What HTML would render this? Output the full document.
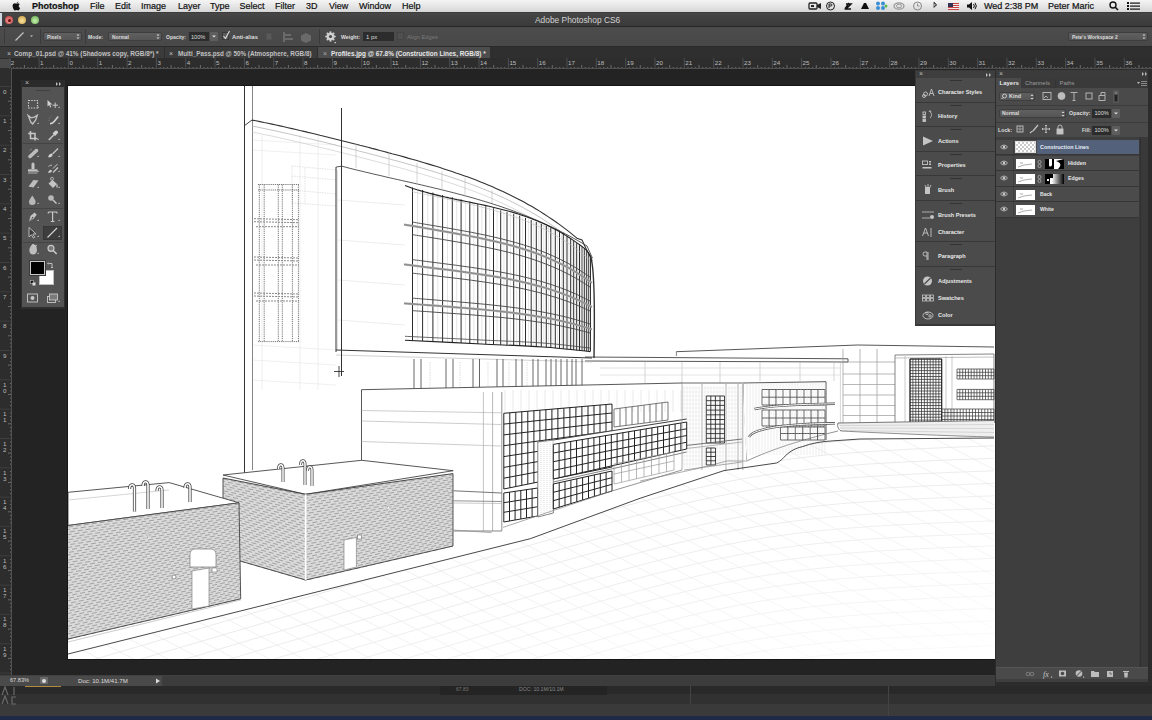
<!DOCTYPE html>
<html><head><meta charset="utf-8">
<style>
*{margin:0;padding:0;box-sizing:border-box}
html,body{width:1152px;height:720px;overflow:hidden;background:#232323;font-family:"Liberation Sans",sans-serif;position:relative}
.a{position:absolute}
.mt{top:1px;font-size:9px;line-height:11px;color:#111;white-space:nowrap;-webkit-text-stroke:0.2px #111}
.ot{color:#dedede;white-space:nowrap}
.dd{background:linear-gradient(#606060,#555);border-radius:2px;border:1px solid #3e3e3e}
.tt{font-size:7px;line-height:13px;color:#c0c0c0;white-space:nowrap}
.pt{font-weight:bold;color:#e8e8e8;white-space:nowrap;line-height:9px}
</style></head><body>
<svg class="a" style="left:0;top:0" width="1152" height="720" viewBox="0 0 1152 720">
<defs><clipPath id="cc"><rect x="68" y="86" width="927" height="573"/></clipPath><clipPath id="road"><path d="M68 654L530.3 538.7L640 498.3L724 470.6L776.6 463C781 461 783 458 785 456.3C790 451 796 448 802.3 446.7C812 443 822 441.5 831 441L860 439L994 438L994 659L68 659Z"/></clipPath></defs>
<rect x="68" y="86" width="927" height="573" fill="#fff"/>
<g clip-path="url(#cc)" fill="none">
<defs><linearGradient id="gfade" x1="0" y1="0" x2="1" y2="1"><stop offset="0" stop-color="#fff" stop-opacity="1"/><stop offset="0.55" stop-color="#fff" stop-opacity="0.85"/><stop offset="1" stop-color="#fff" stop-opacity="0.15"/></linearGradient><mask id="gm"><rect x="68" y="430" width="927" height="230" fill="url(#gfade)"/></mask></defs>
<g clip-path="url(#road)" mask="url(#gm)">
<path d="M60 537.2L72 533.8L84 530.4L96 527.0L108 523.7L120 520.3L132 516.9L144 513.5L156 510.1L168 506.8L180 503.4L192 500.0L204 496.6L216 493.2L228 489.9L240 486.5L252 483.1L264 479.7L276 476.3L288 473.0L300 469.6L312 466.2L324 462.8L336 459.4L348 456.1L360 452.7L372 449.3L384 445.9L396 442.6L408 439.2L420 435.8L432 432.5L444 429.1L456 425.7L468 422.4L480 419.0L492 415.7L504 412.3L516 409.0L528 405.7L540 402.4L552 399.1L564 395.8L576 392.5L588 389.3L600 386.1L612 382.9L624 379.8L636 376.7L648 373.7L660 370.8L672 367.9L684 365.2L696 362.5L708 359.9L720 357.5L732 355.2L744 353.1L756 351.1L768 349.3L780 347.6L792 346.0L804 344.6L816 343.3L828 342.2L840 341.1L852 340.2L864 339.3L876 338.6L888 337.9L900 337.2L912 336.6L924 336.0L936 335.5L948 335.0L960 334.5L972 334.1L984 333.6L996 333.2M60 550.4L72 547.0L84 543.6L96 540.2L108 536.8L120 533.4L132 530.0L144 526.7L156 523.3L168 519.9L180 516.5L192 513.1L204 509.7L216 506.3L228 502.9L240 499.5L252 496.1L264 492.7L276 489.3L288 485.9L300 482.6L312 479.2L324 475.8L336 472.4L348 469.0L360 465.6L372 462.2L384 458.8L396 455.4L408 452.1L420 448.7L432 445.3L444 441.9L456 438.5L468 435.2L480 431.8L492 428.4L504 425.1L516 421.7L528 418.4L540 415.1L552 411.8L564 408.5L576 405.2L588 402.0L600 398.8L612 395.6L624 392.4L636 389.4L648 386.3L660 383.4L672 380.5L684 377.8L696 375.1L708 372.5L720 370.1L732 367.8L744 365.6L756 363.6L768 361.8L780 360.1L792 358.5L804 357.1L816 355.8L828 354.7L840 353.6L852 352.7L864 351.8L876 351.1L888 350.4L900 349.7L912 349.1L924 348.5L936 348.0L948 347.5L960 347.0L972 346.6L984 346.1L996 345.7M60 563.6L72 560.2L84 556.8L96 553.4L108 550.0L120 546.6L132 543.2L144 539.8L156 536.4L168 533.0L180 529.6L192 526.2L204 522.8L216 519.4L228 516.0L240 512.6L252 509.2L264 505.7L276 502.3L288 498.9L300 495.5L312 492.1L324 488.7L336 485.3L348 481.9L360 478.5L372 475.1L384 471.7L396 468.3L408 464.9L420 461.5L432 458.1L444 454.7L456 451.4L468 448.0L480 444.6L492 441.2L504 437.9L516 434.5L528 431.1L540 427.8L552 424.5L564 421.2L576 417.9L588 414.6L600 411.4L612 408.2L624 405.1L636 402.0L648 399.0L660 396.0L672 393.1L684 390.3L696 387.7L708 385.1L720 382.7L732 380.4L744 378.2L756 376.2L768 374.3L780 372.6L792 371.1L804 369.7L816 368.4L828 367.2L840 366.2L852 365.2L864 364.4L876 363.6L888 362.9L900 362.2L912 361.6L924 361.0L936 360.5L948 360.0L960 359.5L972 359.1L984 358.6L996 358.2M60 576.9L72 573.4L84 570.0L96 566.6L108 563.2L120 559.8L132 556.4L144 552.9L156 549.5L168 546.1L180 542.7L192 539.3L204 535.9L216 532.4L228 529.0L240 525.6L252 522.2L264 518.8L276 515.3L288 511.9L300 508.5L312 505.1L324 501.7L336 498.3L348 494.9L360 491.4L372 488.0L384 484.6L396 481.2L408 477.8L420 474.4L432 471.0L444 467.6L456 464.2L468 460.8L480 457.4L492 454.0L504 450.6L516 447.3L528 443.9L540 440.5L552 437.2L564 433.9L576 430.6L588 427.3L600 424.1L612 420.9L624 417.7L636 414.6L648 411.6L660 408.6L672 405.7L684 402.9L696 400.2L708 397.7L720 395.2L732 392.9L744 390.8L756 388.7L768 386.9L780 385.2L792 383.6L804 382.2L816 380.9L828 379.7L840 378.7L852 377.7L864 376.9L876 376.1L888 375.4L900 374.7L912 374.1L924 373.5L936 373.0L948 372.5L960 372.0L972 371.6L984 371.1L996 370.7M60 590.1L72 586.7L84 583.2L96 579.8L108 576.4L120 572.9L132 569.5L144 566.1L156 562.6L168 559.2L180 555.8L192 552.4L204 548.9L216 545.5L228 542.1L240 538.6L252 535.2L264 531.8L276 528.4L288 524.9L300 521.5L312 518.1L324 514.6L336 511.2L348 507.8L360 504.4L372 500.9L384 497.5L396 494.1L408 490.7L420 487.2L432 483.8L444 480.4L456 477.0L468 473.6L480 470.2L492 466.8L504 463.4L516 460.0L528 456.6L540 453.3L552 449.9L564 446.6L576 443.3L588 440.0L600 436.8L612 433.6L624 430.4L636 427.3L648 424.2L660 421.2L672 418.3L684 415.5L696 412.8L708 410.3L720 407.8L732 405.5L744 403.3L756 401.3L768 399.4L780 397.7L792 396.1L804 394.7L816 393.4L828 392.2L840 391.2L852 390.2L864 389.4L876 388.6L888 387.9L900 387.2L912 386.6L924 386.0L936 385.5L948 385.0L960 384.5L972 384.1L984 383.6L996 383.2M60 603.3L72 599.9L84 596.4L96 593.0L108 589.5L120 586.1L132 582.7L144 579.2L156 575.8L168 572.3L180 568.9L192 565.4L204 562.0L216 558.6L228 555.1L240 551.7L252 548.2L264 544.8L276 541.4L288 537.9L300 534.5L312 531.0L324 527.6L336 524.2L348 520.7L360 517.3L372 513.8L384 510.4L396 507.0L408 503.5L420 500.1L432 496.7L444 493.2L456 489.8L468 486.4L480 483.0L492 479.6L504 476.2L516 472.8L528 469.4L540 466.0L552 462.6L564 459.3L576 456.0L588 452.7L600 449.4L612 446.2L624 443.0L636 439.9L648 436.8L660 433.9L672 430.9L684 428.1L696 425.4L708 422.8L720 420.4L732 418.0L744 415.9L756 413.8L768 412.0L780 410.2L792 408.7L804 407.2L816 405.9L828 404.8L840 403.7L852 402.8L864 401.9L876 401.1L888 400.4L900 399.7L912 399.1L924 398.6L936 398.0L948 397.5L960 397.0L972 396.6L984 396.1L996 395.7M60 616.5L72 613.1L84 609.6L96 606.2L108 602.7L120 599.3L132 595.8L144 592.4L156 588.9L168 585.4L180 582.0L192 578.5L204 575.1L216 571.6L228 568.2L240 564.7L252 561.3L264 557.8L276 554.4L288 550.9L300 547.5L312 544.0L324 540.5L336 537.1L348 533.6L360 530.2L372 526.7L384 523.3L396 519.8L408 516.4L420 512.9L432 509.5L444 506.1L456 502.6L468 499.2L480 495.8L492 492.3L504 488.9L516 485.5L528 482.1L540 478.7L552 475.4L564 472.0L576 468.7L588 465.4L600 462.1L612 458.9L624 455.7L636 452.5L648 449.5L660 446.5L672 443.5L684 440.7L696 438.0L708 435.4L720 432.9L732 430.6L744 428.4L756 426.4L768 424.5L780 422.8L792 421.2L804 419.8L816 418.5L828 417.3L840 416.2L852 415.3L864 414.4L876 413.6L888 412.9L900 412.2L912 411.6L924 411.1L936 410.5L948 410.0L960 409.5L972 409.1L984 408.6L996 408.2M60 629.8L72 626.3L84 622.8L96 619.4L108 615.9L120 612.4L132 609.0L144 605.5L156 602.0L168 598.6L180 595.1L192 591.6L204 588.2L216 584.7L228 581.2L240 577.8L252 574.3L264 570.8L276 567.4L288 563.9L300 560.4L312 557.0L324 553.5L336 550.0L348 546.6L360 543.1L372 539.6L384 536.2L396 532.7L408 529.3L420 525.8L432 522.3L444 518.9L456 515.4L468 512.0L480 508.6L492 505.1L504 501.7L516 498.3L528 494.9L540 491.5L552 488.1L564 484.7L576 481.4L588 478.1L600 474.8L612 471.5L624 468.3L636 465.2L648 462.1L660 459.1L672 456.2L684 453.3L696 450.6L708 448.0L720 445.5L732 443.2L744 441.0L756 438.9L768 437.0L780 435.3L792 433.7L804 432.3L816 431.0L828 429.8L840 428.7L852 427.8L864 426.9L876 426.1L888 425.4L900 424.7L912 424.1L924 423.6L936 423.0L948 422.5L960 422.0L972 421.6L984 421.1L996 420.7M60 643.0L72 639.5L84 636.0L96 632.6L108 629.1L120 625.6L132 622.1L144 618.6L156 615.2L168 611.7L180 608.2L192 604.7L204 601.2L216 597.8L228 594.3L240 590.8L252 587.3L264 583.8L276 580.4L288 576.9L300 573.4L312 569.9L324 566.5L336 563.0L348 559.5L360 556.0L372 552.5L384 549.1L396 545.6L408 542.1L420 538.7L432 535.2L444 531.7L456 528.3L468 524.8L480 521.3L492 517.9L504 514.5L516 511.0L528 507.6L540 504.2L552 500.8L564 497.4L576 494.1L588 490.7L600 487.4L612 484.2L624 481.0L636 477.8L648 474.7L660 471.7L672 468.8L684 465.9L696 463.2L708 460.6L720 458.1L732 455.7L744 453.5L756 451.5L768 449.6L780 447.8L792 446.2L804 444.8L816 443.5L828 442.3L840 441.2L852 440.3L864 439.4L876 438.6L888 437.9L900 437.2L912 436.6L924 436.1L936 435.5L948 435.0L960 434.5L972 434.1L984 433.6L996 433.2M60 656.2L72 652.7L84 649.2L96 645.8L108 642.3L120 638.8L132 635.3L144 631.8L156 628.3L168 624.8L180 621.3L192 617.8L204 614.3L216 610.8L228 607.3L240 603.8L252 600.4L264 596.9L276 593.4L288 589.9L300 586.4L312 582.9L324 579.4L336 575.9L348 572.4L360 568.9L372 565.4L384 562.0L396 558.5L408 555.0L420 551.5L432 548.0L444 544.5L456 541.1L468 537.6L480 534.1L492 530.7L504 527.2L516 523.8L528 520.3L540 516.9L552 513.5L564 510.1L576 506.8L588 503.4L600 500.1L612 496.8L624 493.6L636 490.5L648 487.3L660 484.3L672 481.4L684 478.5L696 475.8L708 473.1L720 470.6L732 468.3L744 466.1L756 464.0L768 462.1L780 460.4L792 458.8L804 457.3L816 456.0L828 454.8L840 453.8L852 452.8L864 451.9L876 451.1L888 450.4L900 449.7L912 449.1L924 448.6L936 448.0L948 447.5L960 447.0L972 446.6L984 446.2L996 445.7M60 669.5L72 666.0L84 662.4L96 658.9L108 655.4L120 651.9L132 648.4L144 644.9L156 641.4L168 637.9L180 634.4L192 630.9L204 627.4L216 623.9L228 620.4L240 616.9L252 613.4L264 609.9L276 606.4L288 602.9L300 599.4L312 595.9L324 592.4L336 588.9L348 585.4L360 581.9L372 578.4L384 574.9L396 571.4L408 567.9L420 564.4L432 560.9L444 557.4L456 553.9L468 550.4L480 546.9L492 543.5L504 540.0L516 536.5L528 533.1L540 529.7L552 526.2L564 522.8L576 519.5L588 516.1L600 512.8L612 509.5L624 506.3L636 503.1L648 500.0L660 496.9L672 494.0L684 491.1L696 488.3L708 485.7L720 483.2L732 480.8L744 478.6L756 476.6L768 474.6L780 472.9L792 471.3L804 469.8L816 468.5L828 467.3L840 466.3L852 465.3L864 464.4L876 463.6L888 462.9L900 462.3L912 461.6L924 461.1L936 460.5L948 460.0L960 459.6L972 459.1L984 458.7L996 458.2M60 682.7L72 679.2L84 675.6L96 672.1L108 668.6L120 665.1L132 661.6L144 658.1L156 654.5L168 651.0L180 647.5L192 644.0L204 640.5L216 637.0L228 633.4L240 629.9L252 626.4L264 622.9L276 619.4L288 615.9L300 612.3L312 608.8L324 605.3L336 601.8L348 598.3L360 594.8L372 591.3L384 587.7L396 584.2L408 580.7L420 577.2L432 573.7L444 570.2L456 566.7L468 563.2L480 559.7L492 556.2L504 552.8L516 549.3L528 545.8L540 542.4L552 539.0L564 535.5L576 532.2L588 528.8L600 525.5L612 522.2L624 518.9L636 515.7L648 512.6L660 509.5L672 506.6L684 503.7L696 500.9L708 498.3L720 495.8L732 493.4L744 491.2L756 489.1L768 487.2L780 485.4L792 483.8L804 482.4L816 481.1L828 479.9L840 478.8L852 477.8L864 476.9L876 476.2L888 475.4L900 474.8L912 474.1L924 473.6L936 473.0L948 472.5L960 472.1L972 471.6L984 471.2L996 470.7M60 695.9L72 692.4L84 688.9L96 685.3L108 681.8L120 678.3L132 674.7L144 671.2L156 667.7L168 664.1L180 660.6L192 657.1L204 653.6L216 650.0L228 646.5L240 643.0L252 639.4L264 635.9L276 632.4L288 628.8L300 625.3L312 621.8L324 618.3L336 614.7L348 611.2L360 607.7L372 604.2L384 600.6L396 597.1L408 593.6L420 590.1L432 586.6L444 583.0L456 579.5L468 576.0L480 572.5L492 569.0L504 565.5L516 562.0L528 558.6L540 555.1L552 551.7L564 548.2L576 544.8L588 541.5L600 538.1L612 534.8L624 531.6L636 528.4L648 525.2L660 522.2L672 519.2L684 516.3L696 513.5L708 510.9L720 508.3L732 506.0L744 503.7L756 501.6L768 499.7L780 498.0L792 496.4L804 494.9L816 493.6L828 492.4L840 491.3L852 490.3L864 489.5L876 488.7L888 487.9L900 487.3L912 486.7L924 486.1L936 485.5L948 485.0L960 484.6L972 484.1L984 483.7L996 483.2M60 709.1L72 705.6L84 702.1L96 698.5L108 695.0L120 691.4L132 687.9L144 684.3L156 680.8L168 677.3L180 673.7L192 670.2L204 666.6L216 663.1L228 659.5L240 656.0L252 652.5L264 648.9L276 645.4L288 641.8L300 638.3L312 634.8L324 631.2L336 627.7L348 624.1L360 620.6L372 617.1L384 613.5L396 610.0L408 606.5L420 602.9L432 599.4L444 595.9L456 592.3L468 588.8L480 585.3L492 581.8L504 578.3L516 574.8L528 571.3L540 567.8L552 564.4L564 561.0L576 557.5L588 554.2L600 550.8L612 547.5L624 544.2L636 541.0L648 537.9L660 534.8L672 531.8L684 528.9L696 526.1L708 523.4L720 520.9L732 518.5L744 516.3L756 514.2L768 512.3L780 510.5L792 508.9L804 507.4L816 506.1L828 504.9L840 503.8L852 502.8L864 502.0L876 501.2L888 500.4L900 499.8L912 499.2L924 498.6L936 498.0L948 497.5L960 497.1L972 496.6L984 496.2L996 495.7M60 722.4L72 718.8L84 715.3L96 711.7L108 708.1L120 704.6L132 701.0L144 697.5L156 693.9L168 690.4L180 686.8L192 683.3L204 679.7L216 676.2L228 672.6L240 669.0L252 665.5L264 661.9L276 658.4L288 654.8L300 651.3L312 647.7L324 644.2L336 640.6L348 637.1L360 633.5L372 630.0L384 626.4L396 622.9L408 619.3L420 615.8L432 612.2L444 608.7L456 605.2L468 601.6L480 598.1L492 594.6L504 591.1L516 587.6L528 584.1L540 580.6L552 577.1L564 573.7L576 570.2L588 566.8L600 563.5L612 560.1L624 556.9L636 553.6L648 550.5L660 547.4L672 544.4L684 541.5L696 538.7L708 536.0L720 533.5L732 531.1L744 528.8L756 526.7L768 524.8L780 523.0L792 521.4L804 519.9L816 518.6L828 517.4L840 516.3L852 515.4L864 514.5L876 513.7L888 512.9L900 512.3L912 511.7L924 511.1L936 510.5L948 510.0L960 509.6L972 509.1L984 508.7L996 508.2M60 735.6L72 732.0L84 728.5L96 724.9L108 721.3L120 717.8L132 714.2L144 710.6L156 707.1L168 703.5L180 699.9L192 696.4L204 692.8L216 689.2L228 685.7L240 682.1L252 678.5L264 675.0L276 671.4L288 667.8L300 664.3L312 660.7L324 657.1L336 653.6L348 650.0L360 646.4L372 642.9L384 639.3L396 635.7L408 632.2L420 628.6L432 625.1L444 621.5L456 618.0L468 614.4L480 610.9L492 607.4L504 603.8L516 600.3L528 596.8L540 593.3L552 589.8L564 586.4L576 582.9L588 579.5L600 576.1L612 572.8L624 569.5L636 566.3L648 563.1L660 560.0L672 557.0L684 554.1L696 551.3L708 548.6L720 546.0L732 543.6L744 541.4L756 539.3L768 537.3L780 535.6L792 533.9L804 532.5L816 531.1L828 529.9L840 528.9L852 527.9L864 527.0L876 526.2L888 525.5L900 524.8L912 524.2L924 523.6L936 523.1L948 522.5L960 522.1L972 521.6L984 521.2L996 520.7M60 748.8L72 745.2L84 741.7L96 738.1L108 734.5L120 730.9L132 727.3L144 723.8L156 720.2L168 716.6L180 713.0L192 709.4L204 705.9L216 702.3L228 698.7L240 695.1L252 691.5L264 688.0L276 684.4L288 680.8L300 677.2L312 673.7L324 670.1L336 666.5L348 662.9L360 659.3L372 655.8L384 652.2L396 648.6L408 645.1L420 641.5L432 637.9L444 634.4L456 630.8L468 627.2L480 623.7L492 620.1L504 616.6L516 613.1L528 609.5L540 606.0L552 602.5L564 599.1L576 595.6L588 592.2L600 588.8L612 585.5L624 582.2L636 578.9L648 575.7L660 572.6L672 569.6L684 566.7L696 563.9L708 561.2L720 558.6L732 556.2L744 553.9L756 551.8L768 549.9L780 548.1L792 546.5L804 545.0L816 543.7L828 542.5L840 541.4L852 540.4L864 539.5L876 538.7L888 538.0L900 537.3L912 536.7L924 536.1L936 535.6L948 535.0L960 534.6L972 534.1L984 533.7L996 533.2M60 762.1L72 758.5L84 754.9L96 751.3L108 747.7L120 744.1L132 740.5L144 736.9L156 733.3L168 729.7L180 726.1L192 722.5L204 718.9L216 715.4L228 711.8L240 708.2L252 704.6L264 701.0L276 697.4L288 693.8L300 690.2L312 686.6L324 683.0L336 679.4L348 675.9L360 672.3L372 668.7L384 665.1L396 661.5L408 657.9L420 654.3L432 650.8L444 647.2L456 643.6L468 640.0L480 636.5L492 632.9L504 629.4L516 625.8L528 622.3L540 618.8L552 615.3L564 611.8L576 608.3L588 604.9L600 601.5L612 598.1L624 594.8L636 591.5L648 588.4L660 585.2L672 582.2L684 579.3L696 576.4L708 573.7L720 571.2L732 568.7L744 566.5L756 564.4L768 562.4L780 560.6L792 559.0L804 557.5L816 556.2L828 555.0L840 553.9L852 552.9L864 552.0L876 551.2L888 550.5L900 549.8L912 549.2L924 548.6L936 548.1L948 547.5L960 547.1L972 546.6L984 546.2L996 545.7M60 775.3L72 771.7L84 768.1L96 764.5L108 760.9L120 757.3L132 753.7L144 750.0L156 746.4L168 742.8L180 739.2L192 735.6L204 732.0L216 728.4L228 724.8L240 721.2L252 717.6L264 714.0L276 710.4L288 706.8L300 703.2L312 699.6L324 696.0L336 692.4L348 688.8L360 685.2L372 681.6L384 678.0L396 674.4L408 670.8L420 667.2L432 663.6L444 660.0L456 656.4L468 652.8L480 649.3L492 645.7L504 642.1L516 638.6L528 635.0L540 631.5L552 628.0L564 624.5L576 621.0L588 617.6L600 614.2L612 610.8L624 607.5L636 604.2L648 601.0L660 597.8L672 594.8L684 591.9L696 589.0L708 586.3L720 583.7L732 581.3L744 579.0L756 576.9L768 575.0L780 573.2L792 571.5L804 570.0L816 568.7L828 567.5L840 566.4L852 565.4L864 564.5L876 563.7L888 563.0L900 562.3L912 561.7L924 561.1L936 560.6L948 560.1L960 559.6L972 559.1L984 558.7L996 558.2M60 788.5L72 784.9L84 781.3L96 777.7L108 774.0L120 770.4L132 766.8L144 763.2L156 759.6L168 756.0L180 752.3L192 748.7L204 745.1L216 741.5L228 737.9L240 734.3L252 730.6L264 727.0L276 723.4L288 719.8L300 716.2L312 712.6L324 708.9L336 705.3L348 701.7L360 698.1L372 694.5L384 690.9L396 687.3L408 683.7L420 680.0L432 676.4L444 672.8L456 669.2L468 665.6L480 662.1L492 658.5L504 654.9L516 651.3L528 647.8L540 644.2L552 640.7L564 637.2L576 633.7L588 630.2L600 626.8L612 623.4L624 620.1L636 616.8L648 613.6L660 610.5L672 607.4L684 604.5L696 601.6L708 598.9L720 596.3L732 593.9L744 591.6L756 589.5L768 587.5L780 585.7L792 584.1L804 582.6L816 581.2L828 580.0L840 578.9L852 577.9L864 577.0L876 576.2L888 575.5L900 574.8L912 574.2L924 573.6L936 573.1L948 572.6L960 572.1L972 571.6L984 571.2L996 570.7M60 801.7L72 798.1L84 794.5L96 790.8L108 787.2L120 783.6L132 780.0L144 776.3L156 772.7L168 769.1L180 765.4L192 761.8L204 758.2L216 754.6L228 750.9L240 747.3L252 743.7L264 740.0L276 736.4L288 732.8L300 729.1L312 725.5L324 721.9L336 718.3L348 714.6L360 711.0L372 707.4L384 703.8L396 700.1L408 696.5L420 692.9L432 689.3L444 685.7L456 682.1L468 678.4L480 674.8L492 671.3L504 667.7L516 664.1L528 660.5L540 657.0L552 653.4L564 649.9L576 646.4L588 642.9L600 639.5L612 636.1L624 632.7L636 629.5L648 626.2L660 623.1L672 620.0L684 617.0L696 614.2L708 611.5L720 608.9L732 606.4L744 604.1L756 602.0L768 600.0L780 598.2L792 596.6L804 595.1L816 593.7L828 592.5L840 591.4L852 590.4L864 589.5L876 588.7L888 588.0L900 587.3L912 586.7L924 586.1L936 585.6L948 585.1L960 584.6L972 584.1L984 583.7L996 583.2M60 815.0L72 811.3L84 807.7L96 804.0L108 800.4L120 796.8L132 793.1L144 789.5L156 785.8L168 782.2L180 778.5L192 774.9L204 771.3L216 767.6L228 764.0L240 760.3L252 756.7L264 753.1L276 749.4L288 745.8L300 742.1L312 738.5L324 734.8L336 731.2L348 727.6L360 723.9L372 720.3L384 716.7L396 713.0L408 709.4L420 705.8L432 702.1L444 698.5L456 694.9L468 691.3L480 687.6L492 684.0L504 680.4L516 676.8L528 673.3L540 669.7L552 666.1L564 662.6L576 659.1L588 655.6L600 652.2L612 648.8L624 645.4L636 642.1L648 638.9L660 635.7L672 632.6L684 629.6L696 626.8L708 624.0L720 621.4L732 619.0L744 616.7L756 614.6L768 612.6L780 610.8L792 609.1L804 607.6L816 606.3L828 605.0L840 603.9L852 602.9L864 602.1L876 601.2L888 600.5L900 599.8L912 599.2L924 598.6L936 598.1L948 597.6L960 597.1L972 596.6L984 596.2L996 595.7M60 828.2L72 824.5L84 820.9L96 817.2L108 813.6L120 809.9L132 806.3L144 802.6L156 799.0L168 795.3L180 791.6L192 788.0L204 784.3L216 780.7L228 777.0L240 773.4L252 769.7L264 766.1L276 762.4L288 758.8L300 755.1L312 751.5L324 747.8L336 744.1L348 740.5L360 736.8L372 733.2L384 729.5L396 725.9L408 722.3L420 718.6L432 715.0L444 711.3L456 707.7L468 704.1L480 700.4L492 696.8L504 693.2L516 689.6L528 686.0L540 682.4L552 678.9L564 675.3L576 671.8L588 668.3L600 664.8L612 661.4L624 658.0L636 654.7L648 651.5L660 648.3L672 645.2L684 642.2L696 639.4L708 636.6L720 634.0L732 631.5L744 629.2L756 627.1L768 625.1L780 623.3L792 621.6L804 620.1L816 618.8L828 617.6L840 616.5L852 615.5L864 614.6L876 613.7L888 613.0L900 612.3L912 611.7L924 611.1L936 610.6L948 610.1L960 609.6L972 609.1L984 608.7L996 608.2M60 841.4L72 837.8L84 834.1L96 830.4L108 826.8L120 823.1L132 819.4L144 815.8L156 812.1L168 808.4L180 804.7L192 801.1L204 797.4L216 793.7L228 790.1L240 786.4L252 782.7L264 779.1L276 775.4L288 771.7L300 768.1L312 764.4L324 760.8L336 757.1L348 753.4L360 749.8L372 746.1L384 742.4L396 738.8L408 735.1L420 731.5L432 727.8L444 724.2L456 720.5L468 716.9L480 713.2L492 709.6L504 706.0L516 702.3L528 698.7L540 695.1L552 691.6L564 688.0L576 684.5L588 681.0L600 677.5L612 674.1L624 670.7L636 667.4L648 664.1L660 660.9L672 657.8L684 654.8L696 651.9L708 649.2L720 646.6L732 644.1L744 641.8L756 639.6L768 637.7L780 635.8L792 634.2L804 632.7L816 631.3L828 630.1L840 629.0L852 628.0L864 627.1L876 626.3L888 625.5L900 624.8L912 624.2L924 623.6L936 623.1L948 622.6L960 622.1L972 621.6L984 621.2L996 620.7M60 854.6L72 851.0L84 847.3L96 843.6L108 839.9L120 836.2L132 832.6L144 828.9L156 825.2L168 821.5L180 817.9L192 814.2L204 810.5L216 806.8L228 803.1L240 799.5L252 795.8L264 792.1L276 788.4L288 784.7L300 781.1L312 777.4L324 773.7L336 770.0L348 766.4L360 762.7L372 759.0L384 755.3L396 751.7L408 748.0L420 744.3L432 740.6L444 737.0L456 733.3L468 729.7L480 726.0L492 722.4L504 718.7L516 715.1L528 711.5L540 707.9L552 704.3L564 700.7L576 697.2L588 693.7L600 690.2L612 686.7L624 683.3L636 680.0L648 676.7L660 673.5L672 670.4L684 667.4L696 664.5L708 661.8L720 659.1L732 656.7L744 654.3L756 652.2L768 650.2L780 648.4L792 646.7L804 645.2L816 643.8L828 642.6L840 641.5L852 640.5L864 639.6L876 638.8L888 638.0L900 637.3L912 636.7L924 636.1L936 635.6L948 635.1L960 634.6L972 634.1L984 633.7L996 633.2M60 867.9L72 864.2L84 860.5L96 856.8L108 853.1L120 849.4L132 845.7L144 842.0L156 838.3L168 834.6L180 831.0L192 827.3L204 823.6L216 819.9L228 816.2L240 812.5L252 808.8L264 805.1L276 801.4L288 797.7L300 794.0L312 790.4L324 786.7L336 783.0L348 779.3L360 775.6L372 771.9L384 768.2L396 764.5L408 760.9L420 757.2L432 753.5L444 749.8L456 746.1L468 742.5L480 738.8L492 735.1L504 731.5L516 727.9L528 724.2L540 720.6L552 717.0L564 713.4L576 709.9L588 706.3L600 702.8L612 699.4L624 696.0L636 692.6L648 689.4L660 686.2L672 683.0L684 680.0L696 677.1L708 674.3L720 671.7L732 669.2L744 666.9L756 664.7L768 662.7L780 660.9L792 659.2L804 657.7L816 656.3L828 655.1L840 654.0L852 653.0L864 652.1L876 651.3L888 650.5L900 649.8L912 649.2L924 648.6L936 648.1L948 647.6L960 647.1L972 646.6L984 646.2L996 645.7M60 881.1L72 877.4L84 873.7L96 870.0L108 866.3L120 862.6L132 858.9L144 855.2L156 851.5L168 847.8L180 844.1L192 840.4L204 836.6L216 832.9L228 829.2L240 825.5L252 821.8L264 818.1L276 814.4L288 810.7L300 807.0L312 803.3L324 799.6L336 795.9L348 792.2L360 788.5L372 784.8L384 781.1L396 777.4L408 773.7L420 770.0L432 766.3L444 762.6L456 759.0L468 755.3L480 751.6L492 747.9L504 744.3L516 740.6L528 737.0L540 733.3L552 729.7L564 726.1L576 722.6L588 719.0L600 715.5L612 712.1L624 708.6L636 705.3L648 702.0L660 698.8L672 695.6L684 692.6L696 689.7L708 686.9L720 684.3L732 681.8L744 679.4L756 677.3L768 675.3L780 673.4L792 671.8L804 670.2L816 668.9L828 667.6L840 666.5L852 665.5L864 664.6L876 663.8L888 663.0L900 662.3L912 661.7L924 661.1L936 660.6L948 660.1L960 659.6L972 659.1L984 658.7L996 658.2M60 894.3L72 890.6L84 886.9L96 883.2L108 879.5L120 875.7L132 872.0L144 868.3L156 864.6L168 860.9L180 857.2L192 853.4L204 849.7L216 846.0L228 842.3L240 838.6L252 834.9L264 831.1L276 827.4L288 823.7L300 820.0L312 816.3L324 812.6L336 808.9L348 805.1L360 801.4L372 797.7L384 794.0L396 790.3L408 786.6L420 782.9L432 779.2L444 775.5L456 771.8L468 768.1L480 764.4L492 760.7L504 757.0L516 753.4L528 749.7L540 746.1L552 742.4L564 738.8L576 735.3L588 731.7L600 728.2L612 724.7L624 721.3L636 717.9L648 714.6L660 711.4L672 708.2L684 705.2L696 702.3L708 699.5L720 696.8L732 694.3L744 692.0L756 689.8L768 687.8L780 686.0L792 684.3L804 682.8L816 681.4L828 680.1L840 679.0L852 678.0L864 677.1L876 676.3L888 675.5L900 674.9L912 674.2L924 673.6L936 673.1L948 672.6L960 672.1L972 671.6L984 671.2L996 670.7M60 907.6L72 903.8L84 900.1L96 896.4L108 892.6L120 888.9L132 885.2L144 881.5L156 877.7L168 874.0L180 870.3L192 866.5L204 862.8L216 859.1L228 855.3L240 851.6L252 847.9L264 844.2L276 840.4L288 836.7L300 833.0L312 829.2L324 825.5L336 821.8L348 818.1L360 814.3L372 810.6L384 806.9L396 803.2L408 799.4L420 795.7L432 792.0L444 788.3L456 784.6L468 780.9L480 777.2L492 773.5L504 769.8L516 766.1L528 762.5L540 758.8L552 755.2L564 751.5L576 748.0L588 744.4L600 740.9L612 737.4L624 733.9L636 730.5L648 727.2L660 724.0L672 720.8L684 717.8L696 714.9L708 712.1L720 709.4L732 706.9L744 704.6L756 702.4L768 700.4L780 698.5L792 696.8L804 695.3L816 693.9L828 692.7L840 691.5L852 690.5L864 689.6L876 688.8L888 688.0L900 687.4L912 686.7L924 686.1L936 685.6L948 685.1L960 684.6L972 684.1L984 683.7L996 683.2M60 920.8L72 917.0L84 913.3L96 909.6L108 905.8L120 902.1L132 898.3L144 894.6L156 890.9L168 887.1L180 883.4L192 879.6L204 875.9L216 872.1L228 868.4L240 864.7L252 860.9L264 857.2L276 853.4L288 849.7L300 846.0L312 842.2L324 838.5L336 834.7L348 831.0L360 827.3L372 823.5L384 819.8L396 816.0L408 812.3L420 808.6L432 804.9L444 801.1L456 797.4L468 793.7L480 790.0L492 786.3L504 782.6L516 778.9L528 775.2L540 771.5L552 767.9L564 764.3L576 760.6L588 757.1L600 753.5L612 750.0L624 746.6L636 743.2L648 739.9L660 736.6L672 733.5L684 730.4L696 727.5L708 724.6L720 722.0L732 719.5L744 717.1L756 714.9L768 712.9L780 711.0L792 709.3L804 707.8L816 706.4L828 705.2L840 704.1L852 703.0L864 702.1L876 701.3L888 700.6L900 699.9L912 699.2L924 698.6L936 698.1L948 697.6L960 697.1L972 696.6L984 696.2L996 695.7M60 934.0L72 930.3L84 926.5L96 922.8L108 919.0L120 915.2L132 911.5L144 907.7L156 904.0L168 900.2L180 896.5L192 892.7L204 889.0L216 885.2L228 881.5L240 877.7L252 873.9L264 870.2L276 866.4L288 862.7L300 858.9L312 855.2L324 851.4L336 847.7L348 843.9L360 840.2L372 836.4L384 832.7L396 828.9L408 825.2L420 821.4L432 817.7L444 814.0L456 810.2L468 806.5L480 802.8L492 799.0L504 795.3L516 791.6L528 787.9L540 784.3L552 780.6L564 777.0L576 773.3L588 769.8L600 766.2L612 762.7L624 759.2L636 755.8L648 752.5L660 749.2L672 746.1L684 743.0L696 740.0L708 737.2L720 734.5L732 732.0L744 729.7L756 727.5L768 725.4L780 723.6L792 721.9L804 720.3L816 718.9L828 717.7L840 716.6L852 715.6L864 714.6L876 713.8L888 713.1L900 712.4L912 711.7L924 711.1L936 710.6L948 710.1L960 709.6L972 709.1L984 708.7L996 708.2M60 947.2L72 943.5L84 939.7L96 935.9L108 932.2L120 928.4L132 924.6L144 920.9L156 917.1L168 913.3L180 909.6L192 905.8L204 902.0L216 898.3L228 894.5L240 890.7L252 887.0L264 883.2L276 879.4L288 875.7L300 871.9L312 868.1L324 864.4L336 860.6L348 856.9L360 853.1L372 849.3L384 845.6L396 841.8L408 838.0L420 834.3L432 830.5L444 826.8L456 823.0L468 819.3L480 815.6L492 811.8L504 808.1L516 804.4L528 800.7L540 797.0L552 793.3L564 789.7L576 786.0L588 782.4L600 778.9L612 775.3L624 771.9L636 768.5L648 765.1L660 761.8L672 758.7L684 755.6L696 752.6L708 749.8L720 747.1L732 744.6L744 742.2L756 740.0L768 738.0L780 736.1L792 734.4L804 732.9L816 731.5L828 730.2L840 729.1L852 728.1L864 727.2L876 726.3L888 725.6L900 724.9L912 724.2L924 723.7L936 723.1L948 722.6L960 722.1L972 721.6L984 721.2L996 720.8M60 960.5L72 956.7L84 952.9L96 949.1L108 945.4L120 941.6L132 937.8L144 934.0L156 930.2L168 926.5L180 922.7L192 918.9L204 915.1L216 911.3L228 907.6L240 903.8L252 900.0L264 896.2L276 892.4L288 888.7L300 884.9L312 881.1L324 877.3L336 873.6L348 869.8L360 866.0L372 862.2L384 858.5L396 854.7L408 850.9L420 847.1L432 843.4L444 839.6L456 835.9L468 832.1L480 828.3L492 824.6L504 820.9L516 817.1L528 813.4L540 809.7L552 806.0L564 802.4L576 798.7L588 795.1L600 791.5L612 788.0L624 784.5L636 781.1L648 777.7L660 774.5L672 771.3L684 768.2L696 765.2L708 762.4L720 759.7L732 757.1L744 754.8L756 752.6L768 750.5L780 748.6L792 746.9L804 745.4L816 744.0L828 742.7L840 741.6L852 740.6L864 739.7L876 738.8L888 738.1L900 737.4L912 736.7L924 736.2L936 735.6L948 735.1L960 734.6L972 734.1L984 733.7L996 733.3M60 973.7L72 969.9L84 966.1L96 962.3L108 958.5L120 954.7L132 950.9L144 947.2L156 943.4L168 939.6L180 935.8L192 932.0L204 928.2L216 924.4L228 920.6L240 916.8L252 913.0L264 909.2L276 905.4L288 901.7L300 897.9L312 894.1L324 890.3L336 886.5L348 882.7L360 878.9L372 875.1L384 871.3L396 867.6L408 863.8L420 860.0L432 856.2L444 852.4L456 848.7L468 844.9L480 841.1L492 837.4L504 833.6L516 829.9L528 826.2L540 822.5L552 818.8L564 815.1L576 811.4L588 807.8L600 804.2L612 800.7L624 797.2L636 793.7L648 790.4L660 787.1L672 783.9L684 780.8L696 777.8L708 775.0L720 772.3L732 769.7L744 767.3L756 765.1L768 763.0L780 761.2L792 759.5L804 757.9L816 756.5L828 755.2L840 754.1L852 753.1L864 752.2L876 751.3L888 750.6L900 749.9L912 749.3L924 748.7L936 748.1L948 747.6L960 747.1L972 746.6L984 746.2L996 745.8M60 986.9L72 983.1L84 979.3L96 975.5L108 971.7L120 967.9L132 964.1L144 960.3L156 956.5L168 952.7L180 948.9L192 945.1L204 941.3L216 937.5L228 933.7L240 929.9L252 926.1L264 922.3L276 918.5L288 914.6L300 910.8L312 907.0L324 903.2L336 899.4L348 895.6L360 891.8L372 888.0L384 884.2L396 880.4L408 876.6L420 872.9L432 869.1L444 865.3L456 861.5L468 857.7L480 853.9L492 850.2L504 846.4L516 842.7L528 838.9L540 835.2L552 831.5L564 827.8L576 824.1L588 820.5L600 816.9L612 813.3L624 809.8L636 806.4L648 803.0L660 799.7L672 796.5L684 793.4L696 790.4L708 787.5L720 784.8L732 782.3L744 779.9L756 777.6L768 775.6L780 773.7L792 772.0L804 770.4L816 769.0L828 767.8L840 766.6L852 765.6L864 764.7L876 763.8L888 763.1L900 762.4L912 761.8L924 761.2L936 760.6L948 760.1L960 759.6L972 759.1L984 758.7L996 758.3M60 1000.2L72 996.3L84 992.5L96 988.7L108 984.9L120 981.1L132 977.3L144 973.4L156 969.6L168 965.8L180 962.0L192 958.2L204 954.4L216 950.5L228 946.7L240 942.9L252 939.1L264 935.3L276 931.5L288 927.6L300 923.8L312 920.0L324 916.2L336 912.4L348 908.6L360 904.8L372 900.9L384 897.1L396 893.3L408 889.5L420 885.7L432 881.9L444 878.1L456 874.3L468 870.5L480 866.7L492 862.9L504 859.2L516 855.4L528 851.7L540 847.9L552 844.2L564 840.5L576 836.8L588 833.2L600 829.6L612 826.0L624 822.5L636 819.0L648 815.6L660 812.3L672 809.1L684 806.0L696 803.0L708 800.1L720 797.4L732 794.8L744 792.4L756 790.2L768 788.1L780 786.2L792 784.5L804 783.0L816 781.6L828 780.3L840 779.1L852 778.1L864 777.2L876 776.4L888 775.6L900 774.9L912 774.3L924 773.7L936 773.1L948 772.6L960 772.1L972 771.6L984 771.2L996 770.8M60 1013.4L72 1009.6L84 1005.7L96 1001.9L108 998.1L120 994.2L132 990.4L144 986.6L156 982.7L168 978.9L180 975.1L192 971.3L204 967.4L216 963.6L228 959.8L240 955.9L252 952.1L264 948.3L276 944.5L288 940.6L300 936.8L312 933.0L324 929.1L336 925.3L348 921.5L360 917.7L372 913.8L384 910.0L396 906.2L408 902.4L420 898.6L432 894.7L444 890.9L456 887.1L468 883.3L480 879.5L492 875.7L504 871.9L516 868.2L528 864.4L540 860.6L552 856.9L564 853.2L576 849.5L588 845.8L600 842.2L612 838.6L624 835.1L636 831.6L648 828.2L660 824.9L672 821.7L684 818.6L696 815.6L708 812.7L720 810.0L732 807.4L744 805.0L756 802.7L768 800.7L780 798.8L792 797.0L804 795.5L816 794.1L828 792.8L840 791.7L852 790.6L864 789.7L876 788.9L888 788.1L900 787.4L912 786.8L924 786.2L936 785.6L948 785.1L960 784.6L972 784.1L984 783.7L996 783.3M60 1026.6L72 1022.8L84 1018.9L96 1015.1L108 1011.2L120 1007.4L132 1003.6L144 999.7L156 995.9L168 992.0L180 988.2L192 984.4L204 980.5L216 976.7L228 972.8L240 969.0L252 965.1L264 961.3L276 957.5L288 953.6L300 949.8L312 945.9L324 942.1L336 938.3L348 934.4L360 930.6L372 926.7L384 922.9L396 919.1L408 915.2L420 911.4L432 907.6L444 903.8L456 899.9L468 896.1L480 892.3L492 888.5L504 884.7L516 880.9L528 877.1L540 873.4L552 869.6L564 865.9L576 862.2L588 858.5L600 854.9L612 851.3L624 847.8L636 844.3L648 840.9L660 837.5L672 834.3L684 831.2L696 828.1L708 825.3L720 822.5L732 819.9L744 817.5L756 815.3L768 813.2L780 811.3L792 809.6L804 808.0L816 806.6L828 805.3L840 804.2L852 803.1L864 802.2L876 801.4L888 800.6L900 799.9L912 799.3L924 798.7L936 798.1L948 797.6L960 797.1L972 796.6L984 796.2L996 795.8M60 1039.8L72 1036.0L84 1032.1L96 1028.3L108 1024.4L120 1020.6L132 1016.7L144 1012.9L156 1009.0L168 1005.2L180 1001.3L192 997.4L204 993.6L216 989.7L228 985.9L240 982.0L252 978.2L264 974.3L276 970.5L288 966.6L300 962.8L312 958.9L324 955.1L336 951.2L348 947.4L360 943.5L372 939.7L384 935.8L396 932.0L408 928.1L420 924.3L432 920.4L444 916.6L456 912.8L468 908.9L480 905.1L492 901.3L504 897.5L516 893.7L528 889.9L540 886.1L552 882.3L564 878.6L576 874.9L588 871.2L600 867.6L612 864.0L624 860.4L636 856.9L648 853.5L660 850.1L672 846.9L684 843.7L696 840.7L708 837.8L720 835.1L732 832.5L744 830.1L756 827.8L768 825.7L780 823.8L792 822.1L804 820.5L816 819.1L828 817.8L840 816.7L852 815.7L864 814.7L876 813.9L888 813.1L900 812.4L912 811.8L924 811.2L936 810.6L948 810.1L960 809.6L972 809.1L984 808.7L996 808.3M60 1053.1L72 1049.2L84 1045.3L96 1041.5L108 1037.6L120 1033.7L132 1029.9L144 1026.0L156 1022.1L168 1018.3L180 1014.4L192 1010.5L204 1006.7L216 1002.8L228 998.9L240 995.1L252 991.2L264 987.3L276 983.5L288 979.6L300 975.7L312 971.9L324 968.0L336 964.1L348 960.3L360 956.4L372 952.6L384 948.7L396 944.8L408 941.0L420 937.1L432 933.3L444 929.4L456 925.6L468 921.7L480 917.9L492 914.1L504 910.2L516 906.4L528 902.6L540 898.8L552 895.1L564 891.3L576 887.6L588 883.9L600 880.2L612 876.6L624 873.1L636 869.5L648 866.1L660 862.8L672 859.5L684 856.3L696 853.3L708 850.4L720 847.7L732 845.1L744 842.6L756 840.4L768 838.3L780 836.4L792 834.6L804 833.1L816 831.6L828 830.4L840 829.2L852 828.2L864 827.2L876 826.4L888 825.6L900 824.9L912 824.3L924 823.7L936 823.1L948 822.6L960 822.1L972 821.6L984 821.2L996 820.8M60 1066.3L72 1062.4L84 1058.5L96 1054.7L108 1050.8L120 1046.9L132 1043.0L144 1039.1L156 1035.3L168 1031.4L180 1027.5L192 1023.6L204 1019.7L216 1015.9L228 1012.0L240 1008.1L252 1004.2L264 1000.4L276 996.5L288 992.6L300 988.7L312 984.8L324 981.0L336 977.1L348 973.2L360 969.3L372 965.5L384 961.6L396 957.7L408 953.8L420 950.0L432 946.1L444 942.2L456 938.4L468 934.5L480 930.7L492 926.8L504 923.0L516 919.2L528 915.4L540 911.6L552 907.8L564 904.0L576 900.3L588 896.6L600 892.9L612 889.3L624 885.7L636 882.2L648 878.7L660 875.4L672 872.1L684 868.9L696 865.9L708 863.0L720 860.2L732 857.6L744 855.2L756 852.9L768 850.8L780 848.9L792 847.2L804 845.6L816 844.2L828 842.9L840 841.7L852 840.7L864 839.7L876 838.9L888 838.1L900 837.4L912 836.8L924 836.2L936 835.6L948 835.1L960 834.6L972 834.1L984 833.7L996 833.3M60 1079.5L72 1075.6L84 1071.7L96 1067.8L108 1064.0L120 1060.1L132 1056.2L144 1052.3L156 1048.4L168 1044.5L180 1040.6L192 1036.7L204 1032.8L216 1028.9L228 1025.0L240 1021.1L252 1017.3L264 1013.4L276 1009.5L288 1005.6L300 1001.7L312 997.8L324 993.9L336 990.0L348 986.1L360 982.3L372 978.4L384 974.5L396 970.6L408 966.7L420 962.8L432 959.0L444 955.1L456 951.2L468 947.3L480 943.5L492 939.6L504 935.8L516 931.9L528 928.1L540 924.3L552 920.5L564 916.7L576 913.0L588 909.3L600 905.6L612 901.9L624 898.3L636 894.8L648 891.4L660 888.0L672 884.7L684 881.5L696 878.5L708 875.6L720 872.8L732 870.2L744 867.7L756 865.5L768 863.4L780 861.4L792 859.7L804 858.1L816 856.7L828 855.4L840 854.2L852 853.2L864 852.3L876 851.4L888 850.6L900 849.9L912 849.3L924 848.7L936 848.1L948 847.6L960 847.1L972 846.6L984 846.2L996 845.8M60 1092.8L72 1088.8L84 1084.9L96 1081.0L108 1077.1L120 1073.2L132 1069.3L144 1065.4L156 1061.5L168 1057.6L180 1053.7L192 1049.8L204 1045.9L216 1042.0L228 1038.1L240 1034.2L252 1030.3L264 1026.4L276 1022.5L288 1018.6L300 1014.7L312 1010.8L324 1006.9L336 1003.0L348 999.1L360 995.2L372 991.3L384 987.4L396 983.5L408 979.6L420 975.7L432 971.8L444 967.9L456 964.0L468 960.1L480 956.3L492 952.4L504 948.5L516 944.7L528 940.9L540 937.0L552 933.2L564 929.4L576 925.7L588 921.9L600 918.2L612 914.6L624 911.0L636 907.5L648 904.0L660 900.6L672 897.3L684 894.1L696 891.1L708 888.1L720 885.4L732 882.7L744 880.3L756 878.0L768 875.9L780 874.0L792 872.2L804 870.6L816 869.2L828 867.9L840 866.7L852 865.7L864 864.8L876 863.9L888 863.1L900 862.4L912 861.8L924 861.2L936 860.6L948 860.1L960 859.6L972 859.2L984 858.7L996 858.3M60 1106.0L72 1102.1L84 1098.1L96 1094.2L108 1090.3L120 1086.4L132 1082.5L144 1078.6L156 1074.6L168 1070.7L180 1066.8L192 1062.9L204 1059.0L216 1055.1L228 1051.1L240 1047.2L252 1043.3L264 1039.4L276 1035.5L288 1031.6L300 1027.7L312 1023.7L324 1019.8L336 1015.9L348 1012.0L360 1008.1L372 1004.2L384 1000.3L396 996.4L408 992.4L420 988.5L432 984.6L444 980.7L456 976.8L468 972.9L480 969.1L492 965.2L504 961.3L516 957.4L528 953.6L540 949.8L552 945.9L564 942.1L576 938.4L588 934.6L600 930.9L612 927.3L624 923.6L636 920.1L648 916.6L660 913.2L672 909.9L684 906.7L696 903.6L708 900.7L720 897.9L732 895.3L744 892.8L756 890.5L768 888.4L780 886.5L792 884.7L804 883.2L816 881.7L828 880.4L840 879.3L852 878.2L864 877.3L876 876.4L888 875.7L900 874.9L912 874.3L924 873.7L936 873.1L948 872.6L960 872.1L972 871.7L984 871.2L996 870.8M60 1119.2L72 1115.3L84 1111.3L96 1107.4L108 1103.5L120 1099.6L132 1095.6L144 1091.7L156 1087.8L168 1083.8L180 1079.9L192 1076.0L204 1072.1L216 1068.1L228 1064.2L240 1060.3L252 1056.3L264 1052.4L276 1048.5L288 1044.6L300 1040.6L312 1036.7L324 1032.8L336 1028.8L348 1024.9L360 1021.0L372 1017.1L384 1013.2L396 1009.2L408 1005.3L420 1001.4L432 997.5L444 993.6L456 989.7L468 985.7L480 981.9L492 978.0L504 974.1L516 970.2L528 966.3L540 962.5L552 958.7L564 954.8L576 951.1L588 947.3L600 943.6L612 939.9L624 936.3L636 932.7L648 929.2L660 925.8L672 922.5L684 919.3L696 916.2L708 913.3L720 910.5L732 907.9L744 905.4L756 903.1L768 901.0L780 899.0L792 897.3L804 895.7L816 894.2L828 892.9L840 891.8L852 890.7L864 889.8L876 888.9L888 888.2L900 887.5L912 886.8L924 886.2L936 885.6L948 885.1L960 884.6L972 884.2L984 883.7L996 883.3M60 1132.4L72 1128.5L84 1124.6L96 1120.6L108 1116.7L120 1112.7L132 1108.8L144 1104.8L156 1100.9L168 1097.0L180 1093.0L192 1089.1L204 1085.1L216 1081.2L228 1077.3L240 1073.3L252 1069.4L264 1065.4L276 1061.5L288 1057.5L300 1053.6L312 1049.7L324 1045.7L336 1041.8L348 1037.9L360 1033.9L372 1030.0L384 1026.0L396 1022.1L408 1018.2L420 1014.2L432 1010.3L444 1006.4L456 1002.5L468 998.6L480 994.6L492 990.7L504 986.8L516 983.0L528 979.1L540 975.2L552 971.4L564 967.6L576 963.8L588 960.0L600 956.3L612 952.6L624 948.9L636 945.4L648 941.9L660 938.4L672 935.1L684 931.9L696 928.8L708 925.9L720 923.1L732 920.4L744 917.9L756 915.6L768 913.5L780 911.6L792 909.8L804 908.2L816 906.8L828 905.5L840 904.3L852 903.2L864 902.3L876 901.4L888 900.7L900 900.0L912 899.3L924 898.7L936 898.1L948 897.6L960 897.1L972 896.7L984 896.2L996 895.8M60 1145.7L72 1141.7L84 1137.8L96 1133.8L108 1129.8L120 1125.9L132 1121.9L144 1118.0L156 1114.0L168 1110.1L180 1106.1L192 1102.2L204 1098.2L216 1094.3L228 1090.3L240 1086.4L252 1082.4L264 1078.4L276 1074.5L288 1070.5L300 1066.6L312 1062.6L324 1058.7L336 1054.7L348 1050.8L360 1046.8L372 1042.9L384 1038.9L396 1035.0L408 1031.0L420 1027.1L432 1023.2L444 1019.2L456 1015.3L468 1011.4L480 1007.4L492 1003.5L504 999.6L516 995.7L528 991.8L540 987.9L552 984.1L564 980.3L576 976.4L588 972.7L600 968.9L612 965.2L624 961.6L636 958.0L648 954.5L660 951.1L672 947.7L684 944.5L696 941.4L708 938.4L720 935.6L732 933.0L744 930.5L756 928.2L768 926.1L780 924.1L792 922.3L804 920.7L816 919.3L828 918.0L840 916.8L852 915.8L864 914.8L876 913.9L888 913.2L900 912.5L912 911.8L924 911.2L936 910.7L948 910.1L960 909.6L972 909.2L984 908.7L996 908.3M60 1158.9L72 1154.9L84 1151.0L96 1147.0L108 1143.0L120 1139.1L132 1135.1L144 1131.1L156 1127.2L168 1123.2L180 1119.2L192 1115.3L204 1111.3L216 1107.3L228 1103.4L240 1099.4L252 1095.4L264 1091.5L276 1087.5L288 1083.5L300 1079.6L312 1075.6L324 1071.6L336 1067.7L348 1063.7L360 1059.7L372 1055.8L384 1051.8L396 1047.9L408 1043.9L420 1040.0L432 1036.0L444 1032.0L456 1028.1L468 1024.2L480 1020.2L492 1016.3L504 1012.4L516 1008.5L528 1004.6L540 1000.7L552 996.8L564 993.0L576 989.1L588 985.4L600 981.6L612 977.9L624 974.2L636 970.6L648 967.1L660 963.7L672 960.3L684 957.1L696 954.0L708 951.0L720 948.2L732 945.5L744 943.0L756 940.7L768 938.6L780 936.6L792 934.9L804 933.3L816 931.8L828 930.5L840 929.3L852 928.3L864 927.3L876 926.5L888 925.7L900 925.0L912 924.3L924 923.7L936 923.2L948 922.6L960 922.1L972 921.7L984 921.2L996 920.8" stroke="#d8d8d8" stroke-width="0.6" fill="none"/>
<path d="M-782.0 430L-302.0 680M-748.0 430L-268.0 680M-714.0 430L-234.0 680M-680.0 430L-200.0 680M-646.0 430L-166.0 680M-612.0 430L-132.0 680M-578.0 430L-98.0 680M-544.0 430L-64.0 680M-510.0 430L-30.0 680M-476.0 430L4.0 680M-442.0 430L38.0 680M-408.0 430L72.0 680M-374.0 430L106.0 680M-340.0 430L140.0 680M-306.0 430L174.0 680M-272.0 430L208.0 680M-238.0 430L242.0 680M-204.0 430L276.0 680M-170.0 430L310.0 680M-136.0 430L344.0 680M-102.0 430L378.0 680M-68.0 430L412.0 680M-34.0 430L446.0 680M0.0 430L480.0 680M34.0 430L514.0 680M68.0 430L548.0 680M102.0 430L582.0 680M136.0 430L616.0 680M170.0 430L650.0 680M204.0 430L684.0 680M238.0 430L718.0 680M272.0 430L752.0 680M306.0 430L786.0 680M340.0 430L820.0 680M374.0 430L854.0 680M408.0 430L888.0 680M442.0 430L922.0 680M476.0 430L956.0 680M510.0 430L990.0 680M544.0 430L1024.0 680M578.0 430L1058.0 680M612.0 430L1092.0 680M646.0 430L1126.0 680M680.0 430L1160.0 680M714.0 430L1194.0 680M748.0 430L1228.0 680M782.0 430L1262.0 680M816.0 430L1296.0 680M850.0 430L1330.0 680M884.0 430L1364.0 680M918.0 430L1398.0 680M952.0 430L1432.0 680M986.0 430L1466.0 680M1020.0 430L1500.0 680M1054.0 430L1534.0 680M1088.0 430L1568.0 680M1122.0 430L1602.0 680M1156.0 430L1636.0 680M1190.0 430L1670.0 680M1224.0 430L1704.0 680M1258.0 430L1738.0 680M1292.0 430L1772.0 680M1326.0 430L1806.0 680M1360.0 430L1840.0 680M1394.0 430L1874.0 680" stroke="#e2e2e2" stroke-width="0.6"/>
</g>
<path d="M676.4 351.7L857.8 345.0L994.0 347.0" fill="none" stroke="#444" stroke-width="0.9" />
<path d="M676.4 351.7L676.4 356.0" fill="none" stroke="#666" stroke-width="0.8" />
<path d="M585.0 357.0L848.0 358.8L848.0 362.0L585.0 361.0" fill="none" stroke="#444" stroke-width="0.9" />
<path d="M645 362L645 383M682 362L682 383M720 362L720 383M760 362L760 381M800 362L800 381M834 362L834 381M840.4 363L840.4 425" stroke="#bbb" stroke-width="0.6"/>
<path d="M600.0 368.0L840.0 368.0" fill="none" stroke="#ccc" stroke-width="0.6" />
<path d="M600.0 375.0L840.0 375.0" fill="none" stroke="#d4d4d4" stroke-width="0.6" />
<path d="M843 362L895 362M843 374L895 374M843 384.5L895 384.5M843 395L895 395M843 405.5L895 405.5M843 415.5L895 415.5M843 349L843 425M860 349L860 425M877 349L877 425" stroke="#999" stroke-width="0.7"/>
<path d="M895.0 355.0L994.0 354.0L994.0 423.0L895.0 423.0Z" fill="#fff" stroke="#666" stroke-width="0.8" />
<path d="M895.0 358.0L994.0 357.0" fill="none" stroke="#999" stroke-width="0.6" />
<path d="M905 356L905 423M946 356L946 423M952 356L952 423" stroke="#aaa" stroke-width="0.6"/>
<path d="M910.0 359.0L910.0 423.0M912.9 359.0L912.9 423.0M915.8 359.0L915.8 423.0M918.6 359.0L918.6 423.0M921.5 359.0L921.5 423.0M924.4 359.0L924.4 423.0M927.3 359.0L927.3 423.0M930.2 359.0L930.2 423.0M933.1 359.0L933.1 423.0M935.9 359.0L935.9 423.0M938.8 359.0L938.8 423.0M941.7 359.0L941.7 423.0M910.0 359.0L941.7 359.0M910.0 361.9L941.7 361.9M910.0 364.8L941.7 364.8M910.0 367.7L941.7 367.7M910.0 370.6L941.7 370.6M910.0 373.5L941.7 373.5M910.0 376.5L941.7 376.5M910.0 379.4L941.7 379.4M910.0 382.3L941.7 382.3M910.0 385.2L941.7 385.2M910.0 388.1L941.7 388.1M910.0 391.0L941.7 391.0M910.0 393.9L941.7 393.9M910.0 396.8L941.7 396.8M910.0 399.7L941.7 399.7M910.0 402.6L941.7 402.6M910.0 405.5L941.7 405.5M910.0 408.5L941.7 408.5M910.0 411.4L941.7 411.4M910.0 414.3L941.7 414.3M910.0 417.2L941.7 417.2M910.0 420.1L941.7 420.1M910.0 423.0L941.7 423.0" stroke="#333" stroke-width="0.75" fill="none"/>
<path d="M910.0 359.0L941.7 359.0L941.7 423.0L910.0 423.0Z" fill="none" stroke="#222" stroke-width="1" />
<path d="M941.7 409.0L941.7 423.0M944.8 409.0L944.8 423.0M947.9 409.0L947.9 423.0M950.9 409.0L950.9 423.0M954.0 409.0L954.0 423.0M957.1 409.0L957.1 423.0M960.2 409.0L960.2 423.0M963.2 409.0L963.2 423.0M966.3 409.0L966.3 423.0M969.4 409.0L969.4 423.0M972.5 409.0L972.5 423.0M975.5 409.0L975.5 423.0M978.6 409.0L978.6 423.0M981.7 409.0L981.7 423.0M984.8 409.0L984.8 423.0M987.8 409.0L987.8 423.0M990.9 409.0L990.9 423.0M994.0 409.0L994.0 423.0M941.7 409.0L994.0 409.0M941.7 412.5L994.0 412.5M941.7 416.0L994.0 416.0M941.7 419.5L994.0 419.5M941.7 423.0L994.0 423.0" stroke="#333" stroke-width="0.7" fill="none"/>
<path d="M957.0 369.0L957.0 379.0M959.8 369.0L959.8 379.0M962.7 369.0L962.7 379.0M965.5 369.0L965.5 379.0M968.4 369.0L968.4 379.0M971.2 369.0L971.2 379.0M974.1 369.0L974.1 379.0M976.9 369.0L976.9 379.0M979.8 369.0L979.8 379.0M982.6 369.0L982.6 379.0M985.5 369.0L985.5 379.0M988.3 369.0L988.3 379.0M991.2 369.0L991.2 379.0M994.0 369.0L994.0 379.0M957.0 369.0L994.0 369.0M957.0 372.3L994.0 372.3M957.0 375.7L994.0 375.7M957.0 379.0L994.0 379.0" stroke="#333" stroke-width="0.7" fill="none"/>
<path d="M957.0 389.4L957.0 399.7M959.8 389.4L959.8 399.7M962.7 389.4L962.7 399.7M965.5 389.4L965.5 399.7M968.4 389.4L968.4 399.7M971.2 389.4L971.2 399.7M974.1 389.4L974.1 399.7M976.9 389.4L976.9 399.7M979.8 389.4L979.8 399.7M982.6 389.4L982.6 399.7M985.5 389.4L985.5 399.7M988.3 389.4L988.3 399.7M991.2 389.4L991.2 399.7M994.0 389.4L994.0 399.7M957.0 389.4L994.0 389.4M957.0 392.8L994.0 392.8M957.0 396.3L994.0 396.3M957.0 399.7L994.0 399.7" stroke="#333" stroke-width="0.7" fill="none"/>
<path d="M838 423L994 420.5L994 437C950 436 880 433 841 431Z" fill="#efefef" stroke="none"/>
<path d="M840 425.5L994 424.5M840 428.0L994 428.5M840 430.5L994 432.5" stroke="#bbb" stroke-width="0.5"/>
<path d="M838.0 423.0L994.0 420.5" fill="none" stroke="#555" stroke-width="0.8" />
<path d="M841 431C880 433 950 436 994 437" stroke="#777" stroke-width="0.8"/>
<path d="M838 423C837 426 838 429 841 431" stroke="#555" stroke-width="0.8"/>
<path d="M742.8 381.7L826 381.7L826 440L835 423L838 431C800 440 770 450 746.7 461C744 440 743 400 742.8 381.7Z" fill="#fff"/>
<path d="M742.8 383.0L826.0 381.7L826.0 440.0" fill="none" stroke="#444" stroke-width="0.9" />
<path d="M742.8 384C743 400 744 440 746.7 460" stroke="#444" stroke-width="0.9"/>
<path d="M746.7 461C770 450 800 440 838 431" stroke="#777" stroke-width="0.8"/>
<path d="M762.0 389.5L762.0 405.0M769.0 389.5L769.0 405.0M776.0 389.5L776.0 405.0M783.0 389.5L783.0 405.0M790.0 389.5L790.0 405.0M797.0 389.5L797.0 405.0M804.0 389.5L804.0 405.0M811.0 389.5L811.0 405.0M818.0 389.5L818.0 405.0M825.0 389.5L825.0 405.0M762.0 389.5L825.0 389.5M762.0 397.2L825.0 397.2M762.0 405.0L825.0 405.0" stroke="#333" stroke-width="0.85" fill="none"/>
<path d="M762.0 410.0L762.0 426.0M769.0 410.0L769.0 426.0M776.0 410.0L776.0 426.0M783.0 410.0L783.0 426.0M790.0 410.0L790.0 426.0M797.0 410.0L797.0 426.0M804.0 410.0L804.0 426.0M811.0 410.0L811.0 426.0M818.0 410.0L818.0 426.0M825.0 410.0L825.0 426.0M762.0 410.0L825.0 410.0M762.0 418.0L825.0 418.0M762.0 426.0L825.0 426.0" stroke="#333" stroke-width="0.85" fill="none"/>
<path d="M780.5 427.0L780.5 440.0M787.9 427.0L787.9 440.0M795.3 427.0L795.3 440.0M802.8 427.0L802.8 440.0M810.2 427.0L810.2 440.0M817.6 427.0L817.6 440.0M825.0 427.0L825.0 440.0M780.5 427.0L825.0 427.0M780.5 433.5L825.0 433.5M780.5 440.0L825.0 440.0" stroke="#333" stroke-width="0.85" fill="none"/>
<path d="M754.5 409C775 405 810 404 835 403.8" stroke="#444" stroke-width="2.4"/><path d="M754.5 409C775 405 810 404 835 403.8" stroke="#fff" stroke-width="1"/>
<path d="M749 437C752 430 775 424 835 423.3" stroke="#444" stroke-width="2.4"/><path d="M749 437C752 430 775 424 835 423.3" stroke="#fff" stroke-width="1"/>
<path d="M747 383L747 455M750 383L750 455M753 383L753 455M756 383L756 455M759 383L759 455M762 383L762 455M765 383L765 455M768 383L768 455M771 383L771 455M774 383L774 455M777 383L777 455M780 383L780 455M783 383L783 455M786 383L786 455M789 383L789 455M792 383L792 455M795 383L795 455M798 383L798 455M801 383L801 455M804 383L804 455M807 383L807 455M810 383L810 455M813 383L813 455M816 383L816 455M819 383L819 455M822 383L822 455M825 383L825 455" stroke="#dadada" stroke-width="0.5"/>
<path d="M681.6 383L742.8 383L746.7 461L684 478L681.6 470Z" fill="#fff"/>
<path d="M681.6 383.0L742.8 383.0" fill="none" stroke="#555" stroke-width="0.9" />
<path d="M681.6 384L681.6 470M702 384L702 470M726 384L726 470M738 384L738 470M742.8 384L742.8 470" stroke="#888" stroke-width="0.7"/>
<path d="M684 386L684 468M687 386L687 468M690 386L690 468M693 386L693 468M696 386L696 468M699 386L699 468M702 386L702 468M705 386L705 468M708 386L708 468M711 386L711 468M714 386L714 468M717 386L717 468M720 386L720 468M723 386L723 468M726 386L726 468M729 386L729 468M732 386L732 468M735 386L735 468M738 386L738 468M741 386L741 468M682 388L742 388M682 392L742 392M682 396L742 396M682 400L742 400M682 404L742 404M682 408L742 408M682 412L742 412M682 416L742 416M682 420L742 420M682 424L742 424M682 428L742 428M682 432L742 432M682 436L742 436M682 440L742 440M682 444L742 444M682 448L742 448M682 452L742 452M682 456L742 456M682 460L742 460M682 464L742 464" stroke="#e0e0e0" stroke-width="0.5"/>
<path d="M706.3 396.0L706.3 443.0M710.8 396.0L710.8 443.0M715.4 396.0L715.4 443.0M720.0 396.0L720.0 443.0M724.5 396.0L724.5 443.0M706.3 396.0L724.5 396.0M706.3 400.7L724.5 400.7M706.3 405.4L724.5 405.4M706.3 410.1L724.5 410.1M706.3 414.8L724.5 414.8M706.3 419.5L724.5 419.5M706.3 424.2L724.5 424.2M706.3 428.9L724.5 428.9M706.3 433.6L724.5 433.6M706.3 438.3L724.5 438.3M706.3 443.0L724.5 443.0" stroke="#222" stroke-width="0.85" fill="none"/>
<path d="M706.3 448.0L706.3 465.0M710.9 448.0L710.9 465.0M715.5 448.0L715.5 465.0M706.3 448.0L715.5 448.0M706.3 452.2L715.5 452.2M706.3 456.5L715.5 456.5M706.3 460.8L715.5 460.8M706.3 465.0L715.5 465.0" stroke="#222" stroke-width="0.85" fill="none"/>
<path d="M682.0 446.0L742.0 439.0" fill="none" stroke="#666" stroke-width="0.9" />
<path d="M682.0 449.0L742.0 442.0" fill="none" stroke="#999" stroke-width="0.7" />
<path d="M684.0 470.0L742.0 462.0" fill="none" stroke="#888" stroke-width="0.7" />
<path d="M262 135L262 390M300 135L300 390M318 135L318 390" stroke="#e4e4e4" stroke-width="0.6"/>
<path d="M252 140L336 145M252 150L336 155M252 345L336 350M252 360L336 365M252 380L336 385" stroke="#e6e6e6" stroke-width="0.6"/>
<path d="M292 166L336 170M292 176L336 180M292 190L336 194M292 203L336 206M292 166L292 203M305 168L305 204" stroke="#d0d0d0" stroke-width="0.6" stroke-dasharray="1.5 1"/>
<path d="M259.3 184.5L259.3 341.6M264.2 184.5L264.2 341.6M278.3 184.5L278.3 341.6M282.3 184.5L282.3 341.6M292.4 184.5L292.4 341.6M298.4 184.5L298.4 341.6M258 184.5L299 184.5M258 190L299 190M258 341.6L299 341.6" stroke="#777" stroke-width="1" stroke-dasharray="1.2 0.9"/>
<path d="M254 218.7L299 219.7M254 221.7L299 222.7M256 226.7L299 226.7" stroke="#888" stroke-width="1" stroke-dasharray="2 1"/>
<path d="M254 257L299 258M254 260L299 261M256 265L299 265" stroke="#888" stroke-width="1" stroke-dasharray="2 1"/>
<path d="M254 293L299 294M254 296L299 297M256 301L299 301" stroke="#888" stroke-width="1" stroke-dasharray="2 1"/>
<path d="M252.5 86.0L252.5 470.0" fill="none" stroke="#777" stroke-width="0.9" />
<path d="M244.0 126.0L252.0 120.0" fill="none" stroke="#444" stroke-width="1" />
<path d="M252.0 120.1L256.0 120.8L260.0 121.6L264.0 122.5L268.0 123.3L272.0 124.1L276.0 125.0L280.0 125.9L284.0 126.8L288.0 127.7L292.0 128.6L296.0 129.5L300.0 130.5L304.0 131.4L308.0 132.4L312.0 133.3L316.0 134.3L320.0 135.3L324.0 136.2L328.0 137.2L332.0 138.2L336.0 139.2L340.0 140.2L344.0 141.2L348.0 142.2L352.0 143.2L356.0 144.2L360.0 145.3L364.0 146.3L368.0 147.3L372.0 148.4L376.0 149.4L380.0 150.5L384.0 151.5L388.0 152.6L392.0 153.7L396.0 154.7L400.0 155.8L404.0 156.9L408.0 158.1L412.0 159.2L416.0 160.3L420.0 161.5L424.0 162.7L428.0 163.9L432.0 165.1L436.0 166.3L440.0 167.6L444.0 168.9L448.0 170.2L452.0 171.5L456.0 172.9L460.0 174.2L464.0 175.7L468.0 177.1L472.0 178.6L476.0 180.1L480.0 181.7L484.0 183.3L488.0 184.9L492.0 186.6L496.0 188.4L500.0 190.2L504.0 192.0L508.0 193.9L512.0 195.9L516.0 197.9L520.0 200.0L524.0 202.1L528.0 204.4L532.0 206.6L536.0 209.0L540.0 211.4L544.0 214.0L548.0 216.6L552.0 219.3L556.0 222.0L560.0 224.9L564.0 227.9L568.0 230.9L572.0 234.1L576.0 237.4L577.0 238.2L582.0 240.0L587.0 250.7L590.5 256.0L592.0 261.0" fill="none" stroke="#333" stroke-width="1.1" />
<path d="M252.0 126.1L256.0 126.8L260.0 127.6L264.0 128.5L268.0 129.3L272.0 130.1L276.0 131.0L280.0 131.9L284.0 132.8L288.0 133.7L292.0 134.6L296.0 135.5L300.0 136.5L304.0 137.4L308.0 138.4L312.0 139.3L316.0 140.3L320.0 141.3L324.0 142.2L328.0 143.2L332.0 144.2L336.0 145.2L340.0 146.2L344.0 147.2L348.0 148.2L352.0 149.2L356.0 150.2L360.0 151.3L364.0 152.3L368.0 153.3L372.0 154.4L376.0 155.4L380.0 156.5L384.0 157.5L388.0 158.6L392.0 159.7L396.0 160.7L400.0 161.8L404.0 162.9L408.0 164.1L412.0 165.2L416.0 166.3L420.0 167.5L424.0 168.7L428.0 169.9L432.0 171.1L436.0 172.3L440.0 173.6L444.0 174.9L448.0 176.2L452.0 177.5L456.0 178.9L460.0 180.2L464.0 181.7L468.0 183.1L472.0 184.6L476.0 186.1L480.0 187.7L484.0 189.3L488.0 190.9L492.0 192.6L496.0 194.4L500.0 196.2L504.0 198.0L508.0 199.9L512.0 201.9L516.0 203.9L520.0 206.0L524.0 208.1L528.0 210.4L532.0 212.6L536.0 215.0L540.0 217.4L544.0 220.0L548.0 222.6L552.0 225.3L556.0 228.0L560.0 230.9" fill="none" stroke="#aaa" stroke-width="0.7" />
<path d="M252.0 132.1L256.0 132.8L260.0 133.6L264.0 134.5L268.0 135.3L272.0 136.1L276.0 137.0L280.0 137.9L284.0 138.8L288.0 139.7L292.0 140.6L296.0 141.5L300.0 142.5L304.0 143.4L308.0 144.4L312.0 145.3L316.0 146.3L320.0 147.3L324.0 148.2L328.0 149.2L332.0 150.2L336.0 151.2L340.0 152.2L344.0 153.2L348.0 154.2L352.0 155.2L356.0 156.2L360.0 157.3L364.0 158.3L368.0 159.3L372.0 160.4L376.0 161.4L380.0 162.5L384.0 163.5L388.0 164.6L392.0 165.7L396.0 166.7L400.0 167.8L404.0 168.9L408.0 170.1L412.0 171.2L416.0 172.3L420.0 173.5L424.0 174.7L428.0 175.9L432.0 177.1L436.0 178.3L440.0 179.6L444.0 180.9L448.0 182.2L452.0 183.5L456.0 184.9L460.0 186.2L464.0 187.7L468.0 189.1L472.0 190.6L476.0 192.1L480.0 193.7L484.0 195.3L488.0 196.9L492.0 198.6L496.0 200.4L500.0 202.2L504.0 204.0L508.0 205.9L512.0 207.9L516.0 209.9L520.0 212.0L524.0 214.1L528.0 216.4L532.0 218.6L536.0 221.0L540.0 223.4L544.0 226.0L548.0 228.6L550.0 229.9" fill="none" stroke="#c4c4c4" stroke-width="0.6" />
<path d="M341.8 166.2L345.8 167.2L349.8 168.3L353.8 169.3L357.8 170.3L361.8 171.2L365.8 172.2L369.8 173.1L373.8 174.1L377.8 175.0L381.8 175.9L385.8 176.9L389.8 177.8L393.8 178.7L397.8 179.6L401.8 180.5L405.8 181.4L409.8 182.3L413.8 183.2L417.8 184.1L421.8 185.0L425.8 186.0L429.8 186.9L433.8 187.9L437.8 188.8L441.8 189.8L445.8 190.8L449.8 191.8L453.8 192.8L457.8 193.9L461.8 194.9L465.8 196.0L469.8 197.1L473.8 198.2L477.8 199.4L481.8 200.6L485.8 201.8L489.8 203.0L493.8 204.3L497.8 205.6L501.8 206.9L505.8 208.3L509.8 209.7L513.8 211.1L517.8 212.6L521.8 214.2L525.8 215.7L529.8 217.3L533.8 219.0L537.8 220.7L541.8 222.5L545.8 224.3L549.8 226.1L553.8 228.0L557.8 230.0L561.8 232.0L565.8 234.1L569.8 236.2L573.8 238.4L577.8 240.6L581.8 242.9L585.8 245.3L587.0 246.0L592.5 258.3" fill="none" stroke="#444" stroke-width="0.9" />
<path d="M336.2 167.0L341.8 166.2" fill="none" stroke="#444" stroke-width="0.9" />
<path d="M356 143L356 168M389 152L389 176M417 163L417 185M442 171L442 191M465 178L465 197M492 190L492 203" stroke="#bbb" stroke-width="0.6"/>
<path d="M336.0 167.0L336.0 352.0" fill="none" stroke="#333" stroke-width="1" />
<path d="M337.5 170.0L337.5 350.0" fill="none" stroke="#ccc" stroke-width="0.6" />
<path d="M338 200L405 205M338 240L405 245M338 280L405 285M338 320L405 325" stroke="#e0e0e0" stroke-width="0.6"/>
<path d="M412.5 187.5L412.5 340.6M422.6 190.0L422.6 341.1M432.9 192.6L432.9 341.6M442.6 195.0L442.6 342.1M452.3 197.3L452.3 342.5M461.1 199.5L461.1 343.0M469.8 201.7L469.8 343.4M477.8 203.9L477.8 343.8M485.8 206.2L485.8 344.2M493.5 208.3L493.5 344.6M500.7 210.4L500.7 344.9M507 212.1L507 345.2M513.7 214.0L513.7 345.6M519.7 215.7L519.7 345.9M525.5 217.9L525.5 346.2M531.2 220.1L531.2 346.4M536.3 222.0L536.3 346.7M541.3 223.9L541.3 346.9M546.3 225.8L546.3 347.3M550.8 227.5L550.8 347.8M555.3 229.3L555.3 348.2M559.5 230.9L559.5 348.6M563.3 232.9L563.3 349.0M567 235.7L567 349.4M570.7 238.6L570.7 349.7M573.7 240.9L573.7 350.0M576.7 243.2L576.7 350.3M579.5 245.3L579.5 350.6M582 247.2L582 350.8M584.3 249.0L584.3 351.0M586.7 250.8L586.7 351.3M588.7 254.0L588.7 351.5M590.5 256.0L590.5 351.6" stroke="#2a2a2a" stroke-width="1.0"/>
<path d="M417.6 188.8L417.6 340.8M427.8 191.3L427.8 341.3M437.8 193.8L437.8 341.8M447.5 196.1L447.5 342.3M456.7 198.4L456.7 342.8M465.5 200.6L465.5 343.2M473.8 202.8L473.8 343.6M481.8 205.0L481.8 344.0M489.6 207.2L489.6 344.4M497.1 209.3L497.1 344.8M503.9 211.2L503.9 345.1M510.4 213.1L510.4 345.4M516.7 214.9L516.7 345.7M522.6 216.8L522.6 346.0M528.4 219.0L528.4 346.3M533.8 221.0L533.8 346.6M538.8 223.0L538.8 346.8M543.8 224.9L543.8 347.1M548.5 226.7L548.5 347.6M553.0 228.4L553.0 348.0M557.4 230.1L557.4 348.4M561.4 231.6L561.4 348.8M565.1 234.3L565.1 349.2M568.9 237.2L568.9 349.5M572.2 239.7L572.2 349.9M575.2 242.0L575.2 350.2M578.1 244.2L578.1 350.4M580.8 246.3L580.8 350.7M583.1 248.1L583.1 350.9M585.5 249.9L585.5 351.2M587.7 252.4L587.7 351.4M589.6 255.4L589.6 351.6" stroke="#cccccc" stroke-width="0.5"/>
<path d="M405.0 185.6L409.0 187.0L413.0 188.4L417.0 189.7L421.0 190.9L425.0 192.0L429.0 193.1L433.0 194.1L437.0 195.1L441.0 196.1L445.0 197.0L449.0 197.9L453.0 198.7L457.0 199.6L461.0 200.4L465.0 201.2L469.0 202.0L473.0 202.9L477.0 203.7L481.0 204.5L485.0 205.4L489.0 206.3L493.0 207.2L497.0 208.2L501.0 209.2L505.0 210.2L509.0 211.3L513.0 212.4L517.0 213.6L521.0 214.9L525.0 216.3L529.0 217.7L533.0 219.2L537.0 220.8L541.0 222.5L545.0 224.3L549.0 226.2L553.0 228.2L557.0 230.3L561.0 232.6L565.0 234.9L569.0 237.5L573.0 240.1L577.0 242.9L581.0 245.8L585.0 248.9L587.0 250.5L590.0 256.0" fill="none" stroke="#222" stroke-width="1.1" />
<path d="M405.0 340.2C417.8 340.8 458.7 342.9 481.7 344.0C504.7 345.1 524.8 345.7 542.8 347.0C560.8 348.3 582.1 350.8 590.0 351.6" fill="none" stroke="#222" stroke-width="1.1" />
<path d="M405.0 336.3C417.8 336.9 458.7 338.9 481.7 340.0C504.7 341.1 524.8 341.7 542.8 343.0C560.8 344.3 582.1 347.2 590.0 348.0" fill="none" stroke="#444" stroke-width="0.8" />
<path d="M412.0 222.0C414.5 222.4 421.9 223.7 426.8 224.5C431.8 225.3 436.7 226.2 441.7 227.0C446.6 227.9 451.6 228.7 456.5 229.6C461.4 230.5 466.4 231.4 471.3 232.3C476.3 233.3 481.2 234.3 486.2 235.3C491.1 236.4 496.1 237.5 501.0 238.7C505.9 239.9 510.9 241.2 515.8 242.6C520.8 244.0 525.7 245.6 530.7 247.2C535.6 248.9 540.6 250.7 545.5 252.7C550.4 254.8 555.4 256.9 560.3 259.4C565.3 261.8 570.2 264.4 575.2 267.4C580.1 270.3 587.5 275.4 590.0 277.0" fill="none" stroke="#444" stroke-width="0.9" />
<path d="M404.0 224.6C406.6 225.0 414.4 226.4 419.7 227.2C424.9 228.1 430.1 229.0 435.3 229.9C440.6 230.8 445.8 231.7 451.0 232.6C456.2 233.5 461.4 234.5 466.7 235.5C471.9 236.4 477.1 237.5 482.3 238.6C487.6 239.7 492.8 240.8 498.0 242.1C503.2 243.3 508.4 244.6 513.7 246.1C518.9 247.6 524.1 249.2 529.3 250.9C534.6 252.7 539.8 254.6 545.0 256.7C550.2 258.9 555.4 261.2 560.7 263.8C565.9 266.4 571.1 269.2 576.3 272.4C581.6 275.6 589.4 281.1 592.0 282.9" fill="none" stroke="#a8a8a8" stroke-width="2.2" />
<path d="M404.0 224.6C406.6 225.0 414.4 226.4 419.7 227.2C424.9 228.1 430.1 229.0 435.3 229.9C440.6 230.8 445.8 231.7 451.0 232.6C456.2 233.5 461.4 234.5 466.7 235.5C471.9 236.4 477.1 237.5 482.3 238.6C487.6 239.7 492.8 240.8 498.0 242.1C503.2 243.3 508.4 244.6 513.7 246.1C518.9 247.6 524.1 249.2 529.3 250.9C534.6 252.7 539.8 254.6 545.0 256.7C550.2 258.9 555.4 261.2 560.7 263.8C565.9 266.4 571.1 269.2 576.3 272.4C581.6 275.6 589.4 281.1 592.0 282.9" fill="none" stroke="#666" stroke-width="0.5" />
<path d="M412.0 234.6C414.5 235.0 421.9 236.1 426.8 236.9C431.8 237.7 436.7 238.5 441.7 239.3C446.6 240.1 451.6 240.9 456.5 241.8C461.4 242.6 466.4 243.5 471.3 244.4C476.3 245.3 481.2 246.3 486.2 247.3C491.1 248.3 496.1 249.3 501.0 250.5C505.9 251.6 510.9 252.9 515.8 254.2C520.8 255.6 525.7 257.0 530.7 258.6C535.6 260.2 540.6 261.9 545.5 263.9C550.4 265.8 555.4 267.9 560.3 270.2C565.3 272.5 570.2 275.0 575.2 277.8C580.1 280.6 587.5 285.5 590.0 287.0" fill="none" stroke="#444" stroke-width="0.9" />
<path d="M412.0 259.6C414.5 259.9 421.9 260.8 426.8 261.5C431.8 262.1 436.7 262.7 441.7 263.4C446.6 264.0 451.6 264.6 456.5 265.3C461.4 266.0 466.4 266.6 471.3 267.4C476.3 268.1 481.2 268.8 486.2 269.6C491.1 270.4 496.1 271.3 501.0 272.2C505.9 273.1 510.9 274.0 515.8 275.1C520.8 276.2 525.7 277.3 530.7 278.6C535.6 279.9 540.6 281.2 545.5 282.7C550.4 284.3 555.4 285.9 560.3 287.7C565.3 289.6 570.2 291.5 575.2 293.7C580.1 296.0 587.5 299.8 590.0 301.0" fill="none" stroke="#444" stroke-width="0.9" />
<path d="M404.0 264.4C406.6 264.7 414.4 265.7 419.7 266.3C424.9 267.0 430.1 267.6 435.3 268.3C440.6 268.9 445.8 269.6 451.0 270.2C456.2 270.9 461.4 271.6 466.7 272.3C471.9 273.0 477.1 273.8 482.3 274.6C487.6 275.4 492.8 276.2 498.0 277.1C503.2 278.0 508.4 279.0 513.7 280.1C518.9 281.2 524.1 282.3 529.3 283.6C534.6 284.9 539.8 286.3 545.0 287.8C550.2 289.4 555.4 291.1 560.7 293.0C565.9 294.9 571.1 296.9 576.3 299.2C581.6 301.5 589.4 305.6 592.0 306.9" fill="none" stroke="#a8a8a8" stroke-width="2.2" />
<path d="M404.0 264.4C406.6 264.7 414.4 265.7 419.7 266.3C424.9 267.0 430.1 267.6 435.3 268.3C440.6 268.9 445.8 269.6 451.0 270.2C456.2 270.9 461.4 271.6 466.7 272.3C471.9 273.0 477.1 273.8 482.3 274.6C487.6 275.4 492.8 276.2 498.0 277.1C503.2 278.0 508.4 279.0 513.7 280.1C518.9 281.2 524.1 282.3 529.3 283.6C534.6 284.9 539.8 286.3 545.0 287.8C550.2 289.4 555.4 291.1 560.7 293.0C565.9 294.9 571.1 296.9 576.3 299.2C581.6 301.5 589.4 305.6 592.0 306.9" fill="none" stroke="#666" stroke-width="0.5" />
<path d="M412.0 273.1C414.5 273.4 421.9 274.3 426.8 274.8C431.8 275.4 436.7 276.0 441.7 276.6C446.6 277.1 451.6 277.7 456.5 278.3C461.4 278.9 466.4 279.6 471.3 280.2C476.3 280.9 481.2 281.6 486.2 282.3C491.1 283.0 496.1 283.8 501.0 284.6C505.9 285.5 510.9 286.3 515.8 287.3C520.8 288.3 525.7 289.3 530.7 290.5C535.6 291.6 540.6 292.9 545.5 294.3C550.4 295.7 555.4 297.2 560.3 298.8C565.3 300.5 570.2 302.3 575.2 304.4C580.1 306.4 587.5 309.9 590.0 311.0" fill="none" stroke="#444" stroke-width="0.9" />
<path d="M412.0 298.1C414.5 298.3 421.9 298.9 426.8 299.3C431.8 299.7 436.7 300.1 441.7 300.5C446.6 300.9 451.6 301.3 456.5 301.7C461.4 302.1 466.4 302.5 471.3 303.0C476.3 303.4 481.2 303.9 486.2 304.4C491.1 304.9 496.1 305.4 501.0 306.0C505.9 306.6 510.9 307.2 515.8 307.8C520.8 308.5 525.7 309.2 530.7 310.0C535.6 310.8 540.6 311.6 545.5 312.6C550.4 313.5 555.4 314.6 560.3 315.7C565.3 316.8 570.2 318.1 575.2 319.5C580.1 320.8 587.5 323.2 590.0 324.0" fill="none" stroke="#444" stroke-width="0.9" />
<path d="M404.0 303.3C406.6 303.5 414.4 304.1 419.7 304.5C424.9 304.9 430.1 305.3 435.3 305.7C440.6 306.1 445.8 306.5 451.0 306.9C456.2 307.3 461.4 307.7 466.7 308.2C471.9 308.6 477.1 309.1 482.3 309.5C487.6 310.0 492.8 310.5 498.0 311.1C503.2 311.7 508.4 312.3 513.7 312.9C518.9 313.6 524.1 314.3 529.3 315.1C534.6 315.9 539.8 316.7 545.0 317.7C550.2 318.6 555.4 319.7 560.7 320.8C565.9 322.0 571.1 323.2 576.3 324.7C581.6 326.1 589.4 328.6 592.0 329.3" fill="none" stroke="#a8a8a8" stroke-width="2.2" />
<path d="M404.0 303.3C406.6 303.5 414.4 304.1 419.7 304.5C424.9 304.9 430.1 305.3 435.3 305.7C440.6 306.1 445.8 306.5 451.0 306.9C456.2 307.3 461.4 307.7 466.7 308.2C471.9 308.6 477.1 309.1 482.3 309.5C487.6 310.0 492.8 310.5 498.0 311.1C503.2 311.7 508.4 312.3 513.7 312.9C518.9 313.6 524.1 314.3 529.3 315.1C534.6 315.9 539.8 316.7 545.0 317.7C550.2 318.6 555.4 319.7 560.7 320.8C565.9 322.0 571.1 323.2 576.3 324.7C581.6 326.1 589.4 328.6 592.0 329.3" fill="none" stroke="#666" stroke-width="0.5" />
<path d="M412.0 310.6C414.5 310.8 421.9 311.3 426.8 311.6C431.8 312.0 436.7 312.3 441.7 312.7C446.6 313.0 451.6 313.4 456.5 313.7C461.4 314.1 466.4 314.4 471.3 314.8C476.3 315.2 481.2 315.6 486.2 316.1C491.1 316.5 496.1 316.9 501.0 317.4C505.9 317.9 510.9 318.4 515.8 319.0C520.8 319.6 525.7 320.2 530.7 320.9C535.6 321.6 540.6 322.3 545.5 323.1C550.4 324.0 555.4 324.8 560.3 325.8C565.3 326.8 570.2 327.9 575.2 329.1C580.1 330.3 587.5 332.3 590.0 333.0" fill="none" stroke="#444" stroke-width="0.9" />
<path d="M412.0 191.7C414.5 192.2 421.9 193.7 426.8 194.7C431.8 195.8 436.7 196.8 441.7 197.8C446.6 198.9 451.6 200.0 456.5 201.1C461.4 202.2 466.4 203.3 471.3 204.5C476.3 205.7 481.2 206.9 486.2 208.2C491.1 209.5 496.1 210.9 501.0 212.4C505.9 213.9 510.9 215.5 515.8 217.3C520.8 219.0 525.7 220.9 530.7 223.0C535.6 225.1 540.6 227.3 545.5 229.8C550.4 232.4 555.4 235.0 560.3 238.1C565.3 241.1 570.2 244.4 575.2 248.0C580.1 251.7 587.5 258.0 590.0 260.0" fill="none" stroke="#bbb" stroke-width="0.6" />
<path d="M336.0 350.0L592.0 358.0" fill="none" stroke="#333" stroke-width="1" />
<path d="M336.0 355.0L592.0 362.0" fill="none" stroke="#bbb" stroke-width="0.7" />
<path d="M590 256C594 262 595 300 594 358" stroke="#333" stroke-width="1.4"/>
<path d="M414 359L414 389.5M421 359L421 389.5M446 359L446 389.5M453 359L453 389.5M473 359L473 389.5M479.5 359L479.5 389.5M497 359L497 389.5M503 359L503 389.5M516 359L516 389.5M522 359L522 389.5M533 359L533 389.5M538 359L538 389.5M546 359L546 389.5M551 359L551 389.5M556 359L556 389.5M561 359L561 389.5M567 359L567 389.5M572 359L572 389.5M576 359L576 389.5M582 359L582 389.5" stroke="#555" stroke-width="0.9"/>
<path d="M430 362L430 389M460 362L460 389M488 362L488 389M509 362L509 389M527 362L527 389" stroke="#c8c8c8" stroke-width="0.6" stroke-dasharray="1.5 1"/>
<path d="M244.5 86.0L244.5 474.0" stroke="#333" stroke-width="1" />
<path d="M341.5 108.0L341.5 376.0" stroke="#333" stroke-width="1" />
<path d="M334.0 371.5L344.0 371.5" stroke="#333" stroke-width="0.9" />
<path d="M339.0 366.0L339.0 377.0" stroke="#333" stroke-width="0.9" />
<path d="M361.5 389.7L682.0 383.0L682.0 470.0L612.0 491.0L553.0 510.0L538.0 522.0L501.0 531.0L454.0 531.0L454.0 470.0L361.5 465.0Z" fill="#fff" stroke="none" stroke-width="0" />
<path d="M361.5 465.0L361.5 389.7L682.0 383.0" fill="none" stroke="#444" stroke-width="0.9" />
<path d="M361.5 410.5L501 412.8M361.5 421L501 424.5M361.5 441.5L501 446" stroke="#b8b8b8" stroke-width="0.7"/>
<path d="M483.4 392.0L483.4 531.0" fill="none" stroke="#aaa" stroke-width="0.7" />
<path d="M492.6 392.0L492.6 531.0" fill="none" stroke="#999" stroke-width="0.7" />
<path d="M501.8 392.0L501.8 531.0" fill="none" stroke="#777" stroke-width="0.8" />
<path d="M453.6 531.0L501.8 531.0" fill="none" stroke="#666" stroke-width="0.8" />
<path d="M453.6 490.8L501.8 493.0" fill="none" stroke="#666" stroke-width="0.9" />
<path d="M453.6 500.8L501.8 501.5" fill="none" stroke="#777" stroke-width="0.8" />
<path d="M453.6 503.0L501.8 503.5" fill="none" stroke="#aaa" stroke-width="0.6" />
<path d="M505 390L505 412M513 390L513 412M521 390L521 412M529 390L529 412M537 390L537 412M545 390L545 412M553 390L553 412M561 390L561 412M569 390L569 412M577 390L577 412M585 390L585 412M593 390L593 412M601 390L601 412M609 390L609 412M617 390L617 412M625 390L625 412M633 390L633 412M641 390L641 412M649 390L649 412M657 390L657 412M665 390L665 412M673 390L673 412M681 390L681 412" stroke="#d0d0d0" stroke-width="0.5"/>
<path d="M503.8 413.3L503.8 489.0M509.8 412.8L509.8 487.8M515.8 412.3L515.8 486.6M521.8 411.8L521.8 485.3M527.8 411.2L527.8 484.1M533.9 410.7L533.9 482.9M539.9 410.2L539.9 481.7M545.9 409.7L545.9 480.4M551.9 409.2L551.9 479.2M557.9 408.6L557.9 478.0M563.9 408.1L563.9 476.8M569.9 407.6L569.9 475.6M575.9 407.1L575.9 474.3M581.9 406.6L581.9 473.1M588.0 406.1L588.0 471.9M594.0 405.6L594.0 470.7M600.0 405.0L600.0 469.4M606.0 404.5L606.0 468.2M612.0 404.0L612.0 467.0M503.8 413.3L612.0 404.0M503.8 424.1L612.0 413.0M503.8 434.9L612.0 422.0M503.8 445.7L612.0 431.0M503.8 456.6L612.0 440.0M503.8 467.4L612.0 449.0M503.8 478.2L612.0 458.0M503.8 489.0L612.0 467.0" stroke="#222" stroke-width="1.0" fill="none"/>
<path d="M503.8 493.0L503.8 522.0M509.5 492.2L509.5 521.0M515.1 491.3L515.1 520.0M520.8 490.5L520.8 519.0M526.5 489.7L526.5 518.0M532.1 488.8L532.1 517.0M537.8 488.0L537.8 516.0M503.8 493.0L537.8 488.0M503.8 502.7L537.8 497.3M503.8 512.3L537.8 506.7M503.8 522.0L537.8 516.0" stroke="#222" stroke-width="1.0" fill="none"/>
<path d="M537.8 442.0L553.3 440.0L553.3 513.0L537.8 517.0Z" fill="#fff" stroke="#666" stroke-width="0.8" />
<path d="M541 442L541 515M544 442L544 515M547 442L547 515M550 442L550 515" stroke="#bbb" stroke-width="0.5" stroke-dasharray="1 1"/>
<path d="M614.0 409.0L614.0 427.0M620.0 408.2L620.0 426.2M626.0 407.4L626.0 425.4M632.0 406.7L632.0 424.7M638.0 405.9L638.0 423.9M644.0 405.1L644.0 423.1M650.0 404.3L650.0 422.3M656.0 403.6L656.0 421.6M662.0 402.8L662.0 420.8M668.0 402.0L668.0 420.0M614.0 409.0L668.0 402.0M614.0 427.0L668.0 420.0" stroke="#555" stroke-width="0.8" fill="none"/>
<path d="M553.3 440.0L686.7 419.0L686.7 449.0L553.3 479.0Z" fill="#fff" stroke="none" stroke-width="0" />
<path d="M553.3 440.0L686.7 419.0" fill="none" stroke="#444" stroke-width="1.2" />
<path d="M553.3 444.4L553.3 479.0M559.1 443.4L559.1 477.7M564.9 442.5L564.9 476.4M570.7 441.5L570.7 475.1M576.5 440.5L576.5 473.8M582.3 439.5L582.3 472.5M588.1 438.6L588.1 471.2M593.9 437.6L593.9 469.9M599.7 436.6L599.7 468.6M605.5 435.6L605.5 467.3M611.3 434.7L611.3 466.0M617.1 433.7L617.1 464.7M622.9 432.7L622.9 463.3M628.7 431.7L628.7 462.0M634.5 430.8L634.5 460.7M640.3 429.8L640.3 459.4M646.1 428.8L646.1 458.1M651.9 427.8L651.9 456.8M657.7 426.9L657.7 455.5M663.5 425.9L663.5 454.2M669.3 424.9L669.3 452.9M675.1 423.9L675.1 451.6M680.9 423.0L680.9 450.3M686.7 422.0L686.7 449.0M553.3 444.4L686.7 422.0M553.3 453.0L686.7 428.8M553.3 461.7L686.7 435.5M553.3 470.4L686.7 442.2M553.3 479.0L686.7 449.0" stroke="#222" stroke-width="1.0" fill="none"/>
<path d="M553.3 482.0L686.7 452.0" fill="none" stroke="#666" stroke-width="0.8" />
<path d="M553.3 484.0L553.3 509.0M559.2 482.7L559.2 507.2M565.0 481.4L565.0 505.4M570.9 480.1L570.9 503.6M576.8 478.8L576.8 501.8M582.6 477.5L582.6 500.0M588.5 476.2L588.5 498.2M594.4 474.9L594.4 496.4M600.3 473.6L600.3 494.6M606.1 472.3L606.1 492.8M612.0 471.0L612.0 491.0M553.3 484.0L612.0 471.0M553.3 492.3L612.0 477.7M553.3 500.7L612.0 484.3M553.3 509.0L612.0 491.0" stroke="#222" stroke-width="1.0" fill="none"/>
<path d="M614.0 464.0L614.0 484.0M621.5 462.5L621.5 482.2M629.0 461.0L629.0 480.5M636.5 459.5L636.5 478.8M644.0 458.0L644.0 477.0M651.5 456.5L651.5 475.2M659.0 455.0L659.0 473.5M666.5 453.5L666.5 471.8M674.0 452.0L674.0 470.0M614.0 464.0L674.0 452.0M614.0 474.0L674.0 461.0M614.0 484.0L674.0 470.0" stroke="#999" stroke-width="0.7" fill="none"/>
<path d="M612.0 491.0L682.0 470.0" fill="none" stroke="#777" stroke-width="0.8" />
<path d="M682.0 383.0L682.0 470.0" fill="none" stroke="#999" stroke-width="0.7" />
<path d="M223.0 475.0L361.7 460.3L453.2 470.7L305.6 494.3Z" fill="#fff" stroke="#444" stroke-width="0.9" />
<path d="M223.0 478.0L305.6 494.3L305.6 580.0L223.0 556.0Z" fill="#dadada" stroke="none" stroke-width="0" />
<path d="M223.0 479.0L305.6 495.5" stroke="#a2a2a2" stroke-width="1.0" stroke-dasharray="5 3" stroke-dashoffset="0.0"/>
<path d="M223.0 481.3L305.6 498.1" stroke="#a2a2a2" stroke-width="1.0" stroke-dasharray="5 3" stroke-dashoffset="3.1"/>
<path d="M223.0 483.7L305.6 500.6" stroke="#a2a2a2" stroke-width="1.0" stroke-dasharray="5 3" stroke-dashoffset="6.2"/>
<path d="M223.0 486.0L305.6 503.2" stroke="#a2a2a2" stroke-width="1.0" stroke-dasharray="5 3" stroke-dashoffset="1.3"/>
<path d="M223.0 488.3L305.6 505.7" stroke="#a2a2a2" stroke-width="1.0" stroke-dasharray="5 3" stroke-dashoffset="4.4"/>
<path d="M223.0 490.7L305.6 508.3" stroke="#a2a2a2" stroke-width="1.0" stroke-dasharray="5 3" stroke-dashoffset="7.5"/>
<path d="M223.0 493.0L305.6 510.9" stroke="#a2a2a2" stroke-width="1.0" stroke-dasharray="5 3" stroke-dashoffset="2.6"/>
<path d="M223.0 495.3L305.6 513.4" stroke="#a2a2a2" stroke-width="1.0" stroke-dasharray="5 3" stroke-dashoffset="5.7"/>
<path d="M223.0 497.7L305.6 516.0" stroke="#a2a2a2" stroke-width="1.0" stroke-dasharray="5 3" stroke-dashoffset="0.8"/>
<path d="M223.0 500.0L305.6 518.5" stroke="#a2a2a2" stroke-width="1.0" stroke-dasharray="5 3" stroke-dashoffset="3.9"/>
<path d="M223.0 502.3L305.6 521.1" stroke="#a2a2a2" stroke-width="1.0" stroke-dasharray="5 3" stroke-dashoffset="7.0"/>
<path d="M223.0 504.7L305.6 523.7" stroke="#a2a2a2" stroke-width="1.0" stroke-dasharray="5 3" stroke-dashoffset="2.1"/>
<path d="M223.0 507.0L305.6 526.2" stroke="#a2a2a2" stroke-width="1.0" stroke-dasharray="5 3" stroke-dashoffset="5.2"/>
<path d="M223.0 509.3L305.6 528.8" stroke="#a2a2a2" stroke-width="1.0" stroke-dasharray="5 3" stroke-dashoffset="0.3"/>
<path d="M223.0 511.7L305.6 531.3" stroke="#a2a2a2" stroke-width="1.0" stroke-dasharray="5 3" stroke-dashoffset="3.4"/>
<path d="M223.0 514.0L305.6 533.9" stroke="#a2a2a2" stroke-width="1.0" stroke-dasharray="5 3" stroke-dashoffset="6.5"/>
<path d="M223.0 516.3L305.6 536.5" stroke="#a2a2a2" stroke-width="1.0" stroke-dasharray="5 3" stroke-dashoffset="1.6"/>
<path d="M223.0 518.7L305.6 539.0" stroke="#a2a2a2" stroke-width="1.0" stroke-dasharray="5 3" stroke-dashoffset="4.7"/>
<path d="M223.0 521.0L305.6 541.6" stroke="#a2a2a2" stroke-width="1.0" stroke-dasharray="5 3" stroke-dashoffset="7.8"/>
<path d="M223.0 523.3L305.6 544.2" stroke="#a2a2a2" stroke-width="1.0" stroke-dasharray="5 3" stroke-dashoffset="2.9"/>
<path d="M223.0 525.7L305.6 546.7" stroke="#a2a2a2" stroke-width="1.0" stroke-dasharray="5 3" stroke-dashoffset="6.0"/>
<path d="M223.0 528.0L305.6 549.3" stroke="#a2a2a2" stroke-width="1.0" stroke-dasharray="5 3" stroke-dashoffset="1.1"/>
<path d="M223.0 530.3L305.6 551.8" stroke="#a2a2a2" stroke-width="1.0" stroke-dasharray="5 3" stroke-dashoffset="4.2"/>
<path d="M223.0 532.7L305.6 554.4" stroke="#a2a2a2" stroke-width="1.0" stroke-dasharray="5 3" stroke-dashoffset="7.3"/>
<path d="M223.0 535.0L305.6 557.0" stroke="#a2a2a2" stroke-width="1.0" stroke-dasharray="5 3" stroke-dashoffset="2.4"/>
<path d="M223.0 537.3L305.6 559.5" stroke="#a2a2a2" stroke-width="1.0" stroke-dasharray="5 3" stroke-dashoffset="5.5"/>
<path d="M223.0 539.7L305.6 562.1" stroke="#a2a2a2" stroke-width="1.0" stroke-dasharray="5 3" stroke-dashoffset="0.6"/>
<path d="M223.0 542.0L305.6 564.6" stroke="#a2a2a2" stroke-width="1.0" stroke-dasharray="5 3" stroke-dashoffset="3.7"/>
<path d="M223.0 544.3L305.6 567.2" stroke="#a2a2a2" stroke-width="1.0" stroke-dasharray="5 3" stroke-dashoffset="6.8"/>
<path d="M223.0 546.7L305.6 569.8" stroke="#a2a2a2" stroke-width="1.0" stroke-dasharray="5 3" stroke-dashoffset="1.9"/>
<path d="M223.0 549.0L305.6 572.3" stroke="#a2a2a2" stroke-width="1.0" stroke-dasharray="5 3" stroke-dashoffset="5.0"/>
<path d="M223.0 551.3L305.6 574.9" stroke="#a2a2a2" stroke-width="1.0" stroke-dasharray="5 3" stroke-dashoffset="0.1"/>
<path d="M223.0 553.7L305.6 577.4" stroke="#a2a2a2" stroke-width="1.0" stroke-dasharray="5 3" stroke-dashoffset="3.2"/>
<path d="M223.0 556.0L305.6 580.0" stroke="#a2a2a2" stroke-width="1.0" stroke-dasharray="5 3" stroke-dashoffset="6.3"/>
<path d="M305.6 494.3L453.0 473.6L453.0 546.0L305.6 580.0Z" fill="#dadada" stroke="none" stroke-width="0" />
<path d="M306.5 495.5L453.0 475.0" stroke="#a2a2a2" stroke-width="1.0" stroke-dasharray="5 3" stroke-dashoffset="0.0"/>
<path d="M306.5 498.1L453.0 477.2" stroke="#a2a2a2" stroke-width="1.0" stroke-dasharray="5 3" stroke-dashoffset="3.1"/>
<path d="M306.5 500.6L453.0 479.3" stroke="#a2a2a2" stroke-width="1.0" stroke-dasharray="5 3" stroke-dashoffset="6.2"/>
<path d="M306.5 503.2L453.0 481.5" stroke="#a2a2a2" stroke-width="1.0" stroke-dasharray="5 3" stroke-dashoffset="1.3"/>
<path d="M306.5 505.7L453.0 483.6" stroke="#a2a2a2" stroke-width="1.0" stroke-dasharray="5 3" stroke-dashoffset="4.4"/>
<path d="M306.5 508.3L453.0 485.8" stroke="#a2a2a2" stroke-width="1.0" stroke-dasharray="5 3" stroke-dashoffset="7.5"/>
<path d="M306.5 510.9L453.0 487.9" stroke="#a2a2a2" stroke-width="1.0" stroke-dasharray="5 3" stroke-dashoffset="2.6"/>
<path d="M306.5 513.4L453.0 490.1" stroke="#a2a2a2" stroke-width="1.0" stroke-dasharray="5 3" stroke-dashoffset="5.7"/>
<path d="M306.5 516.0L453.0 492.2" stroke="#a2a2a2" stroke-width="1.0" stroke-dasharray="5 3" stroke-dashoffset="0.8"/>
<path d="M306.5 518.5L453.0 494.4" stroke="#a2a2a2" stroke-width="1.0" stroke-dasharray="5 3" stroke-dashoffset="3.9"/>
<path d="M306.5 521.1L453.0 496.5" stroke="#a2a2a2" stroke-width="1.0" stroke-dasharray="5 3" stroke-dashoffset="7.0"/>
<path d="M306.5 523.7L453.0 498.7" stroke="#a2a2a2" stroke-width="1.0" stroke-dasharray="5 3" stroke-dashoffset="2.1"/>
<path d="M306.5 526.2L453.0 500.8" stroke="#a2a2a2" stroke-width="1.0" stroke-dasharray="5 3" stroke-dashoffset="5.2"/>
<path d="M306.5 528.8L453.0 503.0" stroke="#a2a2a2" stroke-width="1.0" stroke-dasharray="5 3" stroke-dashoffset="0.3"/>
<path d="M306.5 531.3L453.0 505.1" stroke="#a2a2a2" stroke-width="1.0" stroke-dasharray="5 3" stroke-dashoffset="3.4"/>
<path d="M306.5 533.9L453.0 507.3" stroke="#a2a2a2" stroke-width="1.0" stroke-dasharray="5 3" stroke-dashoffset="6.5"/>
<path d="M306.5 536.5L453.0 509.4" stroke="#a2a2a2" stroke-width="1.0" stroke-dasharray="5 3" stroke-dashoffset="1.6"/>
<path d="M306.5 539.0L453.0 511.6" stroke="#a2a2a2" stroke-width="1.0" stroke-dasharray="5 3" stroke-dashoffset="4.7"/>
<path d="M306.5 541.6L453.0 513.7" stroke="#a2a2a2" stroke-width="1.0" stroke-dasharray="5 3" stroke-dashoffset="7.8"/>
<path d="M306.5 544.2L453.0 515.9" stroke="#a2a2a2" stroke-width="1.0" stroke-dasharray="5 3" stroke-dashoffset="2.9"/>
<path d="M306.5 546.7L453.0 518.0" stroke="#a2a2a2" stroke-width="1.0" stroke-dasharray="5 3" stroke-dashoffset="6.0"/>
<path d="M306.5 549.3L453.0 520.2" stroke="#a2a2a2" stroke-width="1.0" stroke-dasharray="5 3" stroke-dashoffset="1.1"/>
<path d="M306.5 551.8L453.0 522.3" stroke="#a2a2a2" stroke-width="1.0" stroke-dasharray="5 3" stroke-dashoffset="4.2"/>
<path d="M306.5 554.4L453.0 524.5" stroke="#a2a2a2" stroke-width="1.0" stroke-dasharray="5 3" stroke-dashoffset="7.3"/>
<path d="M306.5 557.0L453.0 526.6" stroke="#a2a2a2" stroke-width="1.0" stroke-dasharray="5 3" stroke-dashoffset="2.4"/>
<path d="M306.5 559.5L453.0 528.8" stroke="#a2a2a2" stroke-width="1.0" stroke-dasharray="5 3" stroke-dashoffset="5.5"/>
<path d="M306.5 562.1L453.0 530.9" stroke="#a2a2a2" stroke-width="1.0" stroke-dasharray="5 3" stroke-dashoffset="0.6"/>
<path d="M306.5 564.6L453.0 533.1" stroke="#a2a2a2" stroke-width="1.0" stroke-dasharray="5 3" stroke-dashoffset="3.7"/>
<path d="M306.5 567.2L453.0 535.2" stroke="#a2a2a2" stroke-width="1.0" stroke-dasharray="5 3" stroke-dashoffset="6.8"/>
<path d="M306.5 569.8L453.0 537.4" stroke="#a2a2a2" stroke-width="1.0" stroke-dasharray="5 3" stroke-dashoffset="1.9"/>
<path d="M306.5 572.3L453.0 539.5" stroke="#a2a2a2" stroke-width="1.0" stroke-dasharray="5 3" stroke-dashoffset="5.0"/>
<path d="M306.5 574.9L453.0 541.7" stroke="#a2a2a2" stroke-width="1.0" stroke-dasharray="5 3" stroke-dashoffset="0.1"/>
<path d="M306.5 577.4L453.0 543.8" stroke="#a2a2a2" stroke-width="1.0" stroke-dasharray="5 3" stroke-dashoffset="3.2"/>
<path d="M306.5 580.0L453.0 546.0" stroke="#a2a2a2" stroke-width="1.0" stroke-dasharray="5 3" stroke-dashoffset="6.3"/>
<path d="M223.0 478.0L305.6 494.3L453.0 473.6" fill="none" stroke="#333" stroke-width="0.9" />
<path d="M223.0 478.0L223.0 556.0L305.6 580.0L453.0 546.0L453.0 473.6" fill="none" stroke="#444" stroke-width="0.9" />
<path d="M305.6 494.3L305.6 580.0" stroke="#fff" stroke-width="1.6" />
<path d="M344.0 540.0L356.4 537.5L356.4 567.0L344.0 570.0Z" fill="#fff" stroke="#777" stroke-width="0.6" />
<rect x="357.5" y="535" width="4" height="4" fill="#fff" stroke="#666" stroke-width="0.6"/>
<path d="M388 497v10h-3" stroke="#fff" stroke-width="2"/><path d="M388 497v10h-3" stroke="#555" stroke-width="0.6"/>
<path d="M278.5 469C278.5 463.5 283 463.5 283 468L283 482" stroke="#444" stroke-width="3"/>
<path d="M278.5 469C278.5 463.5 283 463.5 283 468L283 482" stroke="#fff" stroke-width="1.5"/>
<path d="M300.5 465C300.5 459.5 305 459.5 305 464L305 485" stroke="#444" stroke-width="3"/>
<path d="M300.5 465C300.5 459.5 305 459.5 305 464L305 485" stroke="#fff" stroke-width="1.5"/>
<path d="M307.5 471C307.5 465.5 312 465.5 312 470L312 486" stroke="#444" stroke-width="3"/>
<path d="M307.5 471C307.5 465.5 312 465.5 312 470L312 486" stroke="#fff" stroke-width="1.5"/>
<path d="M68.0 492.3L169.2 482.6L239.0 502.8L68.0 525.5Z" fill="#fff" stroke="#444" stroke-width="0.9" />
<path d="M68.0 525.5L239.0 502.8L240.7 598.8L68.0 639.0Z" fill="#dadada" stroke="none" stroke-width="0" />
<path d="M68.0 527.0L239.5 504.0" stroke="#a2a2a2" stroke-width="1.0" stroke-dasharray="5 3" stroke-dashoffset="0.0"/>
<path d="M68.0 529.5L239.5 506.2" stroke="#a2a2a2" stroke-width="1.0" stroke-dasharray="5 3" stroke-dashoffset="3.1"/>
<path d="M68.0 532.1L239.6 508.3" stroke="#a2a2a2" stroke-width="1.0" stroke-dasharray="5 3" stroke-dashoffset="6.2"/>
<path d="M68.0 534.6L239.6 510.5" stroke="#a2a2a2" stroke-width="1.0" stroke-dasharray="5 3" stroke-dashoffset="1.3"/>
<path d="M68.0 537.2L239.6 512.6" stroke="#a2a2a2" stroke-width="1.0" stroke-dasharray="5 3" stroke-dashoffset="4.4"/>
<path d="M68.0 539.7L239.6 514.8" stroke="#a2a2a2" stroke-width="1.0" stroke-dasharray="5 3" stroke-dashoffset="7.5"/>
<path d="M68.0 542.3L239.7 516.9" stroke="#a2a2a2" stroke-width="1.0" stroke-dasharray="5 3" stroke-dashoffset="2.6"/>
<path d="M68.0 544.8L239.7 519.1" stroke="#a2a2a2" stroke-width="1.0" stroke-dasharray="5 3" stroke-dashoffset="5.7"/>
<path d="M68.0 547.4L239.7 521.2" stroke="#a2a2a2" stroke-width="1.0" stroke-dasharray="5 3" stroke-dashoffset="0.8"/>
<path d="M68.0 549.9L239.7 523.4" stroke="#a2a2a2" stroke-width="1.0" stroke-dasharray="5 3" stroke-dashoffset="3.9"/>
<path d="M68.0 552.5L239.8 525.5" stroke="#a2a2a2" stroke-width="1.0" stroke-dasharray="5 3" stroke-dashoffset="7.0"/>
<path d="M68.0 555.0L239.8 527.7" stroke="#a2a2a2" stroke-width="1.0" stroke-dasharray="5 3" stroke-dashoffset="2.1"/>
<path d="M68.0 557.5L239.8 529.9" stroke="#a2a2a2" stroke-width="1.0" stroke-dasharray="5 3" stroke-dashoffset="5.2"/>
<path d="M68.0 560.1L239.9 532.0" stroke="#a2a2a2" stroke-width="1.0" stroke-dasharray="5 3" stroke-dashoffset="0.3"/>
<path d="M68.0 562.6L239.9 534.2" stroke="#a2a2a2" stroke-width="1.0" stroke-dasharray="5 3" stroke-dashoffset="3.4"/>
<path d="M68.0 565.2L239.9 536.3" stroke="#a2a2a2" stroke-width="1.0" stroke-dasharray="5 3" stroke-dashoffset="6.5"/>
<path d="M68.0 567.7L239.9 538.5" stroke="#a2a2a2" stroke-width="1.0" stroke-dasharray="5 3" stroke-dashoffset="1.6"/>
<path d="M68.0 570.3L240.0 540.6" stroke="#a2a2a2" stroke-width="1.0" stroke-dasharray="5 3" stroke-dashoffset="4.7"/>
<path d="M68.0 572.8L240.0 542.8" stroke="#a2a2a2" stroke-width="1.0" stroke-dasharray="5 3" stroke-dashoffset="7.8"/>
<path d="M68.0 575.4L240.0 544.9" stroke="#a2a2a2" stroke-width="1.0" stroke-dasharray="5 3" stroke-dashoffset="2.9"/>
<path d="M68.0 577.9L240.0 547.1" stroke="#a2a2a2" stroke-width="1.0" stroke-dasharray="5 3" stroke-dashoffset="6.0"/>
<path d="M68.0 580.5L240.1 549.2" stroke="#a2a2a2" stroke-width="1.0" stroke-dasharray="5 3" stroke-dashoffset="1.1"/>
<path d="M68.0 583.0L240.1 551.4" stroke="#a2a2a2" stroke-width="1.0" stroke-dasharray="5 3" stroke-dashoffset="4.2"/>
<path d="M68.0 585.5L240.1 553.6" stroke="#a2a2a2" stroke-width="1.0" stroke-dasharray="5 3" stroke-dashoffset="7.3"/>
<path d="M68.0 588.1L240.2 555.7" stroke="#a2a2a2" stroke-width="1.0" stroke-dasharray="5 3" stroke-dashoffset="2.4"/>
<path d="M68.0 590.6L240.2 557.9" stroke="#a2a2a2" stroke-width="1.0" stroke-dasharray="5 3" stroke-dashoffset="5.5"/>
<path d="M68.0 593.2L240.2 560.0" stroke="#a2a2a2" stroke-width="1.0" stroke-dasharray="5 3" stroke-dashoffset="0.6"/>
<path d="M68.0 595.7L240.2 562.2" stroke="#a2a2a2" stroke-width="1.0" stroke-dasharray="5 3" stroke-dashoffset="3.7"/>
<path d="M68.0 598.3L240.3 564.3" stroke="#a2a2a2" stroke-width="1.0" stroke-dasharray="5 3" stroke-dashoffset="6.8"/>
<path d="M68.0 600.8L240.3 566.5" stroke="#a2a2a2" stroke-width="1.0" stroke-dasharray="5 3" stroke-dashoffset="1.9"/>
<path d="M68.0 603.4L240.3 568.6" stroke="#a2a2a2" stroke-width="1.0" stroke-dasharray="5 3" stroke-dashoffset="5.0"/>
<path d="M68.0 605.9L240.3 570.8" stroke="#a2a2a2" stroke-width="1.0" stroke-dasharray="5 3" stroke-dashoffset="0.1"/>
<path d="M68.0 608.5L240.4 572.9" stroke="#a2a2a2" stroke-width="1.0" stroke-dasharray="5 3" stroke-dashoffset="3.2"/>
<path d="M68.0 611.0L240.4 575.1" stroke="#a2a2a2" stroke-width="1.0" stroke-dasharray="5 3" stroke-dashoffset="6.3"/>
<path d="M68.0 613.5L240.4 577.3" stroke="#a2a2a2" stroke-width="1.0" stroke-dasharray="5 3" stroke-dashoffset="1.4"/>
<path d="M68.0 616.1L240.5 579.4" stroke="#a2a2a2" stroke-width="1.0" stroke-dasharray="5 3" stroke-dashoffset="4.5"/>
<path d="M68.0 618.6L240.5 581.6" stroke="#a2a2a2" stroke-width="1.0" stroke-dasharray="5 3" stroke-dashoffset="7.6"/>
<path d="M68.0 621.2L240.5 583.7" stroke="#a2a2a2" stroke-width="1.0" stroke-dasharray="5 3" stroke-dashoffset="2.7"/>
<path d="M68.0 623.7L240.5 585.9" stroke="#a2a2a2" stroke-width="1.0" stroke-dasharray="5 3" stroke-dashoffset="5.8"/>
<path d="M68.0 626.3L240.6 588.0" stroke="#a2a2a2" stroke-width="1.0" stroke-dasharray="5 3" stroke-dashoffset="0.9"/>
<path d="M68.0 628.8L240.6 590.2" stroke="#a2a2a2" stroke-width="1.0" stroke-dasharray="5 3" stroke-dashoffset="4.0"/>
<path d="M68.0 631.4L240.6 592.3" stroke="#a2a2a2" stroke-width="1.0" stroke-dasharray="5 3" stroke-dashoffset="7.1"/>
<path d="M68.0 633.9L240.6 594.5" stroke="#a2a2a2" stroke-width="1.0" stroke-dasharray="5 3" stroke-dashoffset="2.2"/>
<path d="M68.0 636.5L240.7 596.6" stroke="#a2a2a2" stroke-width="1.0" stroke-dasharray="5 3" stroke-dashoffset="5.3"/>
<path d="M68.0 639.0L240.7 598.8" stroke="#a2a2a2" stroke-width="1.0" stroke-dasharray="5 3" stroke-dashoffset="0.4"/>
<path d="M68.0 525.5L239.0 502.8L240.7 598.8L68.0 639.0" fill="none" stroke="#444" stroke-width="0.9" />
<path d="M68.0 500.0L169.2 490.0" fill="none" stroke="#bbb" stroke-width="0.6" />
<path d="M190 555c0-4 2-6 6-6h14c4 0 6 2 6 6v12h-26z" fill="#fff" stroke="#777" stroke-width="0.7"/>
<path d="M192.0 571.0L209.0 568.0L209.0 606.0L192.0 609.0Z" fill="#fff" stroke="#777" stroke-width="0.6" />
<rect x="212" y="568" width="5" height="4" fill="#fff" stroke="#777" stroke-width="0.6"/>
<path d="M148 525v13h-4" stroke="#fff" stroke-width="2"/><path d="M148 525v13h-4" stroke="#555" stroke-width="0.6"/>
<circle cx="174" cy="577" r="2" fill="#fff" stroke="#555" stroke-width="0.6"/>
<path d="M129.5 489C129.5 483.5 134.5 483.5 134.5 488L134.5 511.5" stroke="#444" stroke-width="3.2"/>
<path d="M129.5 489C129.5 483.5 134.5 483.5 134.5 488L134.5 511.5" stroke="#fff" stroke-width="1.6"/>
<path d="M143 486C143 480.5 148 480.5 148 485L148 509" stroke="#444" stroke-width="3.2"/>
<path d="M143 486C143 480.5 148 480.5 148 485L148 509" stroke="#fff" stroke-width="1.6"/>
<path d="M157 491C157 485.5 162 485.5 162 490L162 508" stroke="#444" stroke-width="3.2"/>
<path d="M157 491C157 485.5 162 485.5 162 490L162 508" stroke="#fff" stroke-width="1.6"/>
<path d="M185 488C185 482.5 190 482.5 190 487L190 502" stroke="#444" stroke-width="3.2"/>
<path d="M185 488C185 482.5 190 482.5 190 487L190 502" stroke="#fff" stroke-width="1.6"/>
<path d="M68 654L530.3 538.7L640 498.3L724 470.6L776.6 463C781 461 783 458 785 456.3C790 451 796 448 802.3 446.7C812 443 822 441.5 831 441L860 439L994 438" stroke="#333" stroke-width="0.9"/>
<path d="M68.0 642.0L240.7 600.0" fill="none" stroke="#aaa" stroke-width="0.6" />
<path d="M453.0 530.0L491.5 532.6" fill="none" stroke="#888" stroke-width="0.7" />
<path d="M503.0 527.4L611.6 491.0" fill="none" stroke="#888" stroke-width="0.7" />
<path d="M640.0 481.0L697.0 468.7L727.0 461.0L747.0 461.0" fill="none" stroke="#888" stroke-width="0.7" />
</g>
<rect x="67.5" y="85.5" width="928" height="574" fill="none" stroke="#151515" stroke-width="1"/>
</svg>
<div class="a" style="left:0;top:0;width:1152px;height:12px;background:linear-gradient(#f5f5f5,#d6d6d6)"></div>
<div class="a" style="left:0;top:12px;width:1152px;height:1px;background:#3c3c3c"></div>
<span class="a mt" style="left:32px;font-weight:bold;">Photoshop</span>
<span class="a mt" style="left:90px;">File</span>
<span class="a mt" style="left:115px;">Edit</span>
<span class="a mt" style="left:141px;">Image</span>
<span class="a mt" style="left:178px;">Layer</span>
<span class="a mt" style="left:210px;">Type</span>
<span class="a mt" style="left:239.5px;">Select</span>
<span class="a mt" style="left:275px;">Filter</span>
<span class="a mt" style="left:306px;">3D</span>
<span class="a mt" style="left:329px;">View</span>
<span class="a mt" style="left:359px;">Window</span>
<span class="a mt" style="left:402px;">Help</span>
<span class="a mt" style="left:984px;">Wed 2:38 PM</span>
<span class="a mt" style="left:1048px;">Peter Maric</span>
<svg class="a" style="left:11px;top:1px" width="11" height="11" viewBox="0 0 11 11"><path d="M7.6 0.6c-0.7 0.1-1.5 0.6-1.8 1.4 0.8 0 1.6-0.6 1.8-1.4zM5.5 2.6c-0.5 0-1.1-0.4-1.8-0.4C2.6 2.2 1.6 3.1 1.6 4.8c0 1.9 1.3 4.6 2.4 4.6 0.6 0 0.9-0.4 1.6-0.4 0.7 0 0.9 0.4 1.6 0.4 0.8 0 1.6-1.4 1.9-2.4-1-0.4-1.5-1.4-1.3-2.4 0.1-0.6 0.5-1.1 1-1.4-0.5-0.7-1.2-1-1.9-1-0.6 0-1.1 0.4-1.4 0.4z" fill="#111"/></svg>
<svg class="a" style="left:805px;top:0" width="345" height="12" viewBox="805 0 345 12">
<rect x="809" y="3" width="8" height="6" rx="1" fill="none" stroke="#222" stroke-width="1.3"/><rect x="811" y="5" width="3" height="2" fill="#222"/><path d="M817 5l4-2v6l-4-2z" fill="#222"/>
<circle cx="830.5" cy="6" r="4" fill="none" stroke="#222" stroke-width="1"/><path d="M829 8V4h2a1 1 0 010 2h-2" fill="none" stroke="#222" stroke-width="1"/>
<path d="M845 9l4-6M846 4h5l-5 5h5" fill="none" stroke="#111" stroke-width="1.5"/>
<path d="M861 9l3-6h2l3 6zM863 9l2-3" fill="#111"/>
<g fill="#3a8ed8"><circle cx="878" cy="3.5" r="2"/><circle cx="883" cy="3.5" r="2"/><circle cx="878" cy="8" r="2"/><circle cx="883" cy="8" r="2"/><circle cx="886" cy="6" r="1.5" fill="#5fb848"/></g>
<ellipse cx="899" cy="6" rx="5" ry="3.2" fill="none" stroke="#999" stroke-width="1.3"/><ellipse cx="899" cy="6" rx="2.5" ry="1.8" fill="none" stroke="#999" stroke-width="1"/>
<circle cx="917.5" cy="6" r="4" fill="none" stroke="#888" stroke-width="1"/><path d="M917.5 3.5v2.5h2" fill="none" stroke="#888" stroke-width="0.9"/>
<path d="M934 3l2.5 2-2.5 2.5V2l2.5 2.5L934 7" fill="none" stroke="#333" stroke-width="0.8"/>
<rect x="948" y="3" width="11" height="7" fill="#c44"/><rect x="948" y="4" width="11" height="1" fill="#eee"/><rect x="948" y="6" width="11" height="1" fill="#eee"/><rect x="948" y="8" width="11" height="1" fill="#eee"/><rect x="948" y="3" width="5" height="4" fill="#335"/>
<path d="M967 4.5h2l3-2.5v8l-3-2.5h-2z" fill="#111"/><path d="M973.5 4a3 3 0 010 4M975 2.8a5 5 0 010 6.4" fill="none" stroke="#111" stroke-width="1"/>
<circle cx="1113" cy="5" r="3" fill="none" stroke="#111" stroke-width="1.4"/><path d="M1115 7l3 3" stroke="#111" stroke-width="1.6"/>
<g fill="#111"><rect x="1127" y="2" width="2" height="2"/><rect x="1127" y="5" width="2" height="2"/><rect x="1127" y="8" width="2" height="2"/><rect x="1130" y="2.5" width="10" height="1.2"/><rect x="1130" y="5.5" width="10" height="1.2"/><rect x="1130" y="8.5" width="10" height="1.2"/></g>
</svg>
<div class="a" style="left:0;top:13px;width:1152px;height:14px;background:linear-gradient(#464646,#393939)"></div>
<div class="a" style="left:0;top:13px;width:2px;height:13px;background:#cfd8e0"></div>
<div class="a" style="left:0;top:26px;width:1152px;height:1px;background:#262626"></div>
<div class="a" style="left:5px;top:16px;width:8px;height:8px;border-radius:50%;background:radial-gradient(circle at 50% 60%,#f2a0a0,#b83030)"></div>
<div class="a" style="left:18px;top:16px;width:8px;height:8px;border-radius:50%;background:radial-gradient(circle at 50% 60%,#f8e2a0,#c89a38)"></div>
<div class="a" style="left:31px;top:16px;width:8px;height:8px;border-radius:50%;background:radial-gradient(circle at 50% 60%,#c8f0b0,#60a848)"></div>
<div class="a" style="left:7.5px;top:18.5px;width:3px;height:3px;border-radius:50%;background:#6a0a0a"></div>
<span class="a" style="left:535px;top:15px;font-size:8.4px;line-height:10px;color:#d2d2d2;white-space:nowrap">Adobe Photoshop CS6</span>
<div class="a" style="left:0;top:27px;width:1152px;height:19px;background:linear-gradient(#4c4c4c,#484848)"></div>
<div class="a" style="left:4px;top:29px;width:1px;height:15px;background:#3a3a3a"></div>
<div class="a" style="left:40px;top:29px;width:1px;height:15px;background:#3a3a3a"></div>
<div class="a" style="left:85px;top:29px;width:1px;height:15px;background:#3a3a3a"></div>
<div class="a" style="left:319px;top:29px;width:1px;height:15px;background:#3a3a3a"></div>
<svg class="a" style="left:14px;top:31px" width="22" height="11"><path d="M1.5 9.5L9.5 1.5" stroke="#c8c8c8" stroke-width="1.1"/><path d="M16 4.5h3l-1.5 1.6z" fill="#ccc"/></svg>
<div class="a dd" style="left:43px;top:32px;width:39px;height:9px"></div>
<span class="a ot" style="left:47px;top:33.8px;font-size:4.9px;line-height:8px;font-weight:bold">Pixels</span>
<svg class="a" style="left:76px;top:33px" width="4" height="7"><path d="M0.5 2.5L2 1.0L3.5 2.5zM0.5 4.5L2 6.0L3.5 4.5z" fill="#ddd"/></svg>
<span class="a ot" style="left:88px;top:32.8px;font-size:5.1px;line-height:9px;font-weight:bold">Mode:</span>
<div class="a dd" style="left:108px;top:32px;width:54px;height:9px"></div>
<span class="a ot" style="left:112px;top:33.8px;font-size:4.9px;line-height:8px;font-weight:bold">Normal</span>
<svg class="a" style="left:156px;top:33px" width="4" height="7"><path d="M0.5 2.5L2 1.0L3.5 2.5zM0.5 4.5L2 6.0L3.5 4.5z" fill="#ddd"/></svg>
<span class="a ot" style="left:166px;top:32.8px;font-size:5.0px;line-height:9px;font-weight:bold">Opacity:</span>
<div class="a" style="left:189px;top:32px;width:20px;height:9px;background:#2c2c2c"></div>
<span class="a ot" style="left:191px;top:32.8px;font-size:5.6px;line-height:9px">100%</span>
<div class="a" style="left:210px;top:32px;width:8px;height:9px;background:#5e5e5e;border-radius:1px"></div>
<svg class="a" style="left:212px;top:35px" width="4" height="3"><path d="M0 0.5h4L2 2.5z" fill="#ddd"/></svg>
<div class="a" style="left:222px;top:32px;width:7px;height:8px;background:#5a5a5a;border:1px solid #3a3a3a"></div>
<svg class="a" style="left:222px;top:30px" width="9" height="10"><path d="M1.5 6l2 2.5L7.5 1" stroke="#e0e0e0" stroke-width="1.1" fill="none"/></svg>
<span class="a ot" style="left:232px;top:32.8px;font-size:5.78px;line-height:9px;font-weight:bold">Anti-alias</span>
<div class="a" style="left:266px;top:33px;width:6px;height:7px;background:#5a5a5a;border:1px solid #505050"></div>
<svg class="a" style="left:282px;top:31px" width="32" height="12"><g fill="#6a6a6a"><rect x="1" y="1" width="2" height="10"/><rect x="3" y="3" width="6" height="2"/><rect x="3" y="7" width="8" height="2"/><path d="M24 2l5 2.5v5l-5 2.5-5-2.5v-5z"/></g></svg>
<svg class="a" style="left:325px;top:31px" width="12" height="13"><circle cx="5.5" cy="5.5" r="3.8" fill="#d0d0d0"/><circle cx="9.70" cy="5.50" r="1.1" fill="#d0d0d0"/><circle cx="8.47" cy="8.47" r="1.1" fill="#d0d0d0"/><circle cx="5.50" cy="9.70" r="1.1" fill="#d0d0d0"/><circle cx="2.53" cy="8.47" r="1.1" fill="#d0d0d0"/><circle cx="1.30" cy="5.50" r="1.1" fill="#d0d0d0"/><circle cx="2.53" cy="2.53" r="1.1" fill="#d0d0d0"/><circle cx="5.50" cy="1.30" r="1.1" fill="#d0d0d0"/><circle cx="8.47" cy="2.53" r="1.1" fill="#d0d0d0"/><circle cx="5.5" cy="5.5" r="1.6" fill="#4a4a4a"/><rect x="9.5" y="11" width="1.5" height="1.2" fill="#ccc"/></svg>
<span class="a ot" style="left:341px;top:32.8px;font-size:5.21px;line-height:9px;font-weight:bold">Weight:</span>
<div class="a" style="left:363px;top:32px;width:31px;height:9px;background:#2c2c2c"></div>
<span class="a ot" style="left:366px;top:32.8px;font-size:6px;line-height:9px">1 px</span>
<div class="a" style="left:397px;top:32px;width:7px;height:8px;background:#505050;border:1px solid #444"></div>
<span class="a" style="left:407px;top:32.8px;font-size:5.8px;line-height:9px;color:#7a7a7a;white-space:nowrap">Align Edges</span>
<div class="a dd" style="left:1068px;top:32px;width:80px;height:9px"></div>
<span class="a ot" style="left:1072px;top:33.8px;font-size:4.9px;line-height:8px;font-weight:bold">Pete's Workspace 2</span>
<svg class="a" style="left:1142px;top:33px" width="4" height="7"><path d="M0.5 2.5L2 1.0L3.5 2.5zM0.5 4.5L2 6.0L3.5 4.5z" fill="#ddd"/></svg>
<div class="a" style="left:0;top:46px;width:1152px;height:12px;background:#2f2f2f"></div>
<div class="a" style="left:0;top:46px;width:1152px;height:1px;background:#2a2a2a"></div>
<div class="a" style="left:0;top:47px;width:164px;height:11px;background:#3b3b3b"></div>
<div class="a" style="left:165px;top:47px;width:152px;height:11px;background:#3b3b3b"></div>
<div class="a" style="left:318px;top:47px;width:172px;height:11px;background:#4d4d4d"></div>
<span class="a tt" style="left:7px;top:47px">×</span><span class="a tt" style="left:14px;top:47px;font-size:6.4px;font-weight:bold">Comp_01.psd @ 41% (Shadows copy, RGB/8*) *</span>
<span class="a tt" style="left:169px;top:47px">×</span><span class="a tt" style="left:178px;top:47px;font-size:6.3px;font-weight:bold">Multi_Pass.psd @ 50% (Atmosphere, RGB/8)</span>
<span class="a tt" style="left:323px;top:47px;color:#aaa">×</span><span class="a tt" style="left:331px;top:47px;font-size:6.42px;font-weight:bold;color:#e8e8e8">Profiles.jpg @ 67.8% (Construction Lines, RGB/8) *</span>
<div class="a" style="left:0;top:58px;width:1152px;height:11px;background:#2d2d2d"></div>
<div class="a" style="left:0;top:59px;width:11px;height:9px;background:#4a4a4a"></div>
<div class="a" style="left:0;top:69px;width:12px;height:607px;background:#2d2d2d"></div>
<svg class="a" style="left:0;top:58px" width="1152" height="11"><rect x="9.2" y="0" width="1" height="11" fill="#4e4e4e"/><text x="10.7" y="7.2" font-size="6.2" fill="#bdbdbd" font-family="Liberation Sans">2</text><rect x="12.9" y="9" width="1" height="2" fill="#6a6a6a"/><rect x="16.6" y="9" width="1" height="2" fill="#6a6a6a"/><rect x="20.2" y="9" width="1" height="2" fill="#6a6a6a"/><rect x="23.9" y="7" width="1" height="4" fill="#6a6a6a"/><rect x="27.6" y="9" width="1" height="2" fill="#6a6a6a"/><rect x="31.2" y="9" width="1" height="2" fill="#6a6a6a"/><rect x="34.9" y="9" width="1" height="2" fill="#6a6a6a"/><rect x="38.6" y="0" width="1" height="11" fill="#4e4e4e"/><text x="40.1" y="7.2" font-size="6.2" fill="#bdbdbd" font-family="Liberation Sans">1</text><rect x="42.2" y="9" width="1" height="2" fill="#6a6a6a"/><rect x="45.9" y="9" width="1" height="2" fill="#6a6a6a"/><rect x="49.6" y="9" width="1" height="2" fill="#6a6a6a"/><rect x="53.2" y="7" width="1" height="4" fill="#6a6a6a"/><rect x="56.9" y="9" width="1" height="2" fill="#6a6a6a"/><rect x="60.6" y="9" width="1" height="2" fill="#6a6a6a"/><rect x="64.2" y="9" width="1" height="2" fill="#6a6a6a"/><rect x="67.9" y="0" width="1" height="11" fill="#4e4e4e"/><text x="69.4" y="7.2" font-size="6.2" fill="#bdbdbd" font-family="Liberation Sans">0</text><rect x="71.6" y="9" width="1" height="2" fill="#6a6a6a"/><rect x="75.2" y="9" width="1" height="2" fill="#6a6a6a"/><rect x="78.9" y="9" width="1" height="2" fill="#6a6a6a"/><rect x="82.6" y="7" width="1" height="4" fill="#6a6a6a"/><rect x="86.2" y="9" width="1" height="2" fill="#6a6a6a"/><rect x="89.9" y="9" width="1" height="2" fill="#6a6a6a"/><rect x="93.6" y="9" width="1" height="2" fill="#6a6a6a"/><rect x="97.2" y="0" width="1" height="11" fill="#4e4e4e"/><text x="98.7" y="7.2" font-size="6.2" fill="#bdbdbd" font-family="Liberation Sans">1</text><rect x="100.9" y="9" width="1" height="2" fill="#6a6a6a"/><rect x="104.6" y="9" width="1" height="2" fill="#6a6a6a"/><rect x="108.2" y="9" width="1" height="2" fill="#6a6a6a"/><rect x="111.9" y="7" width="1" height="4" fill="#6a6a6a"/><rect x="115.6" y="9" width="1" height="2" fill="#6a6a6a"/><rect x="119.2" y="9" width="1" height="2" fill="#6a6a6a"/><rect x="122.9" y="9" width="1" height="2" fill="#6a6a6a"/><rect x="126.6" y="0" width="1" height="11" fill="#4e4e4e"/><text x="128.1" y="7.2" font-size="6.2" fill="#bdbdbd" font-family="Liberation Sans">2</text><rect x="130.2" y="9" width="1" height="2" fill="#6a6a6a"/><rect x="133.9" y="9" width="1" height="2" fill="#6a6a6a"/><rect x="137.6" y="9" width="1" height="2" fill="#6a6a6a"/><rect x="141.2" y="7" width="1" height="4" fill="#6a6a6a"/><rect x="144.9" y="9" width="1" height="2" fill="#6a6a6a"/><rect x="148.6" y="9" width="1" height="2" fill="#6a6a6a"/><rect x="152.2" y="9" width="1" height="2" fill="#6a6a6a"/><rect x="155.9" y="0" width="1" height="11" fill="#4e4e4e"/><text x="157.4" y="7.2" font-size="6.2" fill="#bdbdbd" font-family="Liberation Sans">3</text><rect x="159.6" y="9" width="1" height="2" fill="#6a6a6a"/><rect x="163.2" y="9" width="1" height="2" fill="#6a6a6a"/><rect x="166.9" y="9" width="1" height="2" fill="#6a6a6a"/><rect x="170.6" y="7" width="1" height="4" fill="#6a6a6a"/><rect x="174.2" y="9" width="1" height="2" fill="#6a6a6a"/><rect x="177.9" y="9" width="1" height="2" fill="#6a6a6a"/><rect x="181.6" y="9" width="1" height="2" fill="#6a6a6a"/><rect x="185.2" y="0" width="1" height="11" fill="#4e4e4e"/><text x="186.7" y="7.2" font-size="6.2" fill="#bdbdbd" font-family="Liberation Sans">4</text><rect x="188.9" y="9" width="1" height="2" fill="#6a6a6a"/><rect x="192.6" y="9" width="1" height="2" fill="#6a6a6a"/><rect x="196.2" y="9" width="1" height="2" fill="#6a6a6a"/><rect x="199.9" y="7" width="1" height="4" fill="#6a6a6a"/><rect x="203.6" y="9" width="1" height="2" fill="#6a6a6a"/><rect x="207.2" y="9" width="1" height="2" fill="#6a6a6a"/><rect x="210.9" y="9" width="1" height="2" fill="#6a6a6a"/><rect x="214.5" y="0" width="1" height="11" fill="#4e4e4e"/><text x="216.0" y="7.2" font-size="6.2" fill="#bdbdbd" font-family="Liberation Sans">5</text><rect x="218.2" y="9" width="1" height="2" fill="#6a6a6a"/><rect x="221.9" y="9" width="1" height="2" fill="#6a6a6a"/><rect x="225.5" y="9" width="1" height="2" fill="#6a6a6a"/><rect x="229.2" y="7" width="1" height="4" fill="#6a6a6a"/><rect x="232.9" y="9" width="1" height="2" fill="#6a6a6a"/><rect x="236.5" y="9" width="1" height="2" fill="#6a6a6a"/><rect x="240.2" y="9" width="1" height="2" fill="#6a6a6a"/><rect x="243.9" y="0" width="1" height="11" fill="#4e4e4e"/><text x="245.4" y="7.2" font-size="6.2" fill="#bdbdbd" font-family="Liberation Sans">6</text><rect x="247.5" y="9" width="1" height="2" fill="#6a6a6a"/><rect x="251.2" y="9" width="1" height="2" fill="#6a6a6a"/><rect x="254.9" y="9" width="1" height="2" fill="#6a6a6a"/><rect x="258.5" y="7" width="1" height="4" fill="#6a6a6a"/><rect x="262.2" y="9" width="1" height="2" fill="#6a6a6a"/><rect x="265.9" y="9" width="1" height="2" fill="#6a6a6a"/><rect x="269.5" y="9" width="1" height="2" fill="#6a6a6a"/><rect x="273.2" y="0" width="1" height="11" fill="#4e4e4e"/><text x="274.7" y="7.2" font-size="6.2" fill="#bdbdbd" font-family="Liberation Sans">7</text><rect x="276.9" y="9" width="1" height="2" fill="#6a6a6a"/><rect x="280.5" y="9" width="1" height="2" fill="#6a6a6a"/><rect x="284.2" y="9" width="1" height="2" fill="#6a6a6a"/><rect x="287.9" y="7" width="1" height="4" fill="#6a6a6a"/><rect x="291.5" y="9" width="1" height="2" fill="#6a6a6a"/><rect x="295.2" y="9" width="1" height="2" fill="#6a6a6a"/><rect x="298.9" y="9" width="1" height="2" fill="#6a6a6a"/><rect x="302.5" y="0" width="1" height="11" fill="#4e4e4e"/><text x="304.0" y="7.2" font-size="6.2" fill="#bdbdbd" font-family="Liberation Sans">8</text><rect x="306.2" y="9" width="1" height="2" fill="#6a6a6a"/><rect x="309.9" y="9" width="1" height="2" fill="#6a6a6a"/><rect x="313.5" y="9" width="1" height="2" fill="#6a6a6a"/><rect x="317.2" y="7" width="1" height="4" fill="#6a6a6a"/><rect x="320.9" y="9" width="1" height="2" fill="#6a6a6a"/><rect x="324.5" y="9" width="1" height="2" fill="#6a6a6a"/><rect x="328.2" y="9" width="1" height="2" fill="#6a6a6a"/><rect x="331.9" y="0" width="1" height="11" fill="#4e4e4e"/><text x="333.4" y="7.2" font-size="6.2" fill="#bdbdbd" font-family="Liberation Sans">9</text><rect x="335.5" y="9" width="1" height="2" fill="#6a6a6a"/><rect x="339.2" y="9" width="1" height="2" fill="#6a6a6a"/><rect x="342.9" y="9" width="1" height="2" fill="#6a6a6a"/><rect x="346.5" y="7" width="1" height="4" fill="#6a6a6a"/><rect x="350.2" y="9" width="1" height="2" fill="#6a6a6a"/><rect x="353.9" y="9" width="1" height="2" fill="#6a6a6a"/><rect x="357.5" y="9" width="1" height="2" fill="#6a6a6a"/><rect x="361.2" y="0" width="1" height="11" fill="#4e4e4e"/><text x="362.7" y="7.2" font-size="6.2" fill="#bdbdbd" font-family="Liberation Sans">10</text><rect x="364.9" y="9" width="1" height="2" fill="#6a6a6a"/><rect x="368.5" y="9" width="1" height="2" fill="#6a6a6a"/><rect x="372.2" y="9" width="1" height="2" fill="#6a6a6a"/><rect x="375.9" y="7" width="1" height="4" fill="#6a6a6a"/><rect x="379.5" y="9" width="1" height="2" fill="#6a6a6a"/><rect x="383.2" y="9" width="1" height="2" fill="#6a6a6a"/><rect x="386.9" y="9" width="1" height="2" fill="#6a6a6a"/><rect x="390.5" y="0" width="1" height="11" fill="#4e4e4e"/><text x="392.0" y="7.2" font-size="6.2" fill="#bdbdbd" font-family="Liberation Sans">11</text><rect x="394.2" y="9" width="1" height="2" fill="#6a6a6a"/><rect x="397.9" y="9" width="1" height="2" fill="#6a6a6a"/><rect x="401.5" y="9" width="1" height="2" fill="#6a6a6a"/><rect x="405.2" y="7" width="1" height="4" fill="#6a6a6a"/><rect x="408.9" y="9" width="1" height="2" fill="#6a6a6a"/><rect x="412.5" y="9" width="1" height="2" fill="#6a6a6a"/><rect x="416.2" y="9" width="1" height="2" fill="#6a6a6a"/><rect x="419.9" y="0" width="1" height="11" fill="#4e4e4e"/><text x="421.4" y="7.2" font-size="6.2" fill="#bdbdbd" font-family="Liberation Sans">12</text><rect x="423.5" y="9" width="1" height="2" fill="#6a6a6a"/><rect x="427.2" y="9" width="1" height="2" fill="#6a6a6a"/><rect x="430.9" y="9" width="1" height="2" fill="#6a6a6a"/><rect x="434.5" y="7" width="1" height="4" fill="#6a6a6a"/><rect x="438.2" y="9" width="1" height="2" fill="#6a6a6a"/><rect x="441.9" y="9" width="1" height="2" fill="#6a6a6a"/><rect x="445.5" y="9" width="1" height="2" fill="#6a6a6a"/><rect x="449.2" y="0" width="1" height="11" fill="#4e4e4e"/><text x="450.7" y="7.2" font-size="6.2" fill="#bdbdbd" font-family="Liberation Sans">13</text><rect x="452.9" y="9" width="1" height="2" fill="#6a6a6a"/><rect x="456.5" y="9" width="1" height="2" fill="#6a6a6a"/><rect x="460.2" y="9" width="1" height="2" fill="#6a6a6a"/><rect x="463.9" y="7" width="1" height="4" fill="#6a6a6a"/><rect x="467.5" y="9" width="1" height="2" fill="#6a6a6a"/><rect x="471.2" y="9" width="1" height="2" fill="#6a6a6a"/><rect x="474.9" y="9" width="1" height="2" fill="#6a6a6a"/><rect x="478.5" y="0" width="1" height="11" fill="#4e4e4e"/><text x="480.0" y="7.2" font-size="6.2" fill="#bdbdbd" font-family="Liberation Sans">14</text><rect x="482.2" y="9" width="1" height="2" fill="#6a6a6a"/><rect x="485.9" y="9" width="1" height="2" fill="#6a6a6a"/><rect x="489.5" y="9" width="1" height="2" fill="#6a6a6a"/><rect x="493.2" y="7" width="1" height="4" fill="#6a6a6a"/><rect x="496.9" y="9" width="1" height="2" fill="#6a6a6a"/><rect x="500.5" y="9" width="1" height="2" fill="#6a6a6a"/><rect x="504.2" y="9" width="1" height="2" fill="#6a6a6a"/><rect x="507.9" y="0" width="1" height="11" fill="#4e4e4e"/><text x="509.4" y="7.2" font-size="6.2" fill="#bdbdbd" font-family="Liberation Sans">15</text><rect x="511.5" y="9" width="1" height="2" fill="#6a6a6a"/><rect x="515.2" y="9" width="1" height="2" fill="#6a6a6a"/><rect x="518.8" y="9" width="1" height="2" fill="#6a6a6a"/><rect x="522.5" y="7" width="1" height="4" fill="#6a6a6a"/><rect x="526.2" y="9" width="1" height="2" fill="#6a6a6a"/><rect x="529.8" y="9" width="1" height="2" fill="#6a6a6a"/><rect x="533.5" y="9" width="1" height="2" fill="#6a6a6a"/><rect x="537.2" y="0" width="1" height="11" fill="#4e4e4e"/><text x="538.7" y="7.2" font-size="6.2" fill="#bdbdbd" font-family="Liberation Sans">16</text><rect x="540.8" y="9" width="1" height="2" fill="#6a6a6a"/><rect x="544.5" y="9" width="1" height="2" fill="#6a6a6a"/><rect x="548.2" y="9" width="1" height="2" fill="#6a6a6a"/><rect x="551.8" y="7" width="1" height="4" fill="#6a6a6a"/><rect x="555.5" y="9" width="1" height="2" fill="#6a6a6a"/><rect x="559.2" y="9" width="1" height="2" fill="#6a6a6a"/><rect x="562.8" y="9" width="1" height="2" fill="#6a6a6a"/><rect x="566.5" y="0" width="1" height="11" fill="#4e4e4e"/><text x="568.0" y="7.2" font-size="6.2" fill="#bdbdbd" font-family="Liberation Sans">17</text><rect x="570.2" y="9" width="1" height="2" fill="#6a6a6a"/><rect x="573.8" y="9" width="1" height="2" fill="#6a6a6a"/><rect x="577.5" y="9" width="1" height="2" fill="#6a6a6a"/><rect x="581.2" y="7" width="1" height="4" fill="#6a6a6a"/><rect x="584.8" y="9" width="1" height="2" fill="#6a6a6a"/><rect x="588.5" y="9" width="1" height="2" fill="#6a6a6a"/><rect x="592.2" y="9" width="1" height="2" fill="#6a6a6a"/><rect x="595.8" y="0" width="1" height="11" fill="#4e4e4e"/><text x="597.3" y="7.2" font-size="6.2" fill="#bdbdbd" font-family="Liberation Sans">18</text><rect x="599.5" y="9" width="1" height="2" fill="#6a6a6a"/><rect x="603.2" y="9" width="1" height="2" fill="#6a6a6a"/><rect x="606.8" y="9" width="1" height="2" fill="#6a6a6a"/><rect x="610.5" y="7" width="1" height="4" fill="#6a6a6a"/><rect x="614.2" y="9" width="1" height="2" fill="#6a6a6a"/><rect x="617.8" y="9" width="1" height="2" fill="#6a6a6a"/><rect x="621.5" y="9" width="1" height="2" fill="#6a6a6a"/><rect x="625.2" y="0" width="1" height="11" fill="#4e4e4e"/><text x="626.7" y="7.2" font-size="6.2" fill="#bdbdbd" font-family="Liberation Sans">19</text><rect x="628.8" y="9" width="1" height="2" fill="#6a6a6a"/><rect x="632.5" y="9" width="1" height="2" fill="#6a6a6a"/><rect x="636.2" y="9" width="1" height="2" fill="#6a6a6a"/><rect x="639.8" y="7" width="1" height="4" fill="#6a6a6a"/><rect x="643.5" y="9" width="1" height="2" fill="#6a6a6a"/><rect x="647.2" y="9" width="1" height="2" fill="#6a6a6a"/><rect x="650.8" y="9" width="1" height="2" fill="#6a6a6a"/><rect x="654.5" y="0" width="1" height="11" fill="#4e4e4e"/><text x="656.0" y="7.2" font-size="6.2" fill="#bdbdbd" font-family="Liberation Sans">20</text><rect x="658.2" y="9" width="1" height="2" fill="#6a6a6a"/><rect x="661.8" y="9" width="1" height="2" fill="#6a6a6a"/><rect x="665.5" y="9" width="1" height="2" fill="#6a6a6a"/><rect x="669.2" y="7" width="1" height="4" fill="#6a6a6a"/><rect x="672.8" y="9" width="1" height="2" fill="#6a6a6a"/><rect x="676.5" y="9" width="1" height="2" fill="#6a6a6a"/><rect x="680.2" y="9" width="1" height="2" fill="#6a6a6a"/><rect x="683.8" y="0" width="1" height="11" fill="#4e4e4e"/><text x="685.3" y="7.2" font-size="6.2" fill="#bdbdbd" font-family="Liberation Sans">21</text><rect x="687.5" y="9" width="1" height="2" fill="#6a6a6a"/><rect x="691.2" y="9" width="1" height="2" fill="#6a6a6a"/><rect x="694.8" y="9" width="1" height="2" fill="#6a6a6a"/><rect x="698.5" y="7" width="1" height="4" fill="#6a6a6a"/><rect x="702.2" y="9" width="1" height="2" fill="#6a6a6a"/><rect x="705.8" y="9" width="1" height="2" fill="#6a6a6a"/><rect x="709.5" y="9" width="1" height="2" fill="#6a6a6a"/><rect x="713.2" y="0" width="1" height="11" fill="#4e4e4e"/><text x="714.7" y="7.2" font-size="6.2" fill="#bdbdbd" font-family="Liberation Sans">22</text><rect x="716.8" y="9" width="1" height="2" fill="#6a6a6a"/><rect x="720.5" y="9" width="1" height="2" fill="#6a6a6a"/><rect x="724.2" y="9" width="1" height="2" fill="#6a6a6a"/><rect x="727.8" y="7" width="1" height="4" fill="#6a6a6a"/><rect x="731.5" y="9" width="1" height="2" fill="#6a6a6a"/><rect x="735.2" y="9" width="1" height="2" fill="#6a6a6a"/><rect x="738.8" y="9" width="1" height="2" fill="#6a6a6a"/><rect x="742.5" y="0" width="1" height="11" fill="#4e4e4e"/><text x="744.0" y="7.2" font-size="6.2" fill="#bdbdbd" font-family="Liberation Sans">23</text><rect x="746.2" y="9" width="1" height="2" fill="#6a6a6a"/><rect x="749.8" y="9" width="1" height="2" fill="#6a6a6a"/><rect x="753.5" y="9" width="1" height="2" fill="#6a6a6a"/><rect x="757.2" y="7" width="1" height="4" fill="#6a6a6a"/><rect x="760.8" y="9" width="1" height="2" fill="#6a6a6a"/><rect x="764.5" y="9" width="1" height="2" fill="#6a6a6a"/><rect x="768.2" y="9" width="1" height="2" fill="#6a6a6a"/><rect x="771.8" y="0" width="1" height="11" fill="#4e4e4e"/><text x="773.3" y="7.2" font-size="6.2" fill="#bdbdbd" font-family="Liberation Sans">24</text><rect x="775.5" y="9" width="1" height="2" fill="#6a6a6a"/><rect x="779.2" y="9" width="1" height="2" fill="#6a6a6a"/><rect x="782.8" y="9" width="1" height="2" fill="#6a6a6a"/><rect x="786.5" y="7" width="1" height="4" fill="#6a6a6a"/><rect x="790.2" y="9" width="1" height="2" fill="#6a6a6a"/><rect x="793.8" y="9" width="1" height="2" fill="#6a6a6a"/><rect x="797.5" y="9" width="1" height="2" fill="#6a6a6a"/><rect x="801.1" y="0" width="1" height="11" fill="#4e4e4e"/><text x="802.6" y="7.2" font-size="6.2" fill="#bdbdbd" font-family="Liberation Sans">25</text><rect x="804.8" y="9" width="1" height="2" fill="#6a6a6a"/><rect x="808.5" y="9" width="1" height="2" fill="#6a6a6a"/><rect x="812.1" y="9" width="1" height="2" fill="#6a6a6a"/><rect x="815.8" y="7" width="1" height="4" fill="#6a6a6a"/><rect x="819.5" y="9" width="1" height="2" fill="#6a6a6a"/><rect x="823.1" y="9" width="1" height="2" fill="#6a6a6a"/><rect x="826.8" y="9" width="1" height="2" fill="#6a6a6a"/><rect x="830.5" y="0" width="1" height="11" fill="#4e4e4e"/><text x="832.0" y="7.2" font-size="6.2" fill="#bdbdbd" font-family="Liberation Sans">26</text><rect x="834.1" y="9" width="1" height="2" fill="#6a6a6a"/><rect x="837.8" y="9" width="1" height="2" fill="#6a6a6a"/><rect x="841.5" y="9" width="1" height="2" fill="#6a6a6a"/><rect x="845.1" y="7" width="1" height="4" fill="#6a6a6a"/><rect x="848.8" y="9" width="1" height="2" fill="#6a6a6a"/><rect x="852.5" y="9" width="1" height="2" fill="#6a6a6a"/><rect x="856.1" y="9" width="1" height="2" fill="#6a6a6a"/><rect x="859.8" y="0" width="1" height="11" fill="#4e4e4e"/><text x="861.3" y="7.2" font-size="6.2" fill="#bdbdbd" font-family="Liberation Sans">27</text><rect x="863.5" y="9" width="1" height="2" fill="#6a6a6a"/><rect x="867.1" y="9" width="1" height="2" fill="#6a6a6a"/><rect x="870.8" y="9" width="1" height="2" fill="#6a6a6a"/><rect x="874.5" y="7" width="1" height="4" fill="#6a6a6a"/><rect x="878.1" y="9" width="1" height="2" fill="#6a6a6a"/><rect x="881.8" y="9" width="1" height="2" fill="#6a6a6a"/><rect x="885.5" y="9" width="1" height="2" fill="#6a6a6a"/><rect x="889.1" y="0" width="1" height="11" fill="#4e4e4e"/><text x="890.6" y="7.2" font-size="6.2" fill="#bdbdbd" font-family="Liberation Sans">28</text><rect x="892.8" y="9" width="1" height="2" fill="#6a6a6a"/><rect x="896.5" y="9" width="1" height="2" fill="#6a6a6a"/><rect x="900.1" y="9" width="1" height="2" fill="#6a6a6a"/><rect x="903.8" y="7" width="1" height="4" fill="#6a6a6a"/><rect x="907.5" y="9" width="1" height="2" fill="#6a6a6a"/><rect x="911.1" y="9" width="1" height="2" fill="#6a6a6a"/><rect x="914.8" y="9" width="1" height="2" fill="#6a6a6a"/><rect x="918.5" y="0" width="1" height="11" fill="#4e4e4e"/><text x="920.0" y="7.2" font-size="6.2" fill="#bdbdbd" font-family="Liberation Sans">29</text><rect x="922.1" y="9" width="1" height="2" fill="#6a6a6a"/><rect x="925.8" y="9" width="1" height="2" fill="#6a6a6a"/><rect x="929.5" y="9" width="1" height="2" fill="#6a6a6a"/><rect x="933.1" y="7" width="1" height="4" fill="#6a6a6a"/><rect x="936.8" y="9" width="1" height="2" fill="#6a6a6a"/><rect x="940.5" y="9" width="1" height="2" fill="#6a6a6a"/><rect x="944.1" y="9" width="1" height="2" fill="#6a6a6a"/><rect x="947.8" y="0" width="1" height="11" fill="#4e4e4e"/><text x="949.3" y="7.2" font-size="6.2" fill="#bdbdbd" font-family="Liberation Sans">30</text><rect x="951.5" y="9" width="1" height="2" fill="#6a6a6a"/><rect x="955.1" y="9" width="1" height="2" fill="#6a6a6a"/><rect x="958.8" y="9" width="1" height="2" fill="#6a6a6a"/><rect x="962.5" y="7" width="1" height="4" fill="#6a6a6a"/><rect x="966.1" y="9" width="1" height="2" fill="#6a6a6a"/><rect x="969.8" y="9" width="1" height="2" fill="#6a6a6a"/><rect x="973.5" y="9" width="1" height="2" fill="#6a6a6a"/><rect x="977.1" y="0" width="1" height="11" fill="#4e4e4e"/><text x="978.6" y="7.2" font-size="6.2" fill="#bdbdbd" font-family="Liberation Sans">31</text><rect x="980.8" y="9" width="1" height="2" fill="#6a6a6a"/><rect x="984.5" y="9" width="1" height="2" fill="#6a6a6a"/><rect x="988.1" y="9" width="1" height="2" fill="#6a6a6a"/><rect x="991.8" y="7" width="1" height="4" fill="#6a6a6a"/><rect x="995.5" y="9" width="1" height="2" fill="#6a6a6a"/><rect x="999.1" y="9" width="1" height="2" fill="#6a6a6a"/><rect x="1002.8" y="9" width="1" height="2" fill="#6a6a6a"/><rect x="1006.5" y="0" width="1" height="11" fill="#4e4e4e"/><text x="1008.0" y="7.2" font-size="6.2" fill="#bdbdbd" font-family="Liberation Sans">32</text><rect x="1010.1" y="9" width="1" height="2" fill="#6a6a6a"/><rect x="1013.8" y="9" width="1" height="2" fill="#6a6a6a"/><rect x="1017.5" y="9" width="1" height="2" fill="#6a6a6a"/><rect x="1021.1" y="7" width="1" height="4" fill="#6a6a6a"/><rect x="1024.8" y="9" width="1" height="2" fill="#6a6a6a"/><rect x="1028.5" y="9" width="1" height="2" fill="#6a6a6a"/><rect x="1032.1" y="9" width="1" height="2" fill="#6a6a6a"/><rect x="1035.8" y="0" width="1" height="11" fill="#4e4e4e"/><text x="1037.3" y="7.2" font-size="6.2" fill="#bdbdbd" font-family="Liberation Sans">33</text><rect x="1039.5" y="9" width="1" height="2" fill="#6a6a6a"/><rect x="1043.1" y="9" width="1" height="2" fill="#6a6a6a"/><rect x="1046.8" y="9" width="1" height="2" fill="#6a6a6a"/><rect x="1050.5" y="7" width="1" height="4" fill="#6a6a6a"/><rect x="1054.1" y="9" width="1" height="2" fill="#6a6a6a"/><rect x="1057.8" y="9" width="1" height="2" fill="#6a6a6a"/><rect x="1061.5" y="9" width="1" height="2" fill="#6a6a6a"/><rect x="1065.1" y="0" width="1" height="11" fill="#4e4e4e"/><text x="1066.6" y="7.2" font-size="6.2" fill="#bdbdbd" font-family="Liberation Sans">34</text><rect x="1068.8" y="9" width="1" height="2" fill="#6a6a6a"/><rect x="1072.5" y="9" width="1" height="2" fill="#6a6a6a"/><rect x="1076.1" y="9" width="1" height="2" fill="#6a6a6a"/><rect x="1079.8" y="7" width="1" height="4" fill="#6a6a6a"/><rect x="1083.5" y="9" width="1" height="2" fill="#6a6a6a"/><rect x="1087.1" y="9" width="1" height="2" fill="#6a6a6a"/><rect x="1090.8" y="9" width="1" height="2" fill="#6a6a6a"/><rect x="1094.5" y="0" width="1" height="11" fill="#4e4e4e"/><text x="1096.0" y="7.2" font-size="6.2" fill="#bdbdbd" font-family="Liberation Sans">35</text><rect x="1098.1" y="9" width="1" height="2" fill="#6a6a6a"/><rect x="1101.8" y="9" width="1" height="2" fill="#6a6a6a"/><rect x="1105.4" y="9" width="1" height="2" fill="#6a6a6a"/><rect x="1109.1" y="7" width="1" height="4" fill="#6a6a6a"/><rect x="1112.8" y="9" width="1" height="2" fill="#6a6a6a"/><rect x="1116.4" y="9" width="1" height="2" fill="#6a6a6a"/><rect x="1120.1" y="9" width="1" height="2" fill="#6a6a6a"/><rect x="1123.8" y="0" width="1" height="11" fill="#4e4e4e"/><text x="1125.3" y="7.2" font-size="6.2" fill="#bdbdbd" font-family="Liberation Sans">36</text><rect x="1127.4" y="9" width="1" height="2" fill="#6a6a6a"/><rect x="1131.1" y="9" width="1" height="2" fill="#6a6a6a"/><rect x="1134.8" y="9" width="1" height="2" fill="#6a6a6a"/><rect x="1138.4" y="7" width="1" height="4" fill="#6a6a6a"/><rect x="1142.1" y="9" width="1" height="2" fill="#6a6a6a"/><rect x="1145.8" y="9" width="1" height="2" fill="#6a6a6a"/><rect x="1149.4" y="9" width="1" height="2" fill="#6a6a6a"/><rect x="11" y="10" width="1141" height="1" fill="#505050"/></svg>
<svg class="a" style="left:0;top:69px" width="12" height="607"><rect x="0" y="17.0" width="12" height="1" fill="#3e3e3e"/><text x="3" y="24.5" font-size="6.2" fill="#bdbdbd" font-family="Liberation Sans">0</text><rect x="10" y="20.7" width="2" height="1" fill="#6a6a6a"/><rect x="10" y="24.3" width="2" height="1" fill="#6a6a6a"/><rect x="10" y="28.0" width="2" height="1" fill="#6a6a6a"/><rect x="8" y="31.7" width="4" height="1" fill="#6a6a6a"/><rect x="10" y="35.3" width="2" height="1" fill="#6a6a6a"/><rect x="10" y="39.0" width="2" height="1" fill="#6a6a6a"/><rect x="10" y="42.7" width="2" height="1" fill="#6a6a6a"/><rect x="0" y="46.3" width="12" height="1" fill="#3e3e3e"/><text x="3" y="53.8" font-size="6.2" fill="#bdbdbd" font-family="Liberation Sans">1</text><rect x="10" y="50.0" width="2" height="1" fill="#6a6a6a"/><rect x="10" y="53.7" width="2" height="1" fill="#6a6a6a"/><rect x="10" y="57.3" width="2" height="1" fill="#6a6a6a"/><rect x="8" y="61.0" width="4" height="1" fill="#6a6a6a"/><rect x="10" y="64.7" width="2" height="1" fill="#6a6a6a"/><rect x="10" y="68.3" width="2" height="1" fill="#6a6a6a"/><rect x="10" y="72.0" width="2" height="1" fill="#6a6a6a"/><rect x="0" y="75.7" width="12" height="1" fill="#3e3e3e"/><text x="3" y="83.2" font-size="6.2" fill="#bdbdbd" font-family="Liberation Sans">2</text><rect x="10" y="79.3" width="2" height="1" fill="#6a6a6a"/><rect x="10" y="83.0" width="2" height="1" fill="#6a6a6a"/><rect x="10" y="86.7" width="2" height="1" fill="#6a6a6a"/><rect x="8" y="90.3" width="4" height="1" fill="#6a6a6a"/><rect x="10" y="94.0" width="2" height="1" fill="#6a6a6a"/><rect x="10" y="97.7" width="2" height="1" fill="#6a6a6a"/><rect x="10" y="101.3" width="2" height="1" fill="#6a6a6a"/><rect x="0" y="105.0" width="12" height="1" fill="#3e3e3e"/><text x="3" y="112.5" font-size="6.2" fill="#bdbdbd" font-family="Liberation Sans">3</text><rect x="10" y="108.7" width="2" height="1" fill="#6a6a6a"/><rect x="10" y="112.3" width="2" height="1" fill="#6a6a6a"/><rect x="10" y="116.0" width="2" height="1" fill="#6a6a6a"/><rect x="8" y="119.7" width="4" height="1" fill="#6a6a6a"/><rect x="10" y="123.3" width="2" height="1" fill="#6a6a6a"/><rect x="10" y="127.0" width="2" height="1" fill="#6a6a6a"/><rect x="10" y="130.7" width="2" height="1" fill="#6a6a6a"/><rect x="0" y="134.3" width="12" height="1" fill="#3e3e3e"/><text x="3" y="141.8" font-size="6.2" fill="#bdbdbd" font-family="Liberation Sans">4</text><rect x="10" y="138.0" width="2" height="1" fill="#6a6a6a"/><rect x="10" y="141.7" width="2" height="1" fill="#6a6a6a"/><rect x="10" y="145.3" width="2" height="1" fill="#6a6a6a"/><rect x="8" y="149.0" width="4" height="1" fill="#6a6a6a"/><rect x="10" y="152.7" width="2" height="1" fill="#6a6a6a"/><rect x="10" y="156.3" width="2" height="1" fill="#6a6a6a"/><rect x="10" y="160.0" width="2" height="1" fill="#6a6a6a"/><rect x="0" y="163.6" width="12" height="1" fill="#3e3e3e"/><text x="3" y="171.1" font-size="6.2" fill="#bdbdbd" font-family="Liberation Sans">5</text><rect x="10" y="167.3" width="2" height="1" fill="#6a6a6a"/><rect x="10" y="171.0" width="2" height="1" fill="#6a6a6a"/><rect x="10" y="174.6" width="2" height="1" fill="#6a6a6a"/><rect x="8" y="178.3" width="4" height="1" fill="#6a6a6a"/><rect x="10" y="182.0" width="2" height="1" fill="#6a6a6a"/><rect x="10" y="185.6" width="2" height="1" fill="#6a6a6a"/><rect x="10" y="189.3" width="2" height="1" fill="#6a6a6a"/><rect x="0" y="193.0" width="12" height="1" fill="#3e3e3e"/><text x="3" y="200.5" font-size="6.2" fill="#bdbdbd" font-family="Liberation Sans">6</text><rect x="10" y="196.6" width="2" height="1" fill="#6a6a6a"/><rect x="10" y="200.3" width="2" height="1" fill="#6a6a6a"/><rect x="10" y="204.0" width="2" height="1" fill="#6a6a6a"/><rect x="8" y="207.6" width="4" height="1" fill="#6a6a6a"/><rect x="10" y="211.3" width="2" height="1" fill="#6a6a6a"/><rect x="10" y="215.0" width="2" height="1" fill="#6a6a6a"/><rect x="10" y="218.6" width="2" height="1" fill="#6a6a6a"/><rect x="0" y="222.3" width="12" height="1" fill="#3e3e3e"/><text x="3" y="229.8" font-size="6.2" fill="#bdbdbd" font-family="Liberation Sans">7</text><rect x="10" y="226.0" width="2" height="1" fill="#6a6a6a"/><rect x="10" y="229.6" width="2" height="1" fill="#6a6a6a"/><rect x="10" y="233.3" width="2" height="1" fill="#6a6a6a"/><rect x="8" y="237.0" width="4" height="1" fill="#6a6a6a"/><rect x="10" y="240.6" width="2" height="1" fill="#6a6a6a"/><rect x="10" y="244.3" width="2" height="1" fill="#6a6a6a"/><rect x="10" y="248.0" width="2" height="1" fill="#6a6a6a"/><rect x="0" y="251.6" width="12" height="1" fill="#3e3e3e"/><text x="3" y="259.1" font-size="6.2" fill="#bdbdbd" font-family="Liberation Sans">8</text><rect x="10" y="255.3" width="2" height="1" fill="#6a6a6a"/><rect x="10" y="259.0" width="2" height="1" fill="#6a6a6a"/><rect x="10" y="262.6" width="2" height="1" fill="#6a6a6a"/><rect x="8" y="266.3" width="4" height="1" fill="#6a6a6a"/><rect x="10" y="270.0" width="2" height="1" fill="#6a6a6a"/><rect x="10" y="273.6" width="2" height="1" fill="#6a6a6a"/><rect x="10" y="277.3" width="2" height="1" fill="#6a6a6a"/><rect x="0" y="281.0" width="12" height="1" fill="#3e3e3e"/><text x="3" y="288.5" font-size="6.2" fill="#bdbdbd" font-family="Liberation Sans">9</text><rect x="10" y="284.6" width="2" height="1" fill="#6a6a6a"/><rect x="10" y="288.3" width="2" height="1" fill="#6a6a6a"/><rect x="10" y="292.0" width="2" height="1" fill="#6a6a6a"/><rect x="8" y="295.6" width="4" height="1" fill="#6a6a6a"/><rect x="10" y="299.3" width="2" height="1" fill="#6a6a6a"/><rect x="10" y="303.0" width="2" height="1" fill="#6a6a6a"/><rect x="10" y="306.6" width="2" height="1" fill="#6a6a6a"/><rect x="0" y="310.3" width="12" height="1" fill="#3e3e3e"/><text x="3" y="317.8" font-size="6.2" fill="#bdbdbd" font-family="Liberation Sans">1</text><text x="3" y="323.8" font-size="6.2" fill="#bdbdbd" font-family="Liberation Sans">0</text><rect x="10" y="314.0" width="2" height="1" fill="#6a6a6a"/><rect x="10" y="317.6" width="2" height="1" fill="#6a6a6a"/><rect x="10" y="321.3" width="2" height="1" fill="#6a6a6a"/><rect x="8" y="325.0" width="4" height="1" fill="#6a6a6a"/><rect x="10" y="328.6" width="2" height="1" fill="#6a6a6a"/><rect x="10" y="332.3" width="2" height="1" fill="#6a6a6a"/><rect x="10" y="336.0" width="2" height="1" fill="#6a6a6a"/><rect x="0" y="339.6" width="12" height="1" fill="#3e3e3e"/><text x="3" y="347.1" font-size="6.2" fill="#bdbdbd" font-family="Liberation Sans">1</text><text x="3" y="353.1" font-size="6.2" fill="#bdbdbd" font-family="Liberation Sans">1</text><rect x="10" y="343.3" width="2" height="1" fill="#6a6a6a"/><rect x="10" y="347.0" width="2" height="1" fill="#6a6a6a"/><rect x="10" y="350.6" width="2" height="1" fill="#6a6a6a"/><rect x="8" y="354.3" width="4" height="1" fill="#6a6a6a"/><rect x="10" y="358.0" width="2" height="1" fill="#6a6a6a"/><rect x="10" y="361.6" width="2" height="1" fill="#6a6a6a"/><rect x="10" y="365.3" width="2" height="1" fill="#6a6a6a"/><rect x="0" y="369.0" width="12" height="1" fill="#3e3e3e"/><text x="3" y="376.5" font-size="6.2" fill="#bdbdbd" font-family="Liberation Sans">1</text><text x="3" y="382.5" font-size="6.2" fill="#bdbdbd" font-family="Liberation Sans">2</text><rect x="10" y="372.6" width="2" height="1" fill="#6a6a6a"/><rect x="10" y="376.3" width="2" height="1" fill="#6a6a6a"/><rect x="10" y="380.0" width="2" height="1" fill="#6a6a6a"/><rect x="8" y="383.6" width="4" height="1" fill="#6a6a6a"/><rect x="10" y="387.3" width="2" height="1" fill="#6a6a6a"/><rect x="10" y="391.0" width="2" height="1" fill="#6a6a6a"/><rect x="10" y="394.6" width="2" height="1" fill="#6a6a6a"/><rect x="0" y="398.3" width="12" height="1" fill="#3e3e3e"/><text x="3" y="405.8" font-size="6.2" fill="#bdbdbd" font-family="Liberation Sans">1</text><text x="3" y="411.8" font-size="6.2" fill="#bdbdbd" font-family="Liberation Sans">3</text><rect x="10" y="402.0" width="2" height="1" fill="#6a6a6a"/><rect x="10" y="405.6" width="2" height="1" fill="#6a6a6a"/><rect x="10" y="409.3" width="2" height="1" fill="#6a6a6a"/><rect x="8" y="413.0" width="4" height="1" fill="#6a6a6a"/><rect x="10" y="416.6" width="2" height="1" fill="#6a6a6a"/><rect x="10" y="420.3" width="2" height="1" fill="#6a6a6a"/><rect x="10" y="424.0" width="2" height="1" fill="#6a6a6a"/><rect x="0" y="427.6" width="12" height="1" fill="#3e3e3e"/><text x="3" y="435.1" font-size="6.2" fill="#bdbdbd" font-family="Liberation Sans">1</text><text x="3" y="441.1" font-size="6.2" fill="#bdbdbd" font-family="Liberation Sans">4</text><rect x="10" y="431.3" width="2" height="1" fill="#6a6a6a"/><rect x="10" y="435.0" width="2" height="1" fill="#6a6a6a"/><rect x="10" y="438.6" width="2" height="1" fill="#6a6a6a"/><rect x="8" y="442.3" width="4" height="1" fill="#6a6a6a"/><rect x="10" y="446.0" width="2" height="1" fill="#6a6a6a"/><rect x="10" y="449.6" width="2" height="1" fill="#6a6a6a"/><rect x="10" y="453.3" width="2" height="1" fill="#6a6a6a"/><rect x="0" y="456.9" width="12" height="1" fill="#3e3e3e"/><text x="3" y="464.4" font-size="6.2" fill="#bdbdbd" font-family="Liberation Sans">1</text><text x="3" y="470.4" font-size="6.2" fill="#bdbdbd" font-family="Liberation Sans">5</text><rect x="10" y="460.6" width="2" height="1" fill="#6a6a6a"/><rect x="10" y="464.3" width="2" height="1" fill="#6a6a6a"/><rect x="10" y="467.9" width="2" height="1" fill="#6a6a6a"/><rect x="8" y="471.6" width="4" height="1" fill="#6a6a6a"/><rect x="10" y="475.3" width="2" height="1" fill="#6a6a6a"/><rect x="10" y="478.9" width="2" height="1" fill="#6a6a6a"/><rect x="10" y="482.6" width="2" height="1" fill="#6a6a6a"/><rect x="0" y="486.3" width="12" height="1" fill="#3e3e3e"/><text x="3" y="493.8" font-size="6.2" fill="#bdbdbd" font-family="Liberation Sans">1</text><text x="3" y="499.8" font-size="6.2" fill="#bdbdbd" font-family="Liberation Sans">6</text><rect x="10" y="489.9" width="2" height="1" fill="#6a6a6a"/><rect x="10" y="493.6" width="2" height="1" fill="#6a6a6a"/><rect x="10" y="497.3" width="2" height="1" fill="#6a6a6a"/><rect x="8" y="500.9" width="4" height="1" fill="#6a6a6a"/><rect x="10" y="504.6" width="2" height="1" fill="#6a6a6a"/><rect x="10" y="508.3" width="2" height="1" fill="#6a6a6a"/><rect x="10" y="511.9" width="2" height="1" fill="#6a6a6a"/><rect x="0" y="515.6" width="12" height="1" fill="#3e3e3e"/><text x="3" y="523.1" font-size="6.2" fill="#bdbdbd" font-family="Liberation Sans">1</text><text x="3" y="529.1" font-size="6.2" fill="#bdbdbd" font-family="Liberation Sans">7</text><rect x="10" y="519.3" width="2" height="1" fill="#6a6a6a"/><rect x="10" y="522.9" width="2" height="1" fill="#6a6a6a"/><rect x="10" y="526.6" width="2" height="1" fill="#6a6a6a"/><rect x="8" y="530.3" width="4" height="1" fill="#6a6a6a"/><rect x="10" y="533.9" width="2" height="1" fill="#6a6a6a"/><rect x="10" y="537.6" width="2" height="1" fill="#6a6a6a"/><rect x="10" y="541.3" width="2" height="1" fill="#6a6a6a"/><rect x="0" y="544.9" width="12" height="1" fill="#3e3e3e"/><text x="3" y="552.4" font-size="6.2" fill="#bdbdbd" font-family="Liberation Sans">1</text><text x="3" y="558.4" font-size="6.2" fill="#bdbdbd" font-family="Liberation Sans">8</text><rect x="10" y="548.6" width="2" height="1" fill="#6a6a6a"/><rect x="10" y="552.3" width="2" height="1" fill="#6a6a6a"/><rect x="10" y="555.9" width="2" height="1" fill="#6a6a6a"/><rect x="8" y="559.6" width="4" height="1" fill="#6a6a6a"/><rect x="10" y="563.3" width="2" height="1" fill="#6a6a6a"/><rect x="10" y="566.9" width="2" height="1" fill="#6a6a6a"/><rect x="10" y="570.6" width="2" height="1" fill="#6a6a6a"/><rect x="0" y="574.3" width="12" height="1" fill="#3e3e3e"/><text x="3" y="581.8" font-size="6.2" fill="#bdbdbd" font-family="Liberation Sans">1</text><text x="3" y="587.8" font-size="6.2" fill="#bdbdbd" font-family="Liberation Sans">9</text><rect x="10" y="577.9" width="2" height="1" fill="#6a6a6a"/><rect x="10" y="581.6" width="2" height="1" fill="#6a6a6a"/><rect x="10" y="585.3" width="2" height="1" fill="#6a6a6a"/><rect x="8" y="588.9" width="4" height="1" fill="#6a6a6a"/><rect x="10" y="592.6" width="2" height="1" fill="#6a6a6a"/><rect x="10" y="596.3" width="2" height="1" fill="#6a6a6a"/><rect x="10" y="599.9" width="2" height="1" fill="#6a6a6a"/><rect x="0" y="603.6" width="12" height="1" fill="#3e3e3e"/><text x="3" y="611.1" font-size="6.2" fill="#bdbdbd" font-family="Liberation Sans">2</text><text x="3" y="617.1" font-size="6.2" fill="#bdbdbd" font-family="Liberation Sans">0</text><rect x="11" y="0" width="1" height="607" fill="#505050"/></svg>
<div class="a" style="left:21px;top:80px;width:44px;height:229px;background:#2e2e2e"></div>
<div class="a" style="left:22px;top:80px;width:42px;height:7px;background:#2b2b2b"></div>
<div class="a" style="left:22px;top:87px;width:42px;height:220px;background:#535353"></div>
<span class="a" style="left:25px;top:79px;font-size:7px;line-height:8px;color:#bbb">×</span>
<svg class="a" style="left:56px;top:82px" width="6" height="4"><path d="M0 0l2 2-2 2zM3 0l2 2-2 2z" fill="#bbb"/></svg>
<div class="a" style="left:36px;top:90px;width:14px;height:1px;background:#404040"></div>
<div class="a" style="left:23px;top:143px;width:40px;height:1px;background:#444"></div>
<div class="a" style="left:23px;top:208px;width:40px;height:1px;background:#444"></div>
<div class="a" style="left:23px;top:241.5px;width:40px;height:1px;background:#444"></div>
<div class="a" style="left:43px;top:226px;width:19px;height:14px;background:#3d3d3d;border:1px solid #363636"></div>
<svg class="a" style="left:0;top:0" width="70" height="310">
<g fill="none" stroke="#c8c8c8" stroke-width="1">
<rect x="28.5" y="100.5" width="9" height="7.5" stroke-dasharray="1.6 1.1" stroke-width="1.1"/>
<path d="M47.5 100v6.5l1.6-1.5 1.2 2.5 1-0.5-1.2-2.4h2.2z" fill="#d0d0d0" stroke="none"/><path d="M55.2 102.5v5.5M52.5 105.2h5.5" stroke-width="1"/>
<path d="M28.2 115.5l3 2.2 3-0.5 3-1.8-1.5 4.5-3 4-1.8-1.5z" stroke-width="1.4" stroke="#c0c0c0"/>
<path d="M50 123.5c1.5 0.2 3-0.5 4.2-2l4-5" stroke-width="1.7" stroke="#d0d0d0"/><path d="M49 121c-0.5-2 0.5-4 2.5-5" stroke-width="0.7" stroke="#8a8a8a" stroke-dasharray="1 0.8"/>
<path d="M30.5 131v7.5h7M28.2 133.5h6.8v7" stroke-width="1.5"/>
<path d="M48.8 140l5-5" stroke-width="1.5"/><path d="M52.5 133.5l2.5-2.5a1.6 1.6 0 0 1 2.5 2.5l-2.5 2.5z" fill="#d0d0d0" stroke="none"/>
<path d="M28.5 155.5l7-6.5a1.8 1.8 0 0 1 2.5 2.5l-7 6.5a1.8 1.8 0 0 1-2.5-2.5z" fill="#bdbdbd" stroke="none"/><path d="M30 151c0-1 1-2 2-2" stroke="#999" stroke-width="0.7"/>
<path d="M58 148.5l-5.5 5.5" stroke-width="1.3"/><path d="M48 157.3c0.5-2 1.5-3.3 3.5-3.8l1.2 1.2c-0.6 2-2 2.8-4.7 2.6z" fill="#d0d0d0" stroke="none"/>
<path d="M31.5 164a1.5 1.5 0 0 1 3 0v5h-3z" fill="#c4c4c4" stroke="none"/><path d="M28 169.3h9.5v2.3H28z" fill="#c4c4c4" stroke="none"/><path d="M28 173h9.5" stroke-width="0.8"/>
<path d="M57.5 164l-4.5 4.5" stroke-width="1"/><path d="M48.5 166.5c1-1 2-1.3 3.5-1.3" stroke-width="0.9"/><path d="M58 167.5l-5 5" stroke-width="1.2"/><path d="M48 172.8c0.5-1.6 1.4-2.6 3-3l1 1c-0.5 1.6-1.7 2.2-4 2z" fill="#d0d0d0" stroke="none"/>
<path d="M28.5 186.5l5-6.5 5 0.5-5 7z" fill="#bdbdbd" stroke="none"/><path d="M33.5 180l-1.2 1.5" stroke="#999" stroke-width="0.6"/>
<path d="M48.5 183.5l4-3.5 4.5 4-4 4z" fill="#c4c4c4" stroke="none"/><circle cx="52" cy="178.8" r="1.5" stroke-width="0.8"/><path d="M57 184.5v3" stroke-width="1.3"/>
<path d="M32.3 195.5c-1.6 2.6-3.3 4.4-3.3 6.2a3.3 3.3 0 0 0 6.6 0c0-1.8-1.7-3.6-3.3-6.2z" fill="#b8b8b8" stroke="none"/>
<circle cx="51" cy="198" r="2.8" fill="#b8b8b8" stroke="none"/><path d="M53 200l3.5 3.5" stroke-width="1.4"/>
<path d="M29 221.5l1.5-5.5 4-3.5 2.3 2.3-3.3 4z" fill="#c4c4c4" stroke="none"/><path d="M30 220.5l2.5-2.5" stroke="#535353" stroke-width="0.8"/><circle cx="32.6" cy="217.5" r="0.7" fill="#535353" stroke="none"/>
<path d="M48.3 212h8.7M52.6 212v9.5M50.8 221.5h3.6M48.3 212v1.5M57 212v1.5" stroke-width="1.2"/>
<path d="M29 227.5v9.5l2.4-2.3 1.9 3.4 1.4-0.8-1.9-3.3h3.3z" fill="#3a3a3a" stroke="#c4c4c4" stroke-width="0.9"/>
<path d="M47.5 237.5l9.5-9.5" stroke-width="1.1" stroke="#d4d4d4"/>
<path d="M29.5 251.5c-0.5-2 0-4 1.5-5l2-2.5 2 1 1.5 1.5 0.5 3.5c0 2.5-1.5 4.5-4 4.5-2 0-3-1.2-3.5-3z" fill="#bdbdbd" stroke="none"/><path d="M30.5 246.5l2.5-2 2.5 1.5 1.5-1" stroke="#ddd" stroke-width="0.7"/>
<circle cx="51" cy="248.3" r="3" stroke-width="1.2" fill="#7a7a7a"/><path d="M53.2 250.5l3.5 3.5" stroke-width="1.6"/>
<path d="M48.5 263.5h3.5v3.5" stroke-width="0.9"/><path d="M47 263.5l1.5-1.3v2.6zM52 268.5l-1.3-1.5h2.6z" fill="#c8c8c8" stroke="none"/>
<rect x="30.5" y="280.5" width="3" height="3" fill="#111" stroke="#bbb" stroke-width="0.6"/><rect x="32.5" y="282.5" width="3" height="3" fill="#ddd" stroke="none"/>
<rect x="27.5" y="294" width="10" height="8" stroke-width="0.9"/><circle cx="32.5" cy="298" r="2" fill="#c8c8c8" stroke="none"/>
<rect x="47.5" y="296.5" width="8" height="6" stroke-width="0.9"/><rect x="49.5" y="294" width="8" height="6" stroke-width="0.9" fill="#7a7a7a"/>
</g>
<g fill="#d8d8d8">
<path d="M37 108h1.6v-1.6z"/><path d="M58 108h1.6v-1.6z"/><path d="M37 124h1.6v-1.6z"/><path d="M58 124h1.6v-1.6z"/><path d="M37 140h1.6v-1.6z"/><path d="M58 140h1.6v-1.6z"/><path d="M37 157h1.6v-1.6z"/><path d="M58 157h1.6v-1.6z"/><path d="M37 172h1.6v-1.6z"/><path d="M58 172h1.6v-1.6z"/><path d="M37 188h1.6v-1.6z"/><path d="M58 188h1.6v-1.6z"/><path d="M37 204h1.6v-1.6z"/><path d="M58 204h1.6v-1.6z"/><path d="M37 221h1.6v-1.6z"/><path d="M58 221h1.6v-1.6z"/><path d="M37 237h1.6v-1.6z"/><path d="M58 237h1.6v-1.6z"/><path d="M37 254h1.6v-1.6z"/><path d="M58 302h1.6v-1.6z"/></g></svg>
<div class="a" style="left:38.5px;top:270px;width:15px;height:15px;background:#fff;border:1px solid #bdbdbd"></div>
<div class="a" style="left:30px;top:261px;width:15px;height:14px;background:#000;border:1px solid #c8c8c8;box-shadow:0 0 0 1px #3a3a3a"></div>
<div class="a" style="left:915px;top:70px;width:81px;height:256px;background:#383838"></div>
<div class="a" style="left:916px;top:71px;width:79px;height:7px;background:#3e3e3e"></div>
<span class="a" style="left:919px;top:70px;font-size:7px;line-height:8px;color:#bbb">×</span>
<svg class="a" style="left:986px;top:73px" width="6" height="4"><path d="M0 0l2 2-2 2zM3 0l2 2-2 2z" fill="#bbb"/></svg>
<div class="a" style="left:916px;top:78px;width:79px;height:24px;background:#4b4b4b"></div>
<div class="a" style="left:950px;top:80px;width:12px;height:1px;background:#333"></div>
<span class="a pt" style="left:938px;top:87.5px;font-size:5.6px">Character Styles</span>
<div class="a" style="left:916px;top:103px;width:79px;height:23px;background:#4b4b4b"></div>
<div class="a" style="left:950px;top:105px;width:12px;height:1px;background:#333"></div>
<span class="a pt" style="left:938px;top:112.0px;font-size:5.6px">History</span>
<div class="a" style="left:916px;top:127px;width:79px;height:24px;background:#4b4b4b"></div>
<div class="a" style="left:950px;top:129px;width:12px;height:1px;background:#333"></div>
<span class="a pt" style="left:938px;top:136.5px;font-size:5.6px">Actions</span>
<div class="a" style="left:916px;top:152px;width:79px;height:23px;background:#4b4b4b"></div>
<div class="a" style="left:950px;top:154px;width:12px;height:1px;background:#333"></div>
<span class="a pt" style="left:938px;top:161.0px;font-size:5.6px">Properties</span>
<div class="a" style="left:916px;top:176px;width:79px;height:23.5px;background:#4b4b4b"></div>
<div class="a" style="left:950px;top:178px;width:12px;height:1px;background:#333"></div>
<span class="a pt" style="left:938px;top:185.5px;font-size:5.6px">Brush</span>
<div class="a" style="left:916px;top:200.5px;width:79px;height:40.0px;background:#4b4b4b"></div>
<div class="a" style="left:950px;top:202.5px;width:12px;height:1px;background:#333"></div>
<span class="a pt" style="left:938px;top:210.5px;font-size:5.6px">Brush Presets</span>
<span class="a pt" style="left:938px;top:227.5px;font-size:5.6px">Character</span>
<div class="a" style="left:916px;top:241.5px;width:79px;height:24.0px;background:#4b4b4b"></div>
<div class="a" style="left:950px;top:243.5px;width:12px;height:1px;background:#333"></div>
<span class="a pt" style="left:938px;top:252.0px;font-size:5.6px">Paragraph</span>
<div class="a" style="left:916px;top:266.5px;width:79px;height:57.5px;background:#4b4b4b"></div>
<div class="a" style="left:950px;top:268.5px;width:12px;height:1px;background:#333"></div>
<span class="a pt" style="left:938px;top:276.5px;font-size:5.6px">Adjustments</span>
<span class="a pt" style="left:938px;top:293.5px;font-size:5.6px">Swatches</span>
<span class="a pt" style="left:938px;top:310.5px;font-size:5.6px">Color</span>
<svg class="a" style="left:0;top:0" width="1000" height="330"><g fill="#c4c4c4" stroke="#c4c4c4" stroke-width="0.9">
<path d="M929 96l2.5-7 2.5 7M930 93.5h3" fill="none"/><circle cx="925.5" cy="94" r="2" fill="none"/><circle cx="924" cy="96" r="1.5" fill="none"/>
<rect x="923" y="112" width="2.5" height="2.5" fill="none"/><rect x="923" y="116" width="2.5" height="2" /><rect x="923" y="119.5" width="2.5" height="2"/><path d="M930 112c2 1 2 4 0 6" fill="none"/><path d="M929 112l1-1.5 1 1.5" fill="none"/>
<path d="M923 136.5l10 4.5-10 4.5z" stroke="none"/>
<rect x="922.5" y="161" width="5" height="3.5" fill="none"/><rect x="929" y="161" width="2" height="1.5" stroke="none"/><rect x="929" y="163.5" width="2" height="1.5" stroke="none"/><rect x="922.5" y="167" width="9" height="1.5" stroke="none"/>
<path d="M925 187v7h5v-7z" stroke="none"/><path d="M925 185l1.5 3M928 184v4M931 185l-1.5 3" fill="none"/>
<path d="M922 212h12M922 218h8" fill="none" stroke-width="0.8"/><circle cx="932" cy="217" r="2" stroke="none"/>
<path d="M922.5 236l3-8 3 8M923.5 233h4M931 228v9" fill="none"/>
<path d="M925 252h2v8M928 252v8M925 252a2 2 0 000 4h2" fill="none"/>
<circle cx="927.5" cy="281" r="4.5" stroke="none"/><path d="M924.5 284l6-6" stroke="#4b4b4b" stroke-width="1.2"/>
<g fill="none" stroke-width="0.8"><rect x="922.5" y="295" width="3" height="2.5"/><rect x="926.5" y="295" width="3" height="2.5"/><rect x="930.5" y="295" width="3" height="2.5"/><rect x="922.5" y="298.5" width="3" height="2.5"/><rect x="926.5" y="298.5" width="3" height="2.5"/><rect x="930.5" y="298.5" width="3" height="2.5"/></g>
<ellipse cx="928" cy="315.5" rx="5" ry="3.5" fill="none"/><circle cx="927" cy="313.5" r="1.2" fill="none"/><circle cx="930" cy="316" r="1.2" fill="none"/>
</g></svg>
<div class="a" style="left:995px;top:69px;width:157px;height:617px;background:#2c2c2c"></div>
<div class="a" style="left:996px;top:70px;width:152px;height:8px;background:#3b3b3b"></div>
<span class="a" style="left:999px;top:69.5px;font-size:7px;line-height:8px;color:#bbb">×</span>
<svg class="a" style="left:1142px;top:72px" width="6" height="4"><path d="M0 0l2 2-2 2zM3 0l2 2-2 2z" fill="#bbb"/></svg>
<div class="a" style="left:996px;top:78px;width:152px;height:604px;background:#4a4a4a"></div>
<div class="a" style="left:1021px;top:78px;width:127px;height:10px;background:#3a3a3a"></div>
<span class="a pt" style="left:999.5px;top:78.5px;font-size:6px;line-height:9px">Layers</span>
<span class="a pt" style="left:1025px;top:78.5px;font-size:5.9px;line-height:9px;color:#9a9a9a;font-weight:normal">Channels</span>
<span class="a pt" style="left:1059.5px;top:78.5px;font-size:5.9px;line-height:9px;color:#9a9a9a;font-weight:normal">Paths</span>
<div class="a" style="left:1055px;top:79px;width:1px;height:9px;background:#333"></div>
<svg class="a" style="left:1137px;top:80px" width="11" height="7"><path d="M0 2h3L1.5 4z" fill="#bbb"/><g fill="#888"><rect x="4" y="1" width="6" height="1"/><rect x="4" y="3" width="6" height="1"/><rect x="4" y="5" width="6" height="1"/></g></svg>
<div class="a" style="left:996px;top:104.5px;width:152px;height:1px;background:#3c3c3c"></div>
<div class="a" style="left:996px;top:121.5px;width:152px;height:1px;background:#3c3c3c"></div>
<div class="a dd" style="left:999px;top:92px;width:36px;height:9px"></div>
<svg class="a" style="left:1001px;top:93px" width="6" height="7"><circle cx="3.5" cy="3" r="2" fill="none" stroke="#ddd" stroke-width="0.8"/><path d="M2 4.5L0.5 6" stroke="#ddd" stroke-width="0.9"/></svg>
<span class="a ot" style="left:1009px;top:92px;font-size:5.4px;line-height:9px;font-weight:bold">Kind</span>
<svg class="a" style="left:1030px;top:93px" width="4" height="8"><path d="M0.5 3L2 1.5 3.5 3zM0.5 5L2 6.5 3.5 5z" fill="#ddd"/></svg>
<svg class="a" style="left:1040px;top:89px" width="85" height="16"><g fill="none" stroke="#bdbdbd" stroke-width="0.9">
<rect x="3" y="3.5" width="8" height="7"/><path d="M4 9l2-2 2 2" />
<circle cx="21.5" cy="7" r="3.5" fill="#bdbdbd"/>
<path d="M30.5 3.5h7M34 3.5v8M32.5 11.5h3"/>
<rect x="46" y="4" width="6" height="6"/>
<path d="M59 6.5h6v5h-6zM61 6.5v-3h4v3" />
<rect x="74" y="2" width="4" height="11" fill="#222" stroke="#666"/><rect x="74.5" y="2.5" width="3" height="3" fill="#777" stroke="none"/>
</g></svg>
<div class="a dd" style="left:999px;top:108.5px;width:67px;height:9px"></div>
<span class="a ot" style="left:1002px;top:108.5px;font-size:5px;line-height:9px;font-weight:bold">Normal</span>
<svg class="a" style="left:1061px;top:109.5px" width="4" height="8"><path d="M0.5 3L2 1.5 3.5 3zM0.5 5L2 6.5 3.5 5z" fill="#ddd"/></svg>
<span class="a ot" style="left:1069px;top:109px;font-size:5.4px;line-height:9px;font-weight:bold">Opacity:</span>
<div class="a" style="left:1092px;top:108.5px;width:19px;height:9px;background:#2c2c2c"></div>
<span class="a ot" style="left:1094.5px;top:108.5px;font-size:5.6px;line-height:9px">100%</span>
<div class="a" style="left:1112px;top:108.5px;width:8px;height:9px;background:#5d5d5d;border-radius:1px"></div>
<svg class="a" style="left:1114px;top:112.0px" width="4" height="3"><path d="M0 0.5h4L2 2.5z" fill="#ddd"/></svg>
<div class="a" style="left:1092px;top:125.5px;width:19px;height:9px;background:#2c2c2c"></div>
<span class="a ot" style="left:1094.5px;top:125.5px;font-size:5.6px;line-height:9px">100%</span>
<div class="a" style="left:1112px;top:125.5px;width:8px;height:9px;background:#5d5d5d;border-radius:1px"></div>
<svg class="a" style="left:1114px;top:129.0px" width="4" height="3"><path d="M0 0.5h4L2 2.5z" fill="#ddd"/></svg>
<span class="a ot" style="left:998px;top:125.5px;font-size:5.25px;line-height:9px;font-weight:bold">Lock:</span>
<svg class="a" style="left:1014px;top:123px" width="60" height="14"><g fill="none" stroke="#c4c4c4" stroke-width="0.9">
<rect x="3" y="3" width="6" height="6"/><path d="M3 6h6M6 3v6" stroke-width="0.6"/>
<path d="M16 10c1-1 2-2 3-2M19 8l5-6" stroke-width="1.2"/>
<path d="M32 2v8M28 6h8M31 3l1-1 1 1M31 9l1 1 1-1M29 5l-1 1 1 1M35 5l1 1-1 1"/>
<rect x="43" y="6" width="6" height="5" fill="#c4c4c4"/><path d="M44 6V4a2 2 0 014 0v2"/>
</g></svg>
<span class="a ot" style="left:1082px;top:125.5px;font-size:5.06px;line-height:9px;font-weight:bold">Fill:</span>
<div class="a" style="left:996px;top:137px;width:143px;height:530px;background:#3e3e3e"></div>
<div class="a" style="left:1139px;top:137px;width:9px;height:530px;background:#393939"></div>
<div class="a" style="left:1140px;top:137px;width:1px;height:530px;background:#303030"></div>
<div class="a" style="left:996px;top:139.5px;width:143px;height:15px;background:#4b4b4b"></div>
<div class="a" style="left:1037px;top:139.5px;width:102px;height:15px;background:#53627a"></div>
<div class="a" style="left:1013px;top:139.5px;width:1px;height:15px;background:#3f3f3f"></div>
<svg class="a" style="left:1000px;top:143.5px" width="8" height="6"><path d="M0.5 3C2 0.5 6 0.5 7.5 3 6 5.5 2 5.5 0.5 3z" fill="none" stroke="#c8c8c8" stroke-width="0.8"/><circle cx="4" cy="3" r="1.3" fill="#c8c8c8"/></svg>
<div class="a" style="left:1015px;top:141.0px;width:21px;height:12px;border:1px solid #ddd;background:repeating-conic-gradient(#ccc 0 25%,#fff 0 50%) 0 0/4px 4px"></div>
<span class="a pt" style="left:1040px;top:142.5px;font-size:5.38px;line-height:9px;color:#e8eef8">Construction Lines</span>
<div class="a" style="left:996px;top:154.1px;width:143px;height:1px;background:#363636"></div>
<div class="a" style="left:996px;top:155.5px;width:143px;height:15px;background:#4b4b4b"></div>
<div class="a" style="left:1013px;top:155.5px;width:1px;height:15px;background:#3f3f3f"></div>
<svg class="a" style="left:1000px;top:159.5px" width="8" height="6"><path d="M0.5 3C2 0.5 6 0.5 7.5 3 6 5.5 2 5.5 0.5 3z" fill="none" stroke="#c8c8c8" stroke-width="0.8"/><circle cx="4" cy="3" r="1.3" fill="#c8c8c8"/></svg>
<div class="a" style="left:1016px;top:158.5px;width:19px;height:10px;background:#fff"></div>
<svg class="a" style="left:1016px;top:158.5px" width="19" height="10"><path d="M2 8l6-2 8-1M4 4h3" stroke="#777" stroke-width="0.6" fill="none"/></svg>
<svg class="a" style="left:1037px;top:158.5px" width="5" height="10"><circle cx="2.5" cy="3" r="1.6" fill="none" stroke="#bbb" stroke-width="0.7"/><circle cx="2.5" cy="7" r="1.6" fill="none" stroke="#bbb" stroke-width="0.7"/></svg>
<svg class="a" style="left:1045px;top:158.5px" width="19" height="10"><rect width="19" height="10" fill="#fff"/><path d="M0 0h4v6c0 2 2 2 3 0V0h2v10H0z" fill="#000"/><path d="M11 2l8-2v10h-6c3-3 4-6-2-8z" fill="#000"/><circle cx="8" cy="2" r="1" fill="#000"/></svg>
<span class="a pt" style="left:1068px;top:158.5px;font-size:5.3px;line-height:9px">Hidden</span>
<div class="a" style="left:996px;top:170.1px;width:143px;height:1px;background:#363636"></div>
<div class="a" style="left:996px;top:171px;width:143px;height:15px;background:#4b4b4b"></div>
<div class="a" style="left:1013px;top:171px;width:1px;height:15px;background:#3f3f3f"></div>
<svg class="a" style="left:1000px;top:175px" width="8" height="6"><path d="M0.5 3C2 0.5 6 0.5 7.5 3 6 5.5 2 5.5 0.5 3z" fill="none" stroke="#c8c8c8" stroke-width="0.8"/><circle cx="4" cy="3" r="1.3" fill="#c8c8c8"/></svg>
<div class="a" style="left:1016px;top:174px;width:19px;height:10px;background:#fff"></div>
<svg class="a" style="left:1016px;top:174px" width="19" height="10"><path d="M2 8l6-2 8-1M4 4h3" stroke="#777" stroke-width="0.6" fill="none"/></svg>
<svg class="a" style="left:1037px;top:174px" width="5" height="10"><circle cx="2.5" cy="3" r="1.6" fill="none" stroke="#bbb" stroke-width="0.7"/><circle cx="2.5" cy="7" r="1.6" fill="none" stroke="#bbb" stroke-width="0.7"/></svg>
<svg class="a" style="left:1045px;top:174px" width="19" height="10"><defs><linearGradient id="eg" x1="0" x2="1"><stop offset="0.35" stop-color="#fff"/><stop offset="1" stop-color="#000"/></linearGradient></defs><rect width="19" height="10" fill="url(#eg)"/><path d="M0 0h8v4H5v6H0z" fill="#000"/><rect x="2" y="5" width="2" height="2" fill="#fff"/></svg>
<span class="a pt" style="left:1068px;top:174px;font-size:5.3px;line-height:9px">Edges</span>
<div class="a" style="left:996px;top:185.6px;width:143px;height:1px;background:#363636"></div>
<div class="a" style="left:996px;top:186.5px;width:143px;height:15px;background:#4b4b4b"></div>
<div class="a" style="left:1013px;top:186.5px;width:1px;height:15px;background:#3f3f3f"></div>
<svg class="a" style="left:1000px;top:190.5px" width="8" height="6"><path d="M0.5 3C2 0.5 6 0.5 7.5 3 6 5.5 2 5.5 0.5 3z" fill="none" stroke="#c8c8c8" stroke-width="0.8"/><circle cx="4" cy="3" r="1.3" fill="#c8c8c8"/></svg>
<div class="a" style="left:1016px;top:189.5px;width:19px;height:10px;background:#fff"></div>
<svg class="a" style="left:1016px;top:189.5px" width="19" height="10"><path d="M2 8l6-2 8-1M4 4h3" stroke="#777" stroke-width="0.6" fill="none"/></svg>
<span class="a pt" style="left:1040px;top:189.5px;font-size:5.1px;line-height:9px;">Back</span>
<div class="a" style="left:996px;top:201.1px;width:143px;height:1px;background:#363636"></div>
<div class="a" style="left:996px;top:202px;width:143px;height:15px;background:#4b4b4b"></div>
<div class="a" style="left:1013px;top:202px;width:1px;height:15px;background:#3f3f3f"></div>
<svg class="a" style="left:1000px;top:206px" width="8" height="6"><path d="M0.5 3C2 0.5 6 0.5 7.5 3 6 5.5 2 5.5 0.5 3z" fill="none" stroke="#c8c8c8" stroke-width="0.8"/><circle cx="4" cy="3" r="1.3" fill="#c8c8c8"/></svg>
<div class="a" style="left:1016px;top:205px;width:19px;height:10px;background:#fff"></div>
<svg class="a" style="left:1016px;top:205px" width="19" height="10"><path d="M2 8l6-2 8-1M4 4h3" stroke="#777" stroke-width="0.6" fill="none"/></svg>
<span class="a pt" style="left:1040px;top:205px;font-size:5.1px;line-height:9px;">White</span>
<div class="a" style="left:996px;top:216.6px;width:143px;height:1px;background:#363636"></div>
<div class="a" style="left:996px;top:667px;width:152px;height:12px;background:#4a4a4a;border-top:1px solid #555"></div>
<div class="a" style="left:996px;top:679px;width:152px;height:3px;background:#3e3e3e"></div>
<svg class="a" style="left:1020px;top:667.5px" width="120" height="12"><g fill="#bdbdbd">
<circle cx="8" cy="6" r="1.8" fill="none" stroke="#8a8a8a" stroke-width="0.8"/><circle cx="12" cy="6" r="1.8" fill="none" stroke="#8a8a8a" stroke-width="0.8"/>
<text x="23" y="9" font-size="8" font-style="italic" font-family="Liberation Serif" fill="#c4c4c4">fx</text><rect x="31" y="8.5" width="1.2" height="1.2"/>
<rect x="39" y="2.5" width="7" height="6"/><circle cx="42.5" cy="5.5" r="1.8" fill="#4a4a4a"/>
<circle cx="59" cy="5.5" r="3.3"/><path d="M56.5 8l5-5" stroke="#4a4a4a" stroke-width="1"/><rect x="63" y="8.5" width="1.2" height="1.2"/>
<path d="M71 3h3l1 1h4v5h-8z"/>
<rect x="87" y="3" width="6" height="6"/><path d="M89 5h2v2" stroke="#4a4a4a" fill="none" stroke-width="0.7"/>
<path d="M103 3h6v1h-6zM104 4.5h4l-0.5 5h-3z"/>
</g></svg>
<div class="a" style="left:0;top:675px;width:995px;height:11px;background:#4a4a4a;border-top:1px solid #404040"></div>
<span class="a ot" style="left:10px;top:676px;font-size:5.6px;line-height:9px">67.83%</span>
<div class="a" style="left:40px;top:677px;width:8px;height:7px;background:#6a6a6a;border-radius:1px"></div>
<svg class="a" style="left:41px;top:677.5px" width="6" height="6"><circle cx="3" cy="3" r="2" fill="#ddd"/></svg>
<span class="a ot" style="left:78px;top:676px;font-size:6.1px;line-height:9px">Doc: 10.1M/41.7M</span>
<svg class="a" style="left:155px;top:678px" width="6" height="6"><path d="M1 0.5l4 2.5-4 2.5z" fill="#ddd"/></svg>
<div class="a" style="left:162px;top:676px;width:833px;height:10px;background:#3c3c3c"></div>
<div class="a" style="left:0;top:686px;width:1152px;height:34px;background:#3a3a3a"></div>
<div class="a" style="left:0;top:686px;width:1152px;height:8px;background:#292929"></div>
<div class="a" style="left:0;top:694px;width:1152px;height:10px;background:#313131"></div>
<div class="a" style="left:440px;top:686px;width:167px;height:9px;background:#242424"></div>
<div class="a" style="left:690px;top:686px;width:1px;height:18px;background:#444"></div>
<div class="a" style="left:888px;top:686px;width:1px;height:30px;background:#444"></div>
<span class="a" style="left:456px;top:686px;font-size:5px;line-height:7px;color:#777">67.83</span>
<span class="a" style="left:519px;top:686px;font-size:5.2px;line-height:7px;color:#888">DOC: 10.1M/10.1M</span>
<div class="a" style="left:0;top:716px;width:1152px;height:4px;background:#1e2a48"></div>
<div class="a" style="left:25px;top:686px;width:36px;height:1px;background:#b08a3e"></div>
<svg class="a" style="left:0;top:686px" width="22" height="20"><g fill="none" stroke="#6a6a6a" stroke-width="1.2"><path d="M2 18l3-8 3 8M2 9l3-8 3 8"/><path d="M16 18h-4v-7h4M14 9V1"/></g></svg>
</body></html>
